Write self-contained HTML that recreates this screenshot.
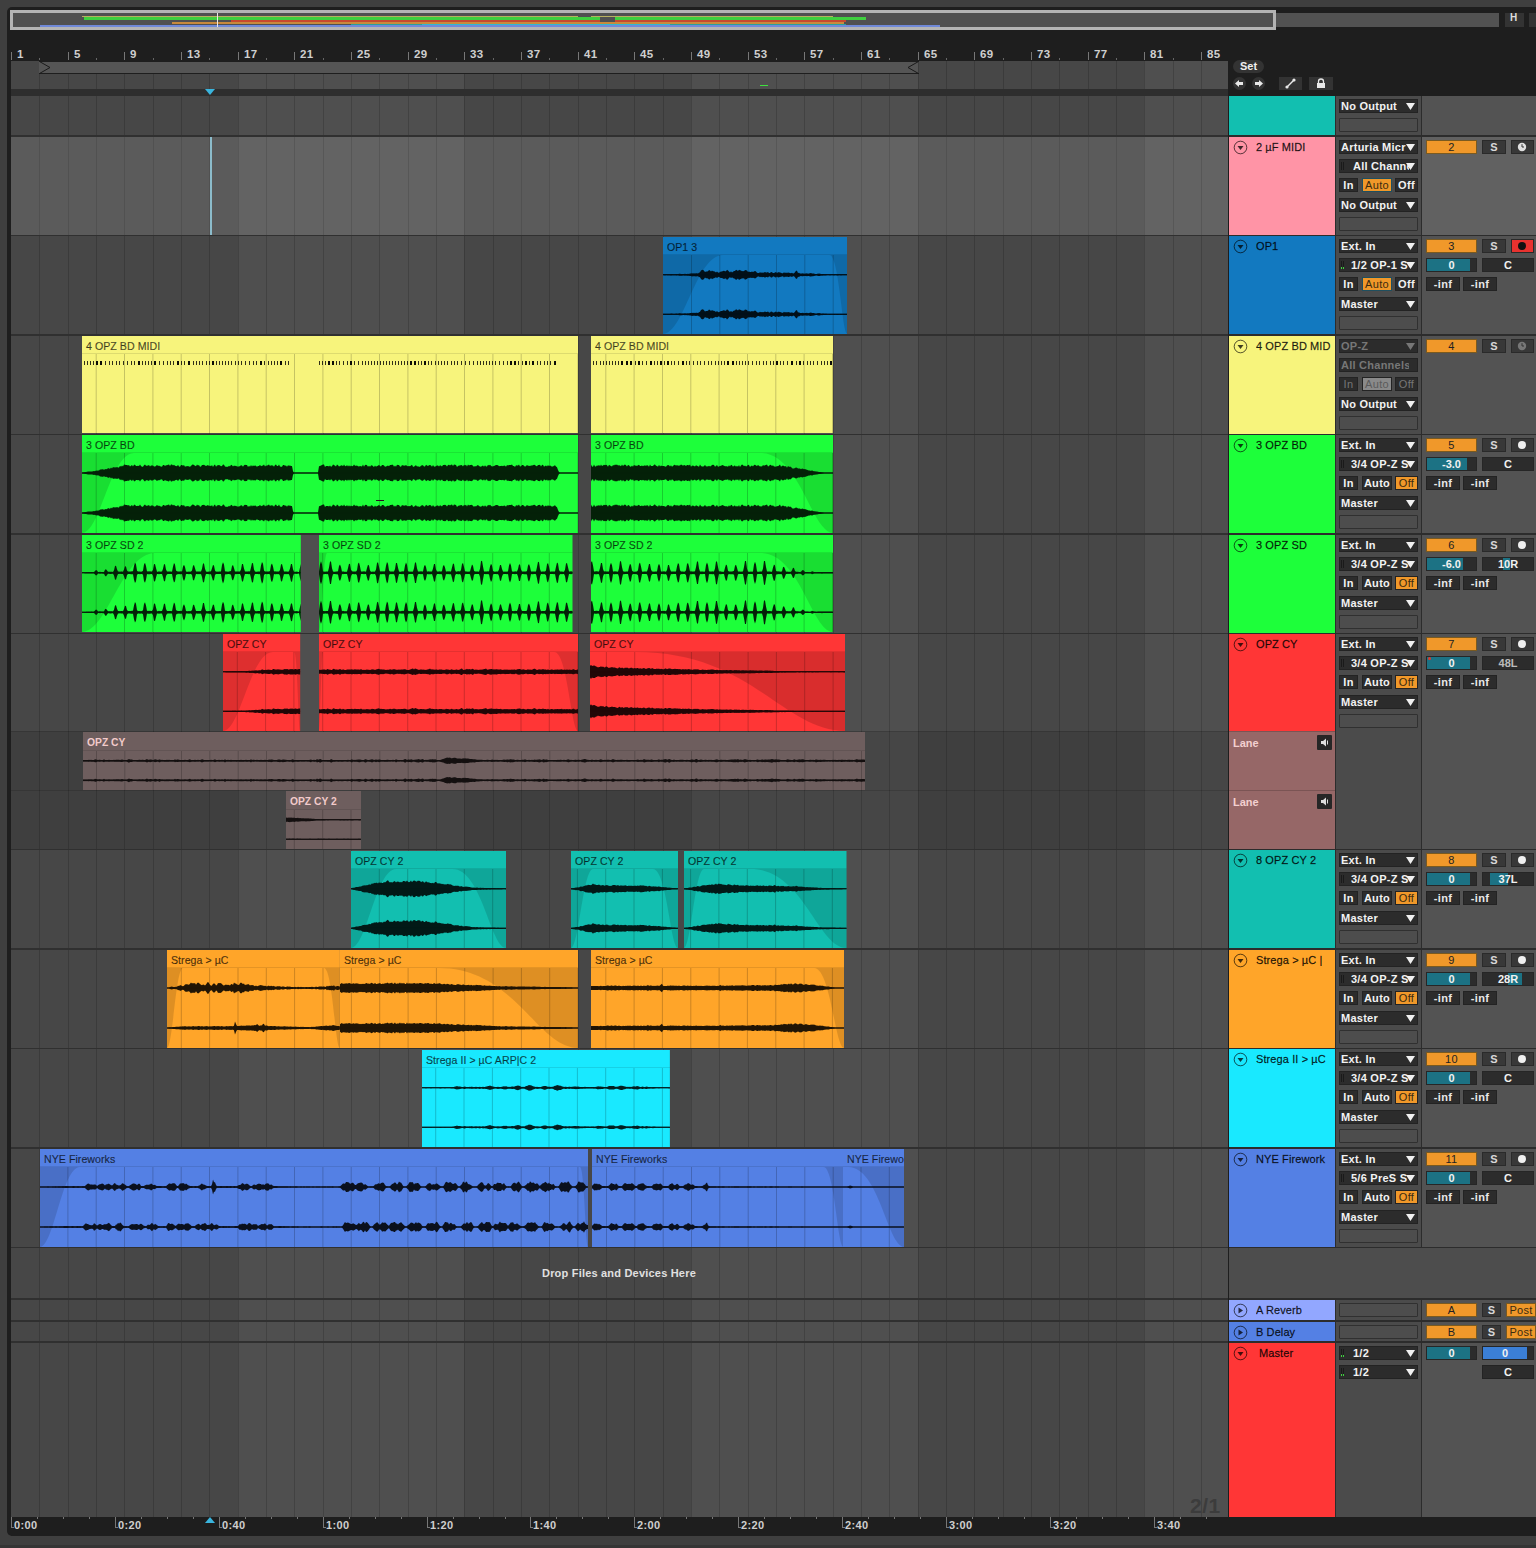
<!DOCTYPE html><html><head><meta charset="utf-8"><style>
html,body{margin:0;padding:0;width:1536px;height:1548px;overflow:hidden;background:#3f3f3f}
body{position:relative;font-family:"Liberation Sans",sans-serif}
div,span,svg{position:absolute;box-sizing:border-box}
span{white-space:nowrap;line-height:1}
</style></head><body>
<div style="left:0px;top:0px;width:1536px;height:1548px;background:#3f3f3f;"></div>
<div style="left:0px;top:1545px;width:1536px;height:3px;background:#353535;"></div>
<div style="left:7px;top:7px;width:1529px;height:1529px;background:#1e1e1e;border-radius:5px 0 0 5px;"></div>
<div style="left:10px;top:10px;width:1266px;height:20px;background:#b4b4b4;"></div>
<div style="left:13px;top:13px;width:1260px;height:14px;background:#505050;"></div>
<div style="left:1276px;top:13px;width:223px;height:14px;background:#525252;"></div>
<div style="left:1505px;top:13px;width:19px;height:14px;background:#333;"></div>
<span style="left:1510px;top:13px;font-size:10px;color:#ddd;font-weight:bold;">H</span>
<div style="left:1529px;top:13px;width:7px;height:14px;background:#333;"></div>
<div style="left:82px;top:16px;width:496px;height:1px;background:#b8b060;"></div>
<div style="left:591px;top:16px;width:242px;height:1px;background:#b8b060;"></div>
<div style="left:84px;top:17px;width:516px;height:3px;background:#3fcf3f;"></div>
<div style="left:615px;top:17px;width:251px;height:3px;background:#3fcf3f;"></div>
<div style="left:231px;top:20px;width:369px;height:2px;background:#c8482e;"></div>
<div style="left:615px;top:20px;width:231px;height:2px;background:#c8482e;"></div>
<div style="left:172px;top:22px;width:672px;height:2px;background:#c88a3c;"></div>
<div style="left:351px;top:24px;width:155px;height:1px;background:#2a9f9a;"></div>
<div style="left:571px;top:24px;width:275px;height:1px;background:#2a9f9a;"></div>
<div style="left:422px;top:24px;width:248px;height:1px;background:#2fb8d0;"></div>
<div style="left:40px;top:25px;width:900px;height:2px;background:#7089d8;"></div>
<div style="left:217px;top:13px;width:1px;height:14px;background:#e8e8e8;"></div>
<div style="left:11px;top:52px;width:1px;height:8px;background:#777;"></div>
<span style="left:17px;top:49px;font-size:11.5px;color:#cfcfcf;font-weight:bold;letter-spacing:0.3px;">1</span>
<div style="left:68px;top:52px;width:1px;height:8px;background:#777;"></div>
<span style="left:74px;top:49px;font-size:11.5px;color:#cfcfcf;font-weight:bold;letter-spacing:0.3px;">5</span>
<div style="left:124px;top:52px;width:1px;height:8px;background:#777;"></div>
<span style="left:130px;top:49px;font-size:11.5px;color:#cfcfcf;font-weight:bold;letter-spacing:0.3px;">9</span>
<div style="left:181px;top:52px;width:1px;height:8px;background:#777;"></div>
<span style="left:187px;top:49px;font-size:11.5px;color:#cfcfcf;font-weight:bold;letter-spacing:0.3px;">13</span>
<div style="left:238px;top:52px;width:1px;height:8px;background:#777;"></div>
<span style="left:244px;top:49px;font-size:11.5px;color:#cfcfcf;font-weight:bold;letter-spacing:0.3px;">17</span>
<div style="left:294px;top:52px;width:1px;height:8px;background:#777;"></div>
<span style="left:300px;top:49px;font-size:11.5px;color:#cfcfcf;font-weight:bold;letter-spacing:0.3px;">21</span>
<div style="left:351px;top:52px;width:1px;height:8px;background:#777;"></div>
<span style="left:357px;top:49px;font-size:11.5px;color:#cfcfcf;font-weight:bold;letter-spacing:0.3px;">25</span>
<div style="left:408px;top:52px;width:1px;height:8px;background:#777;"></div>
<span style="left:414px;top:49px;font-size:11.5px;color:#cfcfcf;font-weight:bold;letter-spacing:0.3px;">29</span>
<div style="left:464px;top:52px;width:1px;height:8px;background:#777;"></div>
<span style="left:470px;top:49px;font-size:11.5px;color:#cfcfcf;font-weight:bold;letter-spacing:0.3px;">33</span>
<div style="left:521px;top:52px;width:1px;height:8px;background:#777;"></div>
<span style="left:527px;top:49px;font-size:11.5px;color:#cfcfcf;font-weight:bold;letter-spacing:0.3px;">37</span>
<div style="left:578px;top:52px;width:1px;height:8px;background:#777;"></div>
<span style="left:584px;top:49px;font-size:11.5px;color:#cfcfcf;font-weight:bold;letter-spacing:0.3px;">41</span>
<div style="left:634px;top:52px;width:1px;height:8px;background:#777;"></div>
<span style="left:640px;top:49px;font-size:11.5px;color:#cfcfcf;font-weight:bold;letter-spacing:0.3px;">45</span>
<div style="left:691px;top:52px;width:1px;height:8px;background:#777;"></div>
<span style="left:697px;top:49px;font-size:11.5px;color:#cfcfcf;font-weight:bold;letter-spacing:0.3px;">49</span>
<div style="left:748px;top:52px;width:1px;height:8px;background:#777;"></div>
<span style="left:754px;top:49px;font-size:11.5px;color:#cfcfcf;font-weight:bold;letter-spacing:0.3px;">53</span>
<div style="left:804px;top:52px;width:1px;height:8px;background:#777;"></div>
<span style="left:810px;top:49px;font-size:11.5px;color:#cfcfcf;font-weight:bold;letter-spacing:0.3px;">57</span>
<div style="left:861px;top:52px;width:1px;height:8px;background:#777;"></div>
<span style="left:867px;top:49px;font-size:11.5px;color:#cfcfcf;font-weight:bold;letter-spacing:0.3px;">61</span>
<div style="left:918px;top:52px;width:1px;height:8px;background:#777;"></div>
<span style="left:924px;top:49px;font-size:11.5px;color:#cfcfcf;font-weight:bold;letter-spacing:0.3px;">65</span>
<div style="left:974px;top:52px;width:1px;height:8px;background:#777;"></div>
<span style="left:980px;top:49px;font-size:11.5px;color:#cfcfcf;font-weight:bold;letter-spacing:0.3px;">69</span>
<div style="left:1031px;top:52px;width:1px;height:8px;background:#777;"></div>
<span style="left:1037px;top:49px;font-size:11.5px;color:#cfcfcf;font-weight:bold;letter-spacing:0.3px;">73</span>
<div style="left:1088px;top:52px;width:1px;height:8px;background:#777;"></div>
<span style="left:1094px;top:49px;font-size:11.5px;color:#cfcfcf;font-weight:bold;letter-spacing:0.3px;">77</span>
<div style="left:1144px;top:52px;width:1px;height:8px;background:#777;"></div>
<span style="left:1150px;top:49px;font-size:11.5px;color:#cfcfcf;font-weight:bold;letter-spacing:0.3px;">81</span>
<div style="left:1201px;top:52px;width:1px;height:8px;background:#777;"></div>
<span style="left:1207px;top:49px;font-size:11.5px;color:#cfcfcf;font-weight:bold;letter-spacing:0.3px;">85</span>
<div style="left:39px;top:58px;width:1px;height:2px;background:#666;"></div>
<div style="left:96px;top:58px;width:1px;height:2px;background:#666;"></div>
<div style="left:153px;top:58px;width:1px;height:2px;background:#666;"></div>
<div style="left:209px;top:58px;width:1px;height:2px;background:#666;"></div>
<div style="left:266px;top:58px;width:1px;height:2px;background:#666;"></div>
<div style="left:323px;top:58px;width:1px;height:2px;background:#666;"></div>
<div style="left:379px;top:58px;width:1px;height:2px;background:#666;"></div>
<div style="left:436px;top:58px;width:1px;height:2px;background:#666;"></div>
<div style="left:493px;top:58px;width:1px;height:2px;background:#666;"></div>
<div style="left:549px;top:58px;width:1px;height:2px;background:#666;"></div>
<div style="left:606px;top:58px;width:1px;height:2px;background:#666;"></div>
<div style="left:663px;top:58px;width:1px;height:2px;background:#666;"></div>
<div style="left:719px;top:58px;width:1px;height:2px;background:#666;"></div>
<div style="left:776px;top:58px;width:1px;height:2px;background:#666;"></div>
<div style="left:833px;top:58px;width:1px;height:2px;background:#666;"></div>
<div style="left:889px;top:58px;width:1px;height:2px;background:#666;"></div>
<div style="left:946px;top:58px;width:1px;height:2px;background:#666;"></div>
<div style="left:1003px;top:58px;width:1px;height:2px;background:#666;"></div>
<div style="left:1059px;top:58px;width:1px;height:2px;background:#666;"></div>
<div style="left:1116px;top:58px;width:1px;height:2px;background:#666;"></div>
<div style="left:1173px;top:58px;width:1px;height:2px;background:#666;"></div>
<div style="left:11px;top:61px;width:227px;height:1456px;background:#474747;"></div>
<div style="left:238px;top:61px;width:226px;height:1456px;background:#4f4f4f;"></div>
<div style="left:464px;top:61px;width:227px;height:1456px;background:#474747;"></div>
<div style="left:691px;top:61px;width:227px;height:1456px;background:#4f4f4f;"></div>
<div style="left:918px;top:61px;width:226px;height:1456px;background:#474747;"></div>
<div style="left:1144px;top:61px;width:84px;height:1456px;background:#4f4f4f;"></div>
<div style="left:39px;top:61px;width:1px;height:1456px;background:rgba(0,0,0,0.16);"></div>
<div style="left:68px;top:61px;width:1px;height:1456px;background:rgba(0,0,0,0.16);"></div>
<div style="left:96px;top:61px;width:1px;height:1456px;background:rgba(0,0,0,0.16);"></div>
<div style="left:124px;top:61px;width:1px;height:1456px;background:rgba(0,0,0,0.16);"></div>
<div style="left:153px;top:61px;width:1px;height:1456px;background:rgba(0,0,0,0.16);"></div>
<div style="left:181px;top:61px;width:1px;height:1456px;background:rgba(0,0,0,0.16);"></div>
<div style="left:209px;top:61px;width:1px;height:1456px;background:rgba(0,0,0,0.16);"></div>
<div style="left:238px;top:61px;width:1px;height:1456px;background:rgba(0,0,0,0.16);"></div>
<div style="left:266px;top:61px;width:1px;height:1456px;background:rgba(0,0,0,0.16);"></div>
<div style="left:294px;top:61px;width:1px;height:1456px;background:rgba(0,0,0,0.16);"></div>
<div style="left:323px;top:61px;width:1px;height:1456px;background:rgba(0,0,0,0.16);"></div>
<div style="left:351px;top:61px;width:1px;height:1456px;background:rgba(0,0,0,0.16);"></div>
<div style="left:379px;top:61px;width:1px;height:1456px;background:rgba(0,0,0,0.16);"></div>
<div style="left:408px;top:61px;width:1px;height:1456px;background:rgba(0,0,0,0.16);"></div>
<div style="left:436px;top:61px;width:1px;height:1456px;background:rgba(0,0,0,0.16);"></div>
<div style="left:464px;top:61px;width:1px;height:1456px;background:rgba(0,0,0,0.16);"></div>
<div style="left:493px;top:61px;width:1px;height:1456px;background:rgba(0,0,0,0.16);"></div>
<div style="left:521px;top:61px;width:1px;height:1456px;background:rgba(0,0,0,0.16);"></div>
<div style="left:549px;top:61px;width:1px;height:1456px;background:rgba(0,0,0,0.16);"></div>
<div style="left:578px;top:61px;width:1px;height:1456px;background:rgba(0,0,0,0.16);"></div>
<div style="left:606px;top:61px;width:1px;height:1456px;background:rgba(0,0,0,0.16);"></div>
<div style="left:634px;top:61px;width:1px;height:1456px;background:rgba(0,0,0,0.16);"></div>
<div style="left:663px;top:61px;width:1px;height:1456px;background:rgba(0,0,0,0.16);"></div>
<div style="left:691px;top:61px;width:1px;height:1456px;background:rgba(0,0,0,0.16);"></div>
<div style="left:719px;top:61px;width:1px;height:1456px;background:rgba(0,0,0,0.16);"></div>
<div style="left:748px;top:61px;width:1px;height:1456px;background:rgba(0,0,0,0.16);"></div>
<div style="left:776px;top:61px;width:1px;height:1456px;background:rgba(0,0,0,0.16);"></div>
<div style="left:804px;top:61px;width:1px;height:1456px;background:rgba(0,0,0,0.16);"></div>
<div style="left:833px;top:61px;width:1px;height:1456px;background:rgba(0,0,0,0.16);"></div>
<div style="left:861px;top:61px;width:1px;height:1456px;background:rgba(0,0,0,0.16);"></div>
<div style="left:889px;top:61px;width:1px;height:1456px;background:rgba(0,0,0,0.16);"></div>
<div style="left:918px;top:61px;width:1px;height:1456px;background:rgba(0,0,0,0.16);"></div>
<div style="left:946px;top:61px;width:1px;height:1456px;background:rgba(0,0,0,0.16);"></div>
<div style="left:974px;top:61px;width:1px;height:1456px;background:rgba(0,0,0,0.16);"></div>
<div style="left:1003px;top:61px;width:1px;height:1456px;background:rgba(0,0,0,0.16);"></div>
<div style="left:1031px;top:61px;width:1px;height:1456px;background:rgba(0,0,0,0.16);"></div>
<div style="left:1059px;top:61px;width:1px;height:1456px;background:rgba(0,0,0,0.16);"></div>
<div style="left:1088px;top:61px;width:1px;height:1456px;background:rgba(0,0,0,0.16);"></div>
<div style="left:1116px;top:61px;width:1px;height:1456px;background:rgba(0,0,0,0.16);"></div>
<div style="left:1144px;top:61px;width:1px;height:1456px;background:rgba(0,0,0,0.16);"></div>
<div style="left:1173px;top:61px;width:1px;height:1456px;background:rgba(0,0,0,0.16);"></div>
<div style="left:1201px;top:61px;width:1px;height:1456px;background:rgba(0,0,0,0.16);"></div>
<div style="left:39px;top:61px;width:879px;height:12px;background:#555555;"></div>
<div style="left:39px;top:61px;width:880px;height:1px;background:#1e1e1e;"></div>
<div style="left:39px;top:73px;width:880px;height:1px;background:#1e1e1e;"></div>
<div style="left:11px;top:89px;width:1217px;height:7px;background:#2e2e2e;"></div>
<div style="left:11px;top:137px;width:1217px;height:98px;background:rgba(255,255,255,0.115);"></div>
<div style="left:11px;top:731px;width:1217px;height:118px;background:rgba(0,0,0,0.1);"></div>
<div style="left:11px;top:135px;width:1217px;height:2px;background:#303030;"></div>
<div style="left:11px;top:235px;width:1217px;height:1px;background:#303030;"></div>
<div style="left:11px;top:334px;width:1217px;height:2px;background:#303030;"></div>
<div style="left:11px;top:434px;width:1217px;height:1px;background:#303030;"></div>
<div style="left:11px;top:533px;width:1217px;height:2px;background:#303030;"></div>
<div style="left:11px;top:633px;width:1217px;height:1px;background:#303030;"></div>
<div style="left:11px;top:731px;width:1217px;height:1px;background:rgba(0,0,0,0.14);"></div>
<div style="left:11px;top:790px;width:1217px;height:1px;background:rgba(0,0,0,0.14);"></div>
<div style="left:11px;top:849px;width:1217px;height:1px;background:#303030;"></div>
<div style="left:11px;top:948px;width:1217px;height:2px;background:#303030;"></div>
<div style="left:11px;top:1048px;width:1217px;height:1px;background:#303030;"></div>
<div style="left:11px;top:1147px;width:1217px;height:2px;background:#303030;"></div>
<div style="left:11px;top:1247px;width:1217px;height:1px;background:#303030;"></div>
<div style="left:11px;top:1298px;width:1217px;height:2px;background:#303030;"></div>
<div style="left:11px;top:1320px;width:1217px;height:2px;background:#303030;"></div>
<div style="left:11px;top:1341px;width:1217px;height:2px;background:#303030;"></div>
<div style="left:11px;top:1517px;width:1525px;height:19px;background:#1e1e1e;"></div>
<div style="left:11px;top:1517px;width:1px;height:2px;background:#777;"></div>
<div style="left:37px;top:1517px;width:1px;height:2px;background:#777;"></div>
<div style="left:63px;top:1517px;width:1px;height:2px;background:#777;"></div>
<div style="left:89px;top:1517px;width:1px;height:2px;background:#777;"></div>
<div style="left:115px;top:1517px;width:1px;height:2px;background:#777;"></div>
<div style="left:141px;top:1517px;width:1px;height:2px;background:#777;"></div>
<div style="left:167px;top:1517px;width:1px;height:2px;background:#777;"></div>
<div style="left:193px;top:1517px;width:1px;height:2px;background:#777;"></div>
<div style="left:219px;top:1517px;width:1px;height:2px;background:#777;"></div>
<div style="left:245px;top:1517px;width:1px;height:2px;background:#777;"></div>
<div style="left:271px;top:1517px;width:1px;height:2px;background:#777;"></div>
<div style="left:297px;top:1517px;width:1px;height:2px;background:#777;"></div>
<div style="left:323px;top:1517px;width:1px;height:2px;background:#777;"></div>
<div style="left:349px;top:1517px;width:1px;height:2px;background:#777;"></div>
<div style="left:375px;top:1517px;width:1px;height:2px;background:#777;"></div>
<div style="left:401px;top:1517px;width:1px;height:2px;background:#777;"></div>
<div style="left:427px;top:1517px;width:1px;height:2px;background:#777;"></div>
<div style="left:453px;top:1517px;width:1px;height:2px;background:#777;"></div>
<div style="left:479px;top:1517px;width:1px;height:2px;background:#777;"></div>
<div style="left:505px;top:1517px;width:1px;height:2px;background:#777;"></div>
<div style="left:530px;top:1517px;width:1px;height:2px;background:#777;"></div>
<div style="left:556px;top:1517px;width:1px;height:2px;background:#777;"></div>
<div style="left:582px;top:1517px;width:1px;height:2px;background:#777;"></div>
<div style="left:608px;top:1517px;width:1px;height:2px;background:#777;"></div>
<div style="left:634px;top:1517px;width:1px;height:2px;background:#777;"></div>
<div style="left:660px;top:1517px;width:1px;height:2px;background:#777;"></div>
<div style="left:686px;top:1517px;width:1px;height:2px;background:#777;"></div>
<div style="left:712px;top:1517px;width:1px;height:2px;background:#777;"></div>
<div style="left:738px;top:1517px;width:1px;height:2px;background:#777;"></div>
<div style="left:764px;top:1517px;width:1px;height:2px;background:#777;"></div>
<div style="left:790px;top:1517px;width:1px;height:2px;background:#777;"></div>
<div style="left:816px;top:1517px;width:1px;height:2px;background:#777;"></div>
<div style="left:842px;top:1517px;width:1px;height:2px;background:#777;"></div>
<div style="left:868px;top:1517px;width:1px;height:2px;background:#777;"></div>
<div style="left:894px;top:1517px;width:1px;height:2px;background:#777;"></div>
<div style="left:920px;top:1517px;width:1px;height:2px;background:#777;"></div>
<div style="left:946px;top:1517px;width:1px;height:2px;background:#777;"></div>
<div style="left:972px;top:1517px;width:1px;height:2px;background:#777;"></div>
<div style="left:998px;top:1517px;width:1px;height:2px;background:#777;"></div>
<div style="left:1024px;top:1517px;width:1px;height:2px;background:#777;"></div>
<div style="left:1050px;top:1517px;width:1px;height:2px;background:#777;"></div>
<div style="left:1076px;top:1517px;width:1px;height:2px;background:#777;"></div>
<div style="left:1102px;top:1517px;width:1px;height:2px;background:#777;"></div>
<div style="left:1128px;top:1517px;width:1px;height:2px;background:#777;"></div>
<div style="left:1154px;top:1517px;width:1px;height:2px;background:#777;"></div>
<div style="left:1180px;top:1517px;width:1px;height:2px;background:#777;"></div>
<div style="left:1206px;top:1517px;width:1px;height:2px;background:#777;"></div>
<div style="left:11px;top:1518px;width:1px;height:10px;background:#777;"></div>
<div style="left:11px;top:1527px;width:3px;height:1px;background:#777;"></div>
<span style="left:14px;top:1520px;font-size:11px;color:#cfcfcf;font-weight:bold;letter-spacing:0.4px;">0:00</span>
<div style="left:115px;top:1518px;width:1px;height:10px;background:#777;"></div>
<div style="left:115px;top:1527px;width:3px;height:1px;background:#777;"></div>
<span style="left:118px;top:1520px;font-size:11px;color:#cfcfcf;font-weight:bold;letter-spacing:0.4px;">0:20</span>
<div style="left:219px;top:1518px;width:1px;height:10px;background:#777;"></div>
<div style="left:219px;top:1527px;width:3px;height:1px;background:#777;"></div>
<span style="left:222px;top:1520px;font-size:11px;color:#cfcfcf;font-weight:bold;letter-spacing:0.4px;">0:40</span>
<div style="left:323px;top:1518px;width:1px;height:10px;background:#777;"></div>
<div style="left:323px;top:1527px;width:3px;height:1px;background:#777;"></div>
<span style="left:326px;top:1520px;font-size:11px;color:#cfcfcf;font-weight:bold;letter-spacing:0.4px;">1:00</span>
<div style="left:427px;top:1518px;width:1px;height:10px;background:#777;"></div>
<div style="left:427px;top:1527px;width:3px;height:1px;background:#777;"></div>
<span style="left:430px;top:1520px;font-size:11px;color:#cfcfcf;font-weight:bold;letter-spacing:0.4px;">1:20</span>
<div style="left:530px;top:1518px;width:1px;height:10px;background:#777;"></div>
<div style="left:530px;top:1527px;width:3px;height:1px;background:#777;"></div>
<span style="left:533px;top:1520px;font-size:11px;color:#cfcfcf;font-weight:bold;letter-spacing:0.4px;">1:40</span>
<div style="left:634px;top:1518px;width:1px;height:10px;background:#777;"></div>
<div style="left:634px;top:1527px;width:3px;height:1px;background:#777;"></div>
<span style="left:637px;top:1520px;font-size:11px;color:#cfcfcf;font-weight:bold;letter-spacing:0.4px;">2:00</span>
<div style="left:738px;top:1518px;width:1px;height:10px;background:#777;"></div>
<div style="left:738px;top:1527px;width:3px;height:1px;background:#777;"></div>
<span style="left:741px;top:1520px;font-size:11px;color:#cfcfcf;font-weight:bold;letter-spacing:0.4px;">2:20</span>
<div style="left:842px;top:1518px;width:1px;height:10px;background:#777;"></div>
<div style="left:842px;top:1527px;width:3px;height:1px;background:#777;"></div>
<span style="left:845px;top:1520px;font-size:11px;color:#cfcfcf;font-weight:bold;letter-spacing:0.4px;">2:40</span>
<div style="left:946px;top:1518px;width:1px;height:10px;background:#777;"></div>
<div style="left:946px;top:1527px;width:3px;height:1px;background:#777;"></div>
<span style="left:949px;top:1520px;font-size:11px;color:#cfcfcf;font-weight:bold;letter-spacing:0.4px;">3:00</span>
<div style="left:1050px;top:1518px;width:1px;height:10px;background:#777;"></div>
<div style="left:1050px;top:1527px;width:3px;height:1px;background:#777;"></div>
<span style="left:1053px;top:1520px;font-size:11px;color:#cfcfcf;font-weight:bold;letter-spacing:0.4px;">3:20</span>
<div style="left:1154px;top:1518px;width:1px;height:10px;background:#777;"></div>
<div style="left:1154px;top:1527px;width:3px;height:1px;background:#777;"></div>
<span style="left:1157px;top:1520px;font-size:11px;color:#cfcfcf;font-weight:bold;letter-spacing:0.4px;">3:40</span>
<span style="left:1190px;top:1495px;font-size:21px;color:#3c3c3c;font-weight:bold;letter-spacing:0.5px;">2/1</span>
<svg style="left:662.5px;top:237px" width="184.4" height="97" viewBox="0 0 184.4 97"><rect x="0" y="0" width="184.4" height="97" fill="#1279C0"/><path d="M0 18 L60.0 18 C33.0 18 21.0 97 0 97 Z" fill="rgba(0,0,0,0.13)"/><path d="M184.4 18 L166.4 18 C176.3 18 179.0 97 184.4 97 Z" fill="rgba(0,0,0,0.13)"/><rect x="0" y="17" width="184.4" height="1" fill="rgba(0,0,0,0.10)"/><rect x="28.0" y="18" width="1" height="79" fill="rgba(0,0,0,0.2)"/><rect x="56.3" y="18" width="1" height="79" fill="rgba(0,0,0,0.2)"/><rect x="84.7" y="18" width="1" height="79" fill="rgba(0,0,0,0.2)"/><rect x="113.0" y="18" width="1" height="79" fill="rgba(0,0,0,0.2)"/><rect x="141.3" y="18" width="1" height="79" fill="rgba(0,0,0,0.2)"/><rect x="169.7" y="18" width="1" height="79" fill="rgba(0,0,0,0.2)"/><path id="w70114800" d="M0 -0.5 1 -0.5 2 -0.6 3 -0.5 4 -0.5 5 -0.6 6 -0.5 7 -0.6 8 -0.7 9 -0.7 10 -0.5 11 -0.6 12 -0.5 13 -0.8 14 -0.8 15 -0.5 16 -1 17 -1 18 -0.9 19 -0.9 20 -0.7 21 -0.7 22 -1 23 -0.8 24 -0.9 25 -1 26 -0.9 27 -1.2 28 -1.2 29 -1.6 30 -1.4 31 -1.5 32 -1.4 33 -1.6 34 -1.5 35 -1.4 36 -2.1 37 -2.5 38 -4.2 39 -4.9 40 -5 41 -4.1 42 -2.7 43 -3.4 44 -3.4 45 -3.6 46 -4.7 47 -4.4 48 -3.2 49 -4.4 50 -3.6 51 -3.5 52 -3 53 -2.4 54 -3.2 55 -2.4 56 -2 57 -2.9 58 -3.2 59 -3.3 60 -3.8 61 -4.1 62 -3.6 63 -3.6 64 -5.1 65 -4.3 66 -3.2 67 -2.2 68 -3.5 69 -2.4 70 -3.1 71 -3.7 72 -3.9 73 -5.1 74 -4.5 75 -3.8 76 -5.1 77 -4.5 78 -4.3 79 -3.5 80 -3.7 81 -3.5 82 -4.9 83 -4.5 84 -4.3 85 -2.9 86 -3.2 87 -2.9 88 -2.9 89 -3.3 90 -2.9 91 -3.2 92 -3.7 93 -3.3 94 -2.1 95 -1.8 96 -1.8 97 -2.5 98 -2 99 -2.4 100 -2.1 101 -2.2 102 -2.9 103 -2.2 104 -2.3 105 -2.7 106 -1.8 107 -1.8 108 -2.7 109 -2.6 110 -1.8 111 -1.8 112 -2.4 113 -2.7 114 -1.7 115 -2.6 116 -2.5 117 -2.2 118 -2 119 -1.6 120 -1.5 121 -2.6 122 -1.7 123 -2.2 124 -1.7 125 -2.3 126 -2.1 127 -1.7 128 -1.6 129 -2.1 130 -1.4 131 -1.5 132 -2.5 133 -4 134 -4 135 -1.9 136 -2.1 137 -1.4 138 -1.2 139 -1.4 140 -1.5 141 -1.1 142 -1.2 143 -1.3 144 -1.5 145 -1.1 146 -1.3 147 -1.6 148 -1.7 149 -1.4 150 -1.4 151 -1.3 152 -0.9 153 -0.8 154 -0.8 155 -1.3 156 -1.1 157 -1.2 158 -0.6 159 -0.9 160 -0.8 161 -0.8 162 -0.6 163 -0.8 164 -0.5 165 -0.5 166 -0.5 167 -0.6 168 -0.5 169 -0.5 170 -0.5 171 -0.6 172 -0.5 173 -0.5 174 -0.6 175 -0.6 176 -0.5 177 -0.5 178 -0.6 179 -0.5 180 -0.5 181 -0.5 182 -0.5 183 -0.5 184 -0.5 184.4 -0.5 L184.4 0.5 184 0.5 183 0.5 182 0.5 181 0.5 180 0.5 179 0.5 178 0.6 177 0.5 176 0.5 175 0.6 174 0.6 173 0.5 172 0.5 171 0.6 170 0.5 169 0.5 168 0.5 167 0.6 166 0.5 165 0.5 164 0.5 163 0.8 162 0.6 161 0.8 160 0.8 159 0.9 158 0.6 157 1.2 156 1.1 155 1.3 154 0.8 153 0.8 152 0.9 151 1.3 150 1.4 149 1.4 148 1.7 147 1.6 146 1.3 145 1.1 144 1.5 143 1.3 142 1.2 141 1.1 140 1.5 139 1.4 138 1.2 137 1.4 136 2.1 135 1.9 134 4 133 4 132 2.5 131 1.5 130 1.4 129 2.1 128 1.6 127 1.7 126 2.1 125 2.3 124 1.7 123 2.2 122 1.7 121 2.6 120 1.5 119 1.6 118 2 117 2.2 116 2.5 115 2.6 114 1.7 113 2.7 112 2.4 111 1.8 110 1.8 109 2.6 108 2.7 107 1.8 106 1.8 105 2.7 104 2.3 103 2.2 102 2.9 101 2.2 100 2.1 99 2.4 98 2 97 2.5 96 1.8 95 1.8 94 2.1 93 3.3 92 3.7 91 3.2 90 2.9 89 3.3 88 2.9 87 2.9 86 3.2 85 2.9 84 4.3 83 4.5 82 4.9 81 3.5 80 3.7 79 3.5 78 4.3 77 4.5 76 5.1 75 3.8 74 4.5 73 5.1 72 3.9 71 3.7 70 3.1 69 2.4 68 3.5 67 2.2 66 3.2 65 4.3 64 5.1 63 3.6 62 3.6 61 4.1 60 3.8 59 3.3 58 3.2 57 2.9 56 2 55 2.4 54 3.2 53 2.4 52 3 51 3.5 50 3.6 49 4.4 48 3.2 47 4.4 46 4.7 45 3.6 44 3.4 43 3.4 42 2.7 41 4.1 40 5 39 4.9 38 4.2 37 2.5 36 2.1 35 1.4 34 1.5 33 1.6 32 1.4 31 1.5 30 1.4 29 1.6 28 1.2 27 1.2 26 0.9 25 1 24 0.9 23 0.8 22 1 21 0.7 20 0.7 19 0.9 18 0.9 17 1 16 1 15 0.5 14 0.8 13 0.8 12 0.5 11 0.6 10 0.5 9 0.7 8 0.7 7 0.6 6 0.5 5 0.6 4 0.5 3 0.5 2 0.6 1 0.5 0 0.5Z" fill="#021019" transform="translate(0 37.8)"/><use href="#w70114800" transform="translate(0 39.5)"/><rect x="0" y="37.2" width="184.4" height="1" fill="#021019"/><rect x="0" y="76.8" width="184.4" height="1" fill="#021019"/><text x="4" y="14" font-size="10.6" fill="rgba(0,0,0,0.68)" font-weight="normal" letter-spacing="0.05" stroke="rgba(0,0,0,0.68)" stroke-width="0.2" font-family="Liberation Sans">OP1 3</text></svg>
<svg style="left:81.8px;top:336px" width="496.5" height="97" viewBox="0 0 496.5 97"><rect x="0" y="0" width="496.5" height="97" fill="#F7F47C"/><rect x="0" y="17" width="496.5" height="1" fill="rgba(0,0,0,0.10)"/><rect x="13.7" y="18" width="1" height="79" fill="rgba(0,0,0,0.2)"/><rect x="42.0" y="18" width="1" height="79" fill="rgba(0,0,0,0.2)"/><rect x="70.4" y="18" width="1" height="79" fill="rgba(0,0,0,0.2)"/><rect x="98.7" y="18" width="1" height="79" fill="rgba(0,0,0,0.2)"/><rect x="127.0" y="18" width="1" height="79" fill="rgba(0,0,0,0.2)"/><rect x="155.4" y="18" width="1" height="79" fill="rgba(0,0,0,0.2)"/><rect x="183.7" y="18" width="1" height="79" fill="rgba(0,0,0,0.2)"/><rect x="212.0" y="18" width="1" height="79" fill="rgba(0,0,0,0.2)"/><rect x="240.4" y="18" width="1" height="79" fill="rgba(0,0,0,0.2)"/><rect x="268.7" y="18" width="1" height="79" fill="rgba(0,0,0,0.2)"/><rect x="297.0" y="18" width="1" height="79" fill="rgba(0,0,0,0.2)"/><rect x="325.4" y="18" width="1" height="79" fill="rgba(0,0,0,0.2)"/><rect x="353.7" y="18" width="1" height="79" fill="rgba(0,0,0,0.2)"/><rect x="382.0" y="18" width="1" height="79" fill="rgba(0,0,0,0.2)"/><rect x="410.4" y="18" width="1" height="79" fill="rgba(0,0,0,0.2)"/><rect x="438.7" y="18" width="1" height="79" fill="rgba(0,0,0,0.2)"/><rect x="467.0" y="18" width="1" height="79" fill="rgba(0,0,0,0.2)"/><rect x="495.4" y="18" width="1" height="79" fill="rgba(0,0,0,0.2)"/><rect x="2" y="25" width="1" height="4" fill="#000" fill-opacity="0.8"/><rect x="5" y="25" width="1" height="4" fill="#000" fill-opacity="0.8"/><rect x="8" y="25" width="1" height="4" fill="#000" fill-opacity="0.8"/><rect x="11" y="25" width="1" height="4" fill="#000" fill-opacity="0.8"/><rect x="14" y="25" width="2" height="4" fill="#000" fill-opacity="0.95"/><rect x="18" y="25" width="2" height="4" fill="#000" fill-opacity="0.95"/><rect x="23" y="25" width="1" height="4" fill="#000" fill-opacity="0.8"/><rect x="27" y="25" width="1" height="4" fill="#000" fill-opacity="0.8"/><rect x="30" y="25" width="1" height="4" fill="#000" fill-opacity="0.8"/><rect x="34" y="25" width="1" height="4" fill="#000" fill-opacity="0.8"/><rect x="37" y="25" width="1" height="4" fill="#000" fill-opacity="0.8"/><rect x="41" y="25" width="1" height="4" fill="#000" fill-opacity="0.8"/><rect x="45" y="25" width="1" height="4" fill="#000" fill-opacity="0.8"/><rect x="49" y="25" width="1" height="4" fill="#000" fill-opacity="0.8"/><rect x="52" y="25" width="1" height="4" fill="#000" fill-opacity="0.8"/><rect x="56" y="25" width="2" height="4" fill="#000" fill-opacity="0.95"/><rect x="60" y="25" width="1" height="4" fill="#000" fill-opacity="0.8"/><rect x="63" y="25" width="1" height="4" fill="#000" fill-opacity="0.8"/><rect x="66" y="25" width="1" height="4" fill="#000" fill-opacity="0.8"/><rect x="69" y="25" width="1" height="4" fill="#000" fill-opacity="0.8"/><rect x="72" y="25" width="2" height="4" fill="#000" fill-opacity="0.95"/><rect x="77" y="25" width="1" height="4" fill="#000" fill-opacity="0.8"/><rect x="81" y="25" width="1" height="4" fill="#000" fill-opacity="0.8"/><rect x="85" y="25" width="1" height="4" fill="#000" fill-opacity="0.8"/><rect x="88" y="25" width="1" height="4" fill="#000" fill-opacity="0.8"/><rect x="91" y="25" width="1" height="4" fill="#000" fill-opacity="0.8"/><rect x="95" y="25" width="2" height="4" fill="#000" fill-opacity="0.95"/><rect x="99" y="25" width="1" height="4" fill="#000" fill-opacity="0.8"/><rect x="102" y="25" width="1" height="4" fill="#000" fill-opacity="0.8"/><rect x="106" y="25" width="2" height="4" fill="#000" fill-opacity="0.95"/><rect x="111" y="25" width="1" height="4" fill="#000" fill-opacity="0.8"/><rect x="114" y="25" width="1" height="4" fill="#000" fill-opacity="0.8"/><rect x="117" y="25" width="1" height="4" fill="#000" fill-opacity="0.8"/><rect x="120" y="25" width="1" height="4" fill="#000" fill-opacity="0.8"/><rect x="124" y="25" width="1" height="4" fill="#000" fill-opacity="0.8"/><rect x="127" y="25" width="1" height="4" fill="#000" fill-opacity="0.8"/><rect x="130" y="25" width="2" height="4" fill="#000" fill-opacity="0.95"/><rect x="134" y="25" width="1" height="4" fill="#000" fill-opacity="0.8"/><rect x="137" y="25" width="1" height="4" fill="#000" fill-opacity="0.8"/><rect x="140" y="25" width="1" height="4" fill="#000" fill-opacity="0.8"/><rect x="143" y="25" width="1" height="4" fill="#000" fill-opacity="0.8"/><rect x="146" y="25" width="1" height="4" fill="#000" fill-opacity="0.8"/><rect x="149" y="25" width="1" height="4" fill="#000" fill-opacity="0.8"/><rect x="153" y="25" width="1" height="4" fill="#000" fill-opacity="0.8"/><rect x="156" y="25" width="1" height="4" fill="#000" fill-opacity="0.8"/><rect x="159" y="25" width="1" height="4" fill="#000" fill-opacity="0.8"/><rect x="163" y="25" width="1" height="4" fill="#000" fill-opacity="0.8"/><rect x="167" y="25" width="1" height="4" fill="#000" fill-opacity="0.8"/><rect x="171" y="25" width="1" height="4" fill="#000" fill-opacity="0.8"/><rect x="174" y="25" width="1" height="4" fill="#000" fill-opacity="0.8"/><rect x="178" y="25" width="2" height="4" fill="#000" fill-opacity="0.95"/><rect x="182" y="25" width="1" height="4" fill="#000" fill-opacity="0.8"/><rect x="186" y="25" width="1" height="4" fill="#000" fill-opacity="0.8"/><rect x="189" y="25" width="1" height="4" fill="#000" fill-opacity="0.8"/><rect x="192" y="25" width="1" height="4" fill="#000" fill-opacity="0.8"/><rect x="195" y="25" width="1" height="4" fill="#000" fill-opacity="0.8"/><rect x="198" y="25" width="2" height="4" fill="#000" fill-opacity="0.95"/><rect x="203" y="25" width="1" height="4" fill="#000" fill-opacity="0.8"/><rect x="206" y="25" width="1" height="4" fill="#000" fill-opacity="0.8"/><rect x="237" y="25" width="1" height="4" fill="#000" fill-opacity="0.8"/><rect x="240" y="25" width="1" height="4" fill="#000" fill-opacity="0.8"/><rect x="243" y="25" width="1" height="4" fill="#000" fill-opacity="0.8"/><rect x="246" y="25" width="2" height="4" fill="#000" fill-opacity="0.95"/><rect x="250" y="25" width="2" height="4" fill="#000" fill-opacity="0.95"/><rect x="254" y="25" width="1" height="4" fill="#000" fill-opacity="0.8"/><rect x="257" y="25" width="1" height="4" fill="#000" fill-opacity="0.8"/><rect x="261" y="25" width="1" height="4" fill="#000" fill-opacity="0.8"/><rect x="265" y="25" width="1" height="4" fill="#000" fill-opacity="0.8"/><rect x="268" y="25" width="2" height="4" fill="#000" fill-opacity="0.95"/><rect x="272" y="25" width="1" height="4" fill="#000" fill-opacity="0.8"/><rect x="276" y="25" width="1" height="4" fill="#000" fill-opacity="0.8"/><rect x="280" y="25" width="1" height="4" fill="#000" fill-opacity="0.8"/><rect x="283" y="25" width="1" height="4" fill="#000" fill-opacity="0.8"/><rect x="286" y="25" width="1" height="4" fill="#000" fill-opacity="0.8"/><rect x="289" y="25" width="1" height="4" fill="#000" fill-opacity="0.8"/><rect x="292" y="25" width="1" height="4" fill="#000" fill-opacity="0.8"/><rect x="295" y="25" width="1" height="4" fill="#000" fill-opacity="0.8"/><rect x="298" y="25" width="1" height="4" fill="#000" fill-opacity="0.8"/><rect x="301" y="25" width="1" height="4" fill="#000" fill-opacity="0.8"/><rect x="304" y="25" width="1" height="4" fill="#000" fill-opacity="0.8"/><rect x="307" y="25" width="1" height="4" fill="#000" fill-opacity="0.8"/><rect x="310" y="25" width="1" height="4" fill="#000" fill-opacity="0.8"/><rect x="313" y="25" width="1" height="4" fill="#000" fill-opacity="0.8"/><rect x="316" y="25" width="1" height="4" fill="#000" fill-opacity="0.8"/><rect x="319" y="25" width="1" height="4" fill="#000" fill-opacity="0.8"/><rect x="322" y="25" width="1" height="4" fill="#000" fill-opacity="0.8"/><rect x="325" y="25" width="1" height="4" fill="#000" fill-opacity="0.8"/><rect x="328" y="25" width="2" height="4" fill="#000" fill-opacity="0.95"/><rect x="332" y="25" width="2" height="4" fill="#000" fill-opacity="0.95"/><rect x="336" y="25" width="1" height="4" fill="#000" fill-opacity="0.8"/><rect x="339" y="25" width="1" height="4" fill="#000" fill-opacity="0.8"/><rect x="342" y="25" width="2" height="4" fill="#000" fill-opacity="0.95"/><rect x="346" y="25" width="1" height="4" fill="#000" fill-opacity="0.8"/><rect x="349" y="25" width="1" height="4" fill="#000" fill-opacity="0.8"/><rect x="353" y="25" width="1" height="4" fill="#000" fill-opacity="0.8"/><rect x="356" y="25" width="1" height="4" fill="#000" fill-opacity="0.8"/><rect x="359" y="25" width="1" height="4" fill="#000" fill-opacity="0.8"/><rect x="362" y="25" width="1" height="4" fill="#000" fill-opacity="0.8"/><rect x="365" y="25" width="1" height="4" fill="#000" fill-opacity="0.8"/><rect x="369" y="25" width="1" height="4" fill="#000" fill-opacity="0.8"/><rect x="372" y="25" width="1" height="4" fill="#000" fill-opacity="0.8"/><rect x="375" y="25" width="1" height="4" fill="#000" fill-opacity="0.8"/><rect x="379" y="25" width="1" height="4" fill="#000" fill-opacity="0.8"/><rect x="383" y="25" width="1" height="4" fill="#000" fill-opacity="0.8"/><rect x="387" y="25" width="1" height="4" fill="#000" fill-opacity="0.8"/><rect x="391" y="25" width="1" height="4" fill="#000" fill-opacity="0.8"/><rect x="395" y="25" width="1" height="4" fill="#000" fill-opacity="0.8"/><rect x="398" y="25" width="1" height="4" fill="#000" fill-opacity="0.8"/><rect x="401" y="25" width="1" height="4" fill="#000" fill-opacity="0.8"/><rect x="404" y="25" width="1" height="4" fill="#000" fill-opacity="0.8"/><rect x="407" y="25" width="1" height="4" fill="#000" fill-opacity="0.8"/><rect x="410" y="25" width="1" height="4" fill="#000" fill-opacity="0.8"/><rect x="413" y="25" width="1" height="4" fill="#000" fill-opacity="0.8"/><rect x="417" y="25" width="1" height="4" fill="#000" fill-opacity="0.8"/><rect x="421" y="25" width="1" height="4" fill="#000" fill-opacity="0.8"/><rect x="425" y="25" width="1" height="4" fill="#000" fill-opacity="0.8"/><rect x="428" y="25" width="2" height="4" fill="#000" fill-opacity="0.95"/><rect x="432" y="25" width="2" height="4" fill="#000" fill-opacity="0.95"/><rect x="436" y="25" width="1" height="4" fill="#000" fill-opacity="0.8"/><rect x="440" y="25" width="1" height="4" fill="#000" fill-opacity="0.8"/><rect x="443" y="25" width="2" height="4" fill="#000" fill-opacity="0.95"/><rect x="447" y="25" width="1" height="4" fill="#000" fill-opacity="0.8"/><rect x="450" y="25" width="2" height="4" fill="#000" fill-opacity="0.95"/><rect x="455" y="25" width="1" height="4" fill="#000" fill-opacity="0.8"/><rect x="458" y="25" width="1" height="4" fill="#000" fill-opacity="0.8"/><rect x="462" y="25" width="1" height="4" fill="#000" fill-opacity="0.8"/><rect x="465" y="25" width="1" height="4" fill="#000" fill-opacity="0.8"/><rect x="468" y="25" width="1" height="4" fill="#000" fill-opacity="0.8"/><rect x="472" y="25" width="2" height="4" fill="#000" fill-opacity="0.95"/><text x="4" y="14" font-size="10.6" fill="rgba(0,0,0,0.68)" font-weight="normal" letter-spacing="0.05" stroke="rgba(0,0,0,0.68)" stroke-width="0.2" font-family="Liberation Sans">4 OPZ BD MIDI</text></svg>
<svg style="left:591.2px;top:336px" width="242.3" height="97" viewBox="0 0 242.3 97"><rect x="0" y="0" width="242.3" height="97" fill="#F7F47C"/><rect x="0" y="17" width="242.3" height="1" fill="rgba(0,0,0,0.10)"/><rect x="14.3" y="18" width="1" height="79" fill="rgba(0,0,0,0.2)"/><rect x="42.6" y="18" width="1" height="79" fill="rgba(0,0,0,0.2)"/><rect x="71.0" y="18" width="1" height="79" fill="rgba(0,0,0,0.2)"/><rect x="99.3" y="18" width="1" height="79" fill="rgba(0,0,0,0.2)"/><rect x="127.6" y="18" width="1" height="79" fill="rgba(0,0,0,0.2)"/><rect x="156.0" y="18" width="1" height="79" fill="rgba(0,0,0,0.2)"/><rect x="184.3" y="18" width="1" height="79" fill="rgba(0,0,0,0.2)"/><rect x="212.6" y="18" width="1" height="79" fill="rgba(0,0,0,0.2)"/><rect x="241.0" y="18" width="1" height="79" fill="rgba(0,0,0,0.2)"/><rect x="2" y="25" width="1" height="4" fill="#000" fill-opacity="0.8"/><rect x="5" y="25" width="1" height="4" fill="#000" fill-opacity="0.8"/><rect x="9" y="25" width="1" height="4" fill="#000" fill-opacity="0.8"/><rect x="12" y="25" width="1" height="4" fill="#000" fill-opacity="0.8"/><rect x="15" y="25" width="1" height="4" fill="#000" fill-opacity="0.8"/><rect x="18" y="25" width="1" height="4" fill="#000" fill-opacity="0.8"/><rect x="21" y="25" width="1" height="4" fill="#000" fill-opacity="0.8"/><rect x="24" y="25" width="1" height="4" fill="#000" fill-opacity="0.8"/><rect x="27" y="25" width="1" height="4" fill="#000" fill-opacity="0.8"/><rect x="30" y="25" width="2" height="4" fill="#000" fill-opacity="0.95"/><rect x="35" y="25" width="2" height="4" fill="#000" fill-opacity="0.95"/><rect x="39" y="25" width="2" height="4" fill="#000" fill-opacity="0.95"/><rect x="44" y="25" width="1" height="4" fill="#000" fill-opacity="0.8"/><rect x="47" y="25" width="2" height="4" fill="#000" fill-opacity="0.95"/><rect x="51" y="25" width="1" height="4" fill="#000" fill-opacity="0.8"/><rect x="55" y="25" width="1" height="4" fill="#000" fill-opacity="0.8"/><rect x="59" y="25" width="2" height="4" fill="#000" fill-opacity="0.95"/><rect x="63" y="25" width="1" height="4" fill="#000" fill-opacity="0.8"/><rect x="66" y="25" width="1" height="4" fill="#000" fill-opacity="0.8"/><rect x="69" y="25" width="2" height="4" fill="#000" fill-opacity="0.95"/><rect x="73" y="25" width="1" height="4" fill="#000" fill-opacity="0.8"/><rect x="76" y="25" width="2" height="4" fill="#000" fill-opacity="0.95"/><rect x="80" y="25" width="1" height="4" fill="#000" fill-opacity="0.8"/><rect x="83" y="25" width="1" height="4" fill="#000" fill-opacity="0.8"/><rect x="87" y="25" width="1" height="4" fill="#000" fill-opacity="0.8"/><rect x="91" y="25" width="2" height="4" fill="#000" fill-opacity="0.95"/><rect x="95" y="25" width="1" height="4" fill="#000" fill-opacity="0.8"/><rect x="98" y="25" width="1" height="4" fill="#000" fill-opacity="0.8"/><rect x="102" y="25" width="1" height="4" fill="#000" fill-opacity="0.8"/><rect x="106" y="25" width="1" height="4" fill="#000" fill-opacity="0.8"/><rect x="109" y="25" width="1" height="4" fill="#000" fill-opacity="0.8"/><rect x="113" y="25" width="1" height="4" fill="#000" fill-opacity="0.8"/><rect x="117" y="25" width="1" height="4" fill="#000" fill-opacity="0.8"/><rect x="120" y="25" width="1" height="4" fill="#000" fill-opacity="0.8"/><rect x="124" y="25" width="1" height="4" fill="#000" fill-opacity="0.8"/><rect x="127" y="25" width="1" height="4" fill="#000" fill-opacity="0.8"/><rect x="130" y="25" width="1" height="4" fill="#000" fill-opacity="0.8"/><rect x="133" y="25" width="1" height="4" fill="#000" fill-opacity="0.8"/><rect x="136" y="25" width="2" height="4" fill="#000" fill-opacity="0.95"/><rect x="141" y="25" width="2" height="4" fill="#000" fill-opacity="0.95"/><rect x="145" y="25" width="1" height="4" fill="#000" fill-opacity="0.8"/><rect x="148" y="25" width="1" height="4" fill="#000" fill-opacity="0.8"/><rect x="151" y="25" width="1" height="4" fill="#000" fill-opacity="0.8"/><rect x="154" y="25" width="1" height="4" fill="#000" fill-opacity="0.8"/><rect x="157" y="25" width="1" height="4" fill="#000" fill-opacity="0.8"/><rect x="161" y="25" width="1" height="4" fill="#000" fill-opacity="0.8"/><rect x="165" y="25" width="1" height="4" fill="#000" fill-opacity="0.8"/><rect x="168" y="25" width="1" height="4" fill="#000" fill-opacity="0.8"/><rect x="172" y="25" width="1" height="4" fill="#000" fill-opacity="0.8"/><rect x="175" y="25" width="1" height="4" fill="#000" fill-opacity="0.8"/><rect x="179" y="25" width="1" height="4" fill="#000" fill-opacity="0.8"/><rect x="182" y="25" width="1" height="4" fill="#000" fill-opacity="0.8"/><rect x="185" y="25" width="2" height="4" fill="#000" fill-opacity="0.95"/><rect x="189" y="25" width="1" height="4" fill="#000" fill-opacity="0.8"/><rect x="192" y="25" width="1" height="4" fill="#000" fill-opacity="0.8"/><rect x="196" y="25" width="1" height="4" fill="#000" fill-opacity="0.8"/><rect x="200" y="25" width="2" height="4" fill="#000" fill-opacity="0.95"/><rect x="205" y="25" width="1" height="4" fill="#000" fill-opacity="0.8"/><rect x="208" y="25" width="2" height="4" fill="#000" fill-opacity="0.95"/><rect x="212" y="25" width="1" height="4" fill="#000" fill-opacity="0.8"/><rect x="216" y="25" width="1" height="4" fill="#000" fill-opacity="0.8"/><rect x="219" y="25" width="1" height="4" fill="#000" fill-opacity="0.8"/><rect x="222" y="25" width="1" height="4" fill="#000" fill-opacity="0.8"/><rect x="226" y="25" width="1" height="4" fill="#000" fill-opacity="0.8"/><rect x="230" y="25" width="1" height="4" fill="#000" fill-opacity="0.8"/><rect x="233" y="25" width="1" height="4" fill="#000" fill-opacity="0.8"/><rect x="236" y="25" width="1" height="4" fill="#000" fill-opacity="0.8"/><rect x="239" y="25" width="2" height="4" fill="#000" fill-opacity="0.95"/><text x="4" y="14" font-size="10.6" fill="rgba(0,0,0,0.68)" font-weight="normal" letter-spacing="0.05" stroke="rgba(0,0,0,0.68)" stroke-width="0.2" font-family="Liberation Sans">4 OPZ BD MIDI</text></svg>
<svg style="left:81.8px;top:435px" width="496.5" height="98" viewBox="0 0 496.5 98"><rect x="0" y="0" width="496.5" height="98" fill="#1DFF3A"/><path d="M0 18 L52.0 18 C28.6 18 18.2 98 0 98 Z" fill="rgba(0,0,0,0.13)"/><rect x="0" y="17" width="496.5" height="1" fill="rgba(0,0,0,0.10)"/><rect x="13.7" y="18" width="1" height="80" fill="rgba(0,0,0,0.2)"/><rect x="42.0" y="18" width="1" height="80" fill="rgba(0,0,0,0.2)"/><rect x="70.4" y="18" width="1" height="80" fill="rgba(0,0,0,0.2)"/><rect x="98.7" y="18" width="1" height="80" fill="rgba(0,0,0,0.2)"/><rect x="127.0" y="18" width="1" height="80" fill="rgba(0,0,0,0.2)"/><rect x="155.4" y="18" width="1" height="80" fill="rgba(0,0,0,0.2)"/><rect x="183.7" y="18" width="1" height="80" fill="rgba(0,0,0,0.2)"/><rect x="212.0" y="18" width="1" height="80" fill="rgba(0,0,0,0.2)"/><rect x="240.4" y="18" width="1" height="80" fill="rgba(0,0,0,0.2)"/><rect x="268.7" y="18" width="1" height="80" fill="rgba(0,0,0,0.2)"/><rect x="297.0" y="18" width="1" height="80" fill="rgba(0,0,0,0.2)"/><rect x="325.4" y="18" width="1" height="80" fill="rgba(0,0,0,0.2)"/><rect x="353.7" y="18" width="1" height="80" fill="rgba(0,0,0,0.2)"/><rect x="382.0" y="18" width="1" height="80" fill="rgba(0,0,0,0.2)"/><rect x="410.4" y="18" width="1" height="80" fill="rgba(0,0,0,0.2)"/><rect x="438.7" y="18" width="1" height="80" fill="rgba(0,0,0,0.2)"/><rect x="467.0" y="18" width="1" height="80" fill="rgba(0,0,0,0.2)"/><rect x="495.4" y="18" width="1" height="80" fill="rgba(0,0,0,0.2)"/><path id="w36394347" d="M0 -0.5 1 -0.7 2 -0.8 3 -0.9 4 -0.9 5 -1.2 6 -1.4 7 -1.4 8 -1.5 9 -1.5 10 -1.5 11 -1.8 12 -2.1 13 -1.8 14 -2.5 15 -2.3 16 -2.4 17 -2.4 18 -3.5 19 -3.4 20 -3.8 21 -3.7 22 -3.2 23 -3.7 24 -4.1 25 -3.7 26 -5.1 27 -4.4 28 -4.2 29 -5.5 30 -4.5 31 -6.1 32 -5.4 33 -5.8 34 -5.6 35 -6 36 -5.6 37 -5.4 38 -7.3 39 -6.2 40 -7.5 41 -6.4 42 -8.4 43 -8.2 44 -7.9 45 -7.9 46 -7.5 47 -7.9 48 -6.4 49 -7.3 50 -8.1 51 -6.6 52 -8.3 53 -8.2 54 -7.1 55 -7 56 -7.2 57 -7 58 -8.5 59 -7 60 -6.2 61 -6.3 62 -7.8 63 -8.5 64 -7.3 65 -7.3 66 -7.4 67 -7.9 68 -6.6 69 -7.6 70 -7.4 71 -7.6 72 -6.6 73 -6.5 74 -6.9 75 -8.3 76 -6.9 77 -7.5 78 -6.8 79 -6.4 80 -6.3 81 -8.1 82 -8 83 -7 84 -7.7 85 -7.7 86 -8.3 87 -8.4 88 -7.1 89 -8.5 90 -8.4 91 -7.5 92 -8.2 93 -7.3 94 -7 95 -6.7 96 -8.2 97 -6.5 98 -6.3 99 -8 100 -8 101 -7.3 102 -8.1 103 -6.2 104 -6.7 105 -6.8 106 -7.1 107 -6.5 108 -6.3 109 -6.9 110 -8.3 111 -8.5 112 -7.9 113 -7.3 114 -6.7 115 -8.4 116 -7.4 117 -7.9 118 -6.2 119 -6.6 120 -8.1 121 -8 122 -8.2 123 -7.6 124 -7.1 125 -7.5 126 -8.1 127 -6.9 128 -7.4 129 -6.8 130 -7.9 131 -6.1 132 -7.8 133 -8.4 134 -6.2 135 -7.5 136 -7.7 137 -8.1 138 -7.5 139 -6.7 140 -7.1 141 -8.4 142 -8.3 143 -6.4 144 -6.3 145 -6.3 146 -6.2 147 -7.2 148 -6.5 149 -8.2 150 -7.7 151 -6.4 152 -7.4 153 -6.9 154 -7.3 155 -6.6 156 -6.5 157 -6.6 158 -7 159 -7.8 160 -7.4 161 -6.2 162 -7.8 163 -8.2 164 -8 165 -8 166 -6.1 167 -7.2 168 -6.3 169 -7.9 170 -6.5 171 -7.8 172 -6.7 173 -7.8 174 -6.9 175 -6.2 176 -7 177 -6.9 178 -8.3 179 -6.8 180 -7.3 181 -7.4 182 -8.4 183 -6.4 184 -7.6 185 -7.3 186 -7.9 187 -8.4 188 -6.9 189 -7.8 190 -7.4 191 -7.5 192 -6.3 193 -8.1 194 -8.4 195 -7 196 -6.9 197 -8.5 198 -6.4 199 -6.3 200 -6.3 201 -8.1 202 -7.9 203 -7.2 204 -7.6 205 -6.2 206 -7.7 207 -7.2 208 -7.4 209 -7 210 -7.1 211 -1.7 212 -0.5 213 -0.5 214 -0.5 215 -0.6 216 -0.6 217 -0.6 218 -0.5 219 -0.5 220 -0.5 221 -0.5 222 -0.5 223 -0.6 224 -0.5 225 -0.5 226 -0.5 227 -0.6 228 -0.6 229 -0.6 230 -0.5 231 -0.6 232 -0.5 233 -0.6 234 -0.5 235 -0.5 236 -0.5 237 -6.8 238 -7 239 -7.6 240 -8.1 241 -8.4 242 -8.5 243 -6.1 244 -6.9 245 -6.9 246 -7.1 247 -6.5 248 -7.4 249 -6.3 250 -6.8 251 -8.4 252 -7.9 253 -7.2 254 -6.4 255 -8.4 256 -7.8 257 -6.6 258 -6.9 259 -7.6 260 -7.7 261 -6.7 262 -8.4 263 -6.9 264 -6.7 265 -8.1 266 -6.5 267 -7.7 268 -6.6 269 -7.5 270 -6.8 271 -7 272 -8.4 273 -7.2 274 -7.2 275 -7.6 276 -6.8 277 -6.5 278 -7 279 -6.8 280 -6.6 281 -8.4 282 -6.2 283 -8 284 -8.3 285 -7.8 286 -6.2 287 -7.3 288 -6.2 289 -7.6 290 -7.8 291 -6.7 292 -6.1 293 -7.4 294 -6.3 295 -6.9 296 -7.2 297 -8.2 298 -7 299 -6.4 300 -8 301 -8.1 302 -7.4 303 -6.2 304 -6.6 305 -7.1 306 -7.4 307 -6.7 308 -8 309 -8.1 310 -8.3 311 -8.2 312 -6.2 313 -7.5 314 -6.3 315 -8.3 316 -7.9 317 -7.9 318 -6.6 319 -6.3 320 -8.1 321 -7.6 322 -7.6 323 -7.2 324 -8 325 -6.9 326 -6.8 327 -7 328 -6.8 329 -7.6 330 -8.2 331 -6.3 332 -6.3 333 -7.3 334 -7.7 335 -6.6 336 -6.8 337 -6.3 338 -6.2 339 -7.3 340 -7.7 341 -7.7 342 -6.5 343 -6.4 344 -8.3 345 -7.4 346 -7.1 347 -7.8 348 -7.9 349 -7.4 350 -6.3 351 -8.1 352 -6.6 353 -6.2 354 -7 355 -7.4 356 -7.6 357 -6.5 358 -7.8 359 -7.3 360 -6.5 361 -8.1 362 -8 363 -8.3 364 -7.7 365 -6.6 366 -8 367 -8.3 368 -7.4 369 -8.3 370 -8.4 371 -7 372 -8.4 373 -8.3 374 -8 375 -6.1 376 -7 377 -7.6 378 -7.6 379 -7.9 380 -7.7 381 -6.5 382 -8.3 383 -7.4 384 -8.2 385 -6.6 386 -8.5 387 -7.4 388 -8 389 -7.9 390 -8.2 391 -7 392 -6.3 393 -7.1 394 -6.5 395 -7.4 396 -8.1 397 -7 398 -6.4 399 -6.2 400 -7.1 401 -7.5 402 -6.2 403 -7.7 404 -6.6 405 -6.4 406 -8.3 407 -7.4 408 -8.3 409 -7.3 410 -6.4 411 -6.7 412 -7.1 413 -7.6 414 -8 415 -7.9 416 -7.7 417 -6.7 418 -7.1 419 -7 420 -7.3 421 -6.8 422 -7.4 423 -7.2 424 -6.2 425 -8.1 426 -7.5 427 -8 428 -7.9 429 -7.9 430 -8.5 431 -7 432 -7.1 433 -6.1 434 -7.7 435 -7.5 436 -7.5 437 -8.5 438 -6.6 439 -6.7 440 -7.9 441 -8.1 442 -7.3 443 -6.3 444 -7 445 -8.1 446 -7.3 447 -7.2 448 -7 449 -7.6 450 -7.5 451 -7.8 452 -8.2 453 -7.9 454 -7 455 -6.7 456 -8 457 -8 458 -8.3 459 -6.6 460 -8.1 461 -8.2 462 -6.3 463 -6.9 464 -7.6 465 -6.5 466 -8.1 467 -6.8 468 -7.7 469 -6.8 470 -6.6 471 -6.6 472 -7.3 473 -7.8 474 -6.6 475 -5.8 476 -3.1 477 -1 478 -0.5 479 -0.5 480 -0.5 481 -0.5 482 -0.5 483 -0.5 484 -0.5 485 -0.6 486 -0.5 487 -0.5 488 -0.6 489 -0.5 490 -0.5 491 -0.5 492 -0.6 493 -0.5 494 -0.5 495 -0.5 496 -0.5 496.5 -0.5 L496.5 0.5 496 0.5 495 0.5 494 0.5 493 0.5 492 0.6 491 0.5 490 0.5 489 0.5 488 0.6 487 0.5 486 0.5 485 0.6 484 0.5 483 0.5 482 0.5 481 0.5 480 0.5 479 0.5 478 0.5 477 1 476 3.1 475 5.8 474 6.6 473 7.8 472 7.3 471 6.6 470 6.6 469 6.8 468 7.7 467 6.8 466 8.1 465 6.5 464 7.6 463 6.9 462 6.3 461 8.2 460 8.1 459 6.6 458 8.3 457 8 456 8 455 6.7 454 7 453 7.9 452 8.2 451 7.8 450 7.5 449 7.6 448 7 447 7.2 446 7.3 445 8.1 444 7 443 6.3 442 7.3 441 8.1 440 7.9 439 6.7 438 6.6 437 8.5 436 7.5 435 7.5 434 7.7 433 6.1 432 7.1 431 7 430 8.5 429 7.9 428 7.9 427 8 426 7.5 425 8.1 424 6.2 423 7.2 422 7.4 421 6.8 420 7.3 419 7 418 7.1 417 6.7 416 7.7 415 7.9 414 8 413 7.6 412 7.1 411 6.7 410 6.4 409 7.3 408 8.3 407 7.4 406 8.3 405 6.4 404 6.6 403 7.7 402 6.2 401 7.5 400 7.1 399 6.2 398 6.4 397 7 396 8.1 395 7.4 394 6.5 393 7.1 392 6.3 391 7 390 8.2 389 7.9 388 8 387 7.4 386 8.5 385 6.6 384 8.2 383 7.4 382 8.3 381 6.5 380 7.7 379 7.9 378 7.6 377 7.6 376 7 375 6.1 374 8 373 8.3 372 8.4 371 7 370 8.4 369 8.3 368 7.4 367 8.3 366 8 365 6.6 364 7.7 363 8.3 362 8 361 8.1 360 6.5 359 7.3 358 7.8 357 6.5 356 7.6 355 7.4 354 7 353 6.2 352 6.6 351 8.1 350 6.3 349 7.4 348 7.9 347 7.8 346 7.1 345 7.4 344 8.3 343 6.4 342 6.5 341 7.7 340 7.7 339 7.3 338 6.2 337 6.3 336 6.8 335 6.6 334 7.7 333 7.3 332 6.3 331 6.3 330 8.2 329 7.6 328 6.8 327 7 326 6.8 325 6.9 324 8 323 7.2 322 7.6 321 7.6 320 8.1 319 6.3 318 6.6 317 7.9 316 7.9 315 8.3 314 6.3 313 7.5 312 6.2 311 8.2 310 8.3 309 8.1 308 8 307 6.7 306 7.4 305 7.1 304 6.6 303 6.2 302 7.4 301 8.1 300 8 299 6.4 298 7 297 8.2 296 7.2 295 6.9 294 6.3 293 7.4 292 6.1 291 6.7 290 7.8 289 7.6 288 6.2 287 7.3 286 6.2 285 7.8 284 8.3 283 8 282 6.2 281 8.4 280 6.6 279 6.8 278 7 277 6.5 276 6.8 275 7.6 274 7.2 273 7.2 272 8.4 271 7 270 6.8 269 7.5 268 6.6 267 7.7 266 6.5 265 8.1 264 6.7 263 6.9 262 8.4 261 6.7 260 7.7 259 7.6 258 6.9 257 6.6 256 7.8 255 8.4 254 6.4 253 7.2 252 7.9 251 8.4 250 6.8 249 6.3 248 7.4 247 6.5 246 7.1 245 6.9 244 6.9 243 6.1 242 8.5 241 8.4 240 8.1 239 7.6 238 7 237 6.8 236 0.5 235 0.5 234 0.5 233 0.6 232 0.5 231 0.6 230 0.5 229 0.6 228 0.6 227 0.6 226 0.5 225 0.5 224 0.5 223 0.6 222 0.5 221 0.5 220 0.5 219 0.5 218 0.5 217 0.6 216 0.6 215 0.6 214 0.5 213 0.5 212 0.5 211 1.7 210 7.1 209 7 208 7.4 207 7.2 206 7.7 205 6.2 204 7.6 203 7.2 202 7.9 201 8.1 200 6.3 199 6.3 198 6.4 197 8.5 196 6.9 195 7 194 8.4 193 8.1 192 6.3 191 7.5 190 7.4 189 7.8 188 6.9 187 8.4 186 7.9 185 7.3 184 7.6 183 6.4 182 8.4 181 7.4 180 7.3 179 6.8 178 8.3 177 6.9 176 7 175 6.2 174 6.9 173 7.8 172 6.7 171 7.8 170 6.5 169 7.9 168 6.3 167 7.2 166 6.1 165 8 164 8 163 8.2 162 7.8 161 6.2 160 7.4 159 7.8 158 7 157 6.6 156 6.5 155 6.6 154 7.3 153 6.9 152 7.4 151 6.4 150 7.7 149 8.2 148 6.5 147 7.2 146 6.2 145 6.3 144 6.3 143 6.4 142 8.3 141 8.4 140 7.1 139 6.7 138 7.5 137 8.1 136 7.7 135 7.5 134 6.2 133 8.4 132 7.8 131 6.1 130 7.9 129 6.8 128 7.4 127 6.9 126 8.1 125 7.5 124 7.1 123 7.6 122 8.2 121 8 120 8.1 119 6.6 118 6.2 117 7.9 116 7.4 115 8.4 114 6.7 113 7.3 112 7.9 111 8.5 110 8.3 109 6.9 108 6.3 107 6.5 106 7.1 105 6.8 104 6.7 103 6.2 102 8.1 101 7.3 100 8 99 8 98 6.3 97 6.5 96 8.2 95 6.7 94 7 93 7.3 92 8.2 91 7.5 90 8.4 89 8.5 88 7.1 87 8.4 86 8.3 85 7.7 84 7.7 83 7 82 8 81 8.1 80 6.3 79 6.4 78 6.8 77 7.5 76 6.9 75 8.3 74 6.9 73 6.5 72 6.6 71 7.6 70 7.4 69 7.6 68 6.6 67 7.9 66 7.4 65 7.3 64 7.3 63 8.5 62 7.8 61 6.3 60 6.2 59 7 58 8.5 57 7 56 7.2 55 7 54 7.1 53 8.2 52 8.3 51 6.6 50 8.1 49 7.3 48 6.4 47 7.9 46 7.5 45 7.9 44 7.9 43 8.2 42 8.4 41 6.4 40 7.5 39 6.2 38 7.3 37 5.4 36 5.6 35 6 34 5.6 33 5.8 32 5.4 31 6.1 30 4.5 29 5.5 28 4.2 27 4.4 26 5.1 25 3.7 24 4.1 23 3.7 22 3.2 21 3.7 20 3.8 19 3.4 18 3.5 17 2.4 16 2.4 15 2.3 14 2.5 13 1.8 12 2.1 11 1.8 10 1.5 9 1.5 8 1.5 7 1.4 6 1.4 5 1.2 4 0.9 3 0.9 2 0.8 1 0.7 0 0.5Z" fill="#042108" transform="translate(0 38.0)"/><use href="#w36394347" transform="translate(0 40.0)"/><rect x="0" y="37.5" width="496.5" height="1" fill="#042108"/><rect x="0" y="77.5" width="496.5" height="1" fill="#042108"/><text x="4" y="14" font-size="10.6" fill="rgba(0,0,0,0.68)" font-weight="normal" letter-spacing="0.05" stroke="rgba(0,0,0,0.68)" stroke-width="0.2" font-family="Liberation Sans">3 OPZ BD</text></svg>
<svg style="left:591.2px;top:435px" width="242.3" height="98" viewBox="0 0 242.3 98"><rect x="0" y="0" width="242.3" height="98" fill="#1DFF3A"/><path d="M242.3 18 L169.3 18 C209.4 18 220.4 98 242.3 98 Z" fill="rgba(0,0,0,0.13)"/><rect x="0" y="17" width="242.3" height="1" fill="rgba(0,0,0,0.10)"/><rect x="14.3" y="18" width="1" height="80" fill="rgba(0,0,0,0.2)"/><rect x="42.6" y="18" width="1" height="80" fill="rgba(0,0,0,0.2)"/><rect x="71.0" y="18" width="1" height="80" fill="rgba(0,0,0,0.2)"/><rect x="99.3" y="18" width="1" height="80" fill="rgba(0,0,0,0.2)"/><rect x="127.6" y="18" width="1" height="80" fill="rgba(0,0,0,0.2)"/><rect x="156.0" y="18" width="1" height="80" fill="rgba(0,0,0,0.2)"/><rect x="184.3" y="18" width="1" height="80" fill="rgba(0,0,0,0.2)"/><rect x="212.6" y="18" width="1" height="80" fill="rgba(0,0,0,0.2)"/><rect x="241.0" y="18" width="1" height="80" fill="rgba(0,0,0,0.2)"/><path id="w60739007" d="M0 -8.4 1 -6.5 2 -6.2 3 -8.5 4 -6.6 5 -6.4 6 -7.7 7 -6.9 8 -8.2 9 -6.7 10 -8.4 11 -6.9 12 -7.6 13 -8.3 14 -7.8 15 -8.3 16 -7.8 17 -6.2 18 -8.2 19 -7.5 20 -6.9 21 -6.6 22 -8.1 23 -7.5 24 -8.4 25 -8 26 -8.4 27 -7.5 28 -7.8 29 -7.6 30 -6.7 31 -8.4 32 -6.9 33 -8 34 -8.4 35 -7.7 36 -6.5 37 -8.1 38 -7.7 39 -6.6 40 -6.2 41 -7.4 42 -6.2 43 -8.3 44 -7.3 45 -7.4 46 -7.1 47 -7.7 48 -8.3 49 -6.9 50 -7 51 -7.5 52 -6.8 53 -7.5 54 -7.4 55 -7.2 56 -7.7 57 -7.4 58 -6.3 59 -8.5 60 -7 61 -7.1 62 -7.1 63 -8.3 64 -8.4 65 -7.3 66 -7.1 67 -6.3 68 -8.3 69 -6.5 70 -7.4 71 -7 72 -6.9 73 -7 74 -6.6 75 -6.2 76 -7.4 77 -8 78 -7.7 79 -6.6 80 -7.8 81 -6.2 82 -7.1 83 -8.1 84 -8.3 85 -7.2 86 -8.1 87 -7.3 88 -7.4 89 -7.5 90 -8.5 91 -7.9 92 -7.2 93 -7.9 94 -7.7 95 -7 96 -8 97 -8.1 98 -7.6 99 -8.4 100 -6.2 101 -7.3 102 -7.6 103 -6.9 104 -6.5 105 -7.8 106 -7.2 107 -6.8 108 -6.2 109 -8.4 110 -7 111 -6.4 112 -6.6 113 -6.7 114 -8.2 115 -6.5 116 -6.8 117 -6.4 118 -7.2 119 -6.6 120 -6.9 121 -7.9 122 -8.3 123 -8.1 124 -6.2 125 -7 126 -8.1 127 -6.2 128 -6.6 129 -7.3 130 -7 131 -7.9 132 -7.8 133 -7.2 134 -6.7 135 -6.7 136 -6.8 137 -6.3 138 -7.7 139 -6.5 140 -8.2 141 -7.7 142 -6.3 143 -7.3 144 -7.6 145 -6.2 146 -7.3 147 -6.2 148 -7.9 149 -6.1 150 -7.6 151 -8.5 152 -8.1 153 -6.7 154 -7.4 155 -6.5 156 -6.9 157 -8.2 158 -8.1 159 -6.1 160 -7 161 -7.6 162 -6.5 163 -8 164 -8.2 165 -7.4 166 -7 167 -8.1 168 -7.3 169 -6.6 170 -6.8 171 -6.5 172 -8.1 173 -7.3 174 -7.8 175 -8.1 176 -8.4 177 -6.6 178 -7.1 179 -8.2 180 -7.9 181 -7 182 -7.7 183 -6.6 184 -6.5 185 -6.2 186 -7 187 -6.7 188 -7.4 189 -8.4 190 -6.3 191 -7.1 192 -7.6 193 -6.9 194 -6.6 195 -6.9 196 -5.2 197 -6.9 198 -6.2 199 -6.3 200 -6.2 201 -4.7 202 -4.5 203 -4.6 204 -5 205 -5.5 206 -5.3 207 -4.4 208 -4.5 209 -4.5 210 -3.8 211 -4.5 212 -4.3 213 -3.8 214 -3.9 215 -3.6 216 -3.3 217 -2.8 218 -2.6 219 -2.4 220 -2.1 221 -2.7 222 -2 223 -1.7 224 -1.8 225 -1.5 226 -1.5 227 -1.3 228 -1.1 229 -1.1 230 -0.9 231 -0.8 232 -0.7 233 -0.5 234 -0.5 235 -0.6 236 -0.6 237 -0.5 238 -0.5 239 -0.6 240 -0.5 241 -0.5 242 -0.5 242.3 -0.5 L242.3 0.5 242 0.5 241 0.5 240 0.5 239 0.6 238 0.5 237 0.5 236 0.6 235 0.6 234 0.5 233 0.5 232 0.7 231 0.8 230 0.9 229 1.1 228 1.1 227 1.3 226 1.5 225 1.5 224 1.8 223 1.7 222 2 221 2.7 220 2.1 219 2.4 218 2.6 217 2.8 216 3.3 215 3.6 214 3.9 213 3.8 212 4.3 211 4.5 210 3.8 209 4.5 208 4.5 207 4.4 206 5.3 205 5.5 204 5 203 4.6 202 4.5 201 4.7 200 6.2 199 6.3 198 6.2 197 6.9 196 5.2 195 6.9 194 6.6 193 6.9 192 7.6 191 7.1 190 6.3 189 8.4 188 7.4 187 6.7 186 7 185 6.2 184 6.5 183 6.6 182 7.7 181 7 180 7.9 179 8.2 178 7.1 177 6.6 176 8.4 175 8.1 174 7.8 173 7.3 172 8.1 171 6.5 170 6.8 169 6.6 168 7.3 167 8.1 166 7 165 7.4 164 8.2 163 8 162 6.5 161 7.6 160 7 159 6.1 158 8.1 157 8.2 156 6.9 155 6.5 154 7.4 153 6.7 152 8.1 151 8.5 150 7.6 149 6.1 148 7.9 147 6.2 146 7.3 145 6.2 144 7.6 143 7.3 142 6.3 141 7.7 140 8.2 139 6.5 138 7.7 137 6.3 136 6.8 135 6.7 134 6.7 133 7.2 132 7.8 131 7.9 130 7 129 7.3 128 6.6 127 6.2 126 8.1 125 7 124 6.2 123 8.1 122 8.3 121 7.9 120 6.9 119 6.6 118 7.2 117 6.4 116 6.8 115 6.5 114 8.2 113 6.7 112 6.6 111 6.4 110 7 109 8.4 108 6.2 107 6.8 106 7.2 105 7.8 104 6.5 103 6.9 102 7.6 101 7.3 100 6.2 99 8.4 98 7.6 97 8.1 96 8 95 7 94 7.7 93 7.9 92 7.2 91 7.9 90 8.5 89 7.5 88 7.4 87 7.3 86 8.1 85 7.2 84 8.3 83 8.1 82 7.1 81 6.2 80 7.8 79 6.6 78 7.7 77 8 76 7.4 75 6.2 74 6.6 73 7 72 6.9 71 7 70 7.4 69 6.5 68 8.3 67 6.3 66 7.1 65 7.3 64 8.4 63 8.3 62 7.1 61 7.1 60 7 59 8.5 58 6.3 57 7.4 56 7.7 55 7.2 54 7.4 53 7.5 52 6.8 51 7.5 50 7 49 6.9 48 8.3 47 7.7 46 7.1 45 7.4 44 7.3 43 8.3 42 6.2 41 7.4 40 6.2 39 6.6 38 7.7 37 8.1 36 6.5 35 7.7 34 8.4 33 8 32 6.9 31 8.4 30 6.7 29 7.6 28 7.8 27 7.5 26 8.4 25 8 24 8.4 23 7.5 22 8.1 21 6.6 20 6.9 19 7.5 18 8.2 17 6.2 16 7.8 15 8.3 14 7.8 13 8.3 12 7.6 11 6.9 10 8.4 9 6.7 8 8.2 7 6.9 6 7.7 5 6.4 4 6.6 3 8.5 2 6.2 1 6.5 0 8.4Z" fill="#042108" transform="translate(0 38.0)"/><use href="#w60739007" transform="translate(0 40.0)"/><rect x="0" y="37.5" width="242.3" height="1" fill="#042108"/><rect x="0" y="77.5" width="242.3" height="1" fill="#042108"/><text x="4" y="14" font-size="10.6" fill="rgba(0,0,0,0.68)" font-weight="normal" letter-spacing="0.05" stroke="rgba(0,0,0,0.68)" stroke-width="0.2" font-family="Liberation Sans">3 OPZ BD</text></svg>
<svg style="left:81.8px;top:535px" width="218.8" height="97" viewBox="0 0 218.8 97"><rect x="0" y="0" width="218.8" height="97" fill="#1DFF3A"/><path d="M0 18 L73.0 18 C40.2 18 25.5 97 0 97 Z" fill="rgba(0,0,0,0.13)"/><rect x="0" y="17" width="218.8" height="1" fill="rgba(0,0,0,0.10)"/><rect x="13.7" y="18" width="1" height="79" fill="rgba(0,0,0,0.2)"/><rect x="42.0" y="18" width="1" height="79" fill="rgba(0,0,0,0.2)"/><rect x="70.4" y="18" width="1" height="79" fill="rgba(0,0,0,0.2)"/><rect x="98.7" y="18" width="1" height="79" fill="rgba(0,0,0,0.2)"/><rect x="127.0" y="18" width="1" height="79" fill="rgba(0,0,0,0.2)"/><rect x="155.4" y="18" width="1" height="79" fill="rgba(0,0,0,0.2)"/><rect x="183.7" y="18" width="1" height="79" fill="rgba(0,0,0,0.2)"/><rect x="212.0" y="18" width="1" height="79" fill="rgba(0,0,0,0.2)"/><path id="w72777011" d="M0 -0.5 1 -0.5 2 -0.5 3 -0.6 4 -0.6 5 -0.7 6 -0.6 7 -0.7 8 -0.6 9 -0.7 10 -0.7 11 -0.6 12 -0.8 13 -1.8 14 -2.7 15 -2.2 16 -0.7 17 -0.7 18 -1 19 -0.8 20 -0.8 21 -0.9 22 -0.9 23 -3 24 -3.6 25 -2.3 26 -1 27 -1 28 -1.1 29 -1.1 30 -1 31 -0.9 32 -2.6 33 -6.8 34 -7 35 -3.5 36 -1.2 37 -1.2 38 -1 39 -1.3 40 -1.3 41 -1.1 42 -3.4 43 -6.5 44 -6.4 45 -2.3 46 -1.2 47 -1.2 48 -1.3 49 -1.4 50 -1.5 51 -1.5 52 -6.9 53 -10.3 54 -8.5 55 -2 56 -1.3 57 -1.3 58 -1.4 59 -1.1 60 -1.2 61 -2 62 -8.3 63 -10 64 -6.8 65 -1.2 66 -1.5 67 -1.4 68 -1.5 69 -1.2 70 -1.3 71 -3 72 -8.5 73 -8.8 74 -4.7 75 -1.1 76 -1.1 77 -1.5 78 -1.1 79 -1.2 80 -1.2 81 -4.1 82 -8.5 83 -8.5 84 -3.3 85 -1.4 86 -1.2 87 -1.2 88 -1.3 89 -1.3 90 -1.1 91 -6.1 92 -9.7 93 -8.4 94 -2.4 95 -1.5 96 -1.4 97 -1.2 98 -1.4 99 -1.5 100 -1.2 101 -6.3 102 -8.1 103 -5.9 104 -1.2 105 -1.1 106 -1.1 107 -1.4 108 -1.1 109 -1.3 110 -2.3 111 -7.1 112 -7.8 113 -4.5 114 -1.2 115 -1.3 116 -1.4 117 -1.3 118 -1.4 119 -1.2 120 -4.1 121 -9.4 122 -9.4 123 -4.1 124 -1.3 125 -1.1 126 -1.1 127 -1.4 128 -1.4 129 -1.5 130 -4.6 131 -7.9 132 -7.3 133 -2.3 134 -1.1 135 -1.3 136 -1.1 137 -1.2 138 -1.2 139 -1.3 140 -7.7 141 -10.6 142 -8.2 143 -1.6 144 -1.4 145 -1.4 146 -1.1 147 -1.3 148 -1.5 149 -1.9 150 -6.7 151 -7.7 152 -4.9 153 -1.2 154 -1.4 155 -1.2 156 -1.2 157 -1.2 158 -1.2 159 -3.4 160 -8.8 161 -8.8 162 -4.3 163 -1.2 164 -1.3 165 -1.3 166 -1.3 167 -1.5 168 -1.2 169 -5.2 170 -9.8 171 -9.5 172 -3.4 173 -1.3 174 -1.1 175 -1.1 176 -1.2 177 -1.4 178 -1.2 179 -7.3 180 -10.9 181 -9 182 -2.2 183 -1.2 184 -1.3 185 -1.4 186 -1.3 187 -1.2 188 -1.8 189 -7.7 190 -9.4 191 -6.4 192 -1.3 193 -1.5 194 -1.4 195 -1.3 196 -1.4 197 -1.2 198 -2.9 199 -8.4 200 -8.7 201 -4.7 202 -1.3 203 -1.4 204 -1.2 205 -1.4 206 -1.1 207 -1.5 208 -4.3 209 -8.8 210 -8.9 211 -3.5 212 -1 213 -1 214 -1 215 -1.2 216 -0.8 217 -0.8 218 -5.4 218.8 -8.7 L218.8 8.7 218 5.4 217 0.8 216 0.8 215 1.2 214 1 213 1 212 1 211 3.5 210 8.9 209 8.8 208 4.3 207 1.5 206 1.1 205 1.4 204 1.2 203 1.4 202 1.3 201 4.7 200 8.7 199 8.4 198 2.9 197 1.2 196 1.4 195 1.3 194 1.4 193 1.5 192 1.3 191 6.4 190 9.4 189 7.7 188 1.8 187 1.2 186 1.3 185 1.4 184 1.3 183 1.2 182 2.2 181 9 180 10.9 179 7.3 178 1.2 177 1.4 176 1.2 175 1.1 174 1.1 173 1.3 172 3.4 171 9.5 170 9.8 169 5.2 168 1.2 167 1.5 166 1.3 165 1.3 164 1.3 163 1.2 162 4.3 161 8.8 160 8.8 159 3.4 158 1.2 157 1.2 156 1.2 155 1.2 154 1.4 153 1.2 152 4.9 151 7.7 150 6.7 149 1.9 148 1.5 147 1.3 146 1.1 145 1.4 144 1.4 143 1.6 142 8.2 141 10.6 140 7.7 139 1.3 138 1.2 137 1.2 136 1.1 135 1.3 134 1.1 133 2.3 132 7.3 131 7.9 130 4.6 129 1.5 128 1.4 127 1.4 126 1.1 125 1.1 124 1.3 123 4.1 122 9.4 121 9.4 120 4.1 119 1.2 118 1.4 117 1.3 116 1.4 115 1.3 114 1.2 113 4.5 112 7.8 111 7.1 110 2.3 109 1.3 108 1.1 107 1.4 106 1.1 105 1.1 104 1.2 103 5.9 102 8.1 101 6.3 100 1.2 99 1.5 98 1.4 97 1.2 96 1.4 95 1.5 94 2.4 93 8.4 92 9.7 91 6.1 90 1.1 89 1.3 88 1.3 87 1.2 86 1.2 85 1.4 84 3.3 83 8.5 82 8.5 81 4.1 80 1.2 79 1.2 78 1.1 77 1.5 76 1.1 75 1.1 74 4.7 73 8.8 72 8.5 71 3 70 1.3 69 1.2 68 1.5 67 1.4 66 1.5 65 1.2 64 6.8 63 10 62 8.3 61 2 60 1.2 59 1.1 58 1.4 57 1.3 56 1.3 55 2 54 8.5 53 10.3 52 6.9 51 1.5 50 1.5 49 1.4 48 1.3 47 1.2 46 1.2 45 2.3 44 6.4 43 6.5 42 3.4 41 1.1 40 1.3 39 1.3 38 1 37 1.2 36 1.2 35 3.5 34 7 33 6.8 32 2.6 31 0.9 30 1 29 1.1 28 1.1 27 1 26 1 25 2.3 24 3.6 23 3 22 0.9 21 0.9 20 0.8 19 0.8 18 1 17 0.7 16 0.7 15 2.2 14 2.7 13 1.8 12 0.8 11 0.6 10 0.7 9 0.7 8 0.6 7 0.7 6 0.6 5 0.7 4 0.6 3 0.6 2 0.5 1 0.5 0 0.5Z" fill="#042108" transform="translate(0 37.8)"/><use href="#w72777011" transform="translate(0 39.5)"/><rect x="0" y="37.2" width="218.8" height="1" fill="#042108"/><rect x="0" y="76.8" width="218.8" height="1" fill="#042108"/><text x="4" y="14" font-size="10.6" fill="rgba(0,0,0,0.68)" font-weight="normal" letter-spacing="0.05" stroke="rgba(0,0,0,0.68)" stroke-width="0.2" font-family="Liberation Sans">3 OPZ SD 2</text></svg>
<svg style="left:319.0px;top:535px" width="253.5" height="97" viewBox="0 0 253.5 97"><rect x="0" y="0" width="253.5" height="97" fill="#1DFF3A"/><path d="M0 18 L8.0 18 C4.4 18 2.8 97 0 97 Z" fill="rgba(0,0,0,0.13)"/><rect x="0" y="17" width="253.5" height="1" fill="rgba(0,0,0,0.10)"/><rect x="3.2" y="18" width="1" height="79" fill="rgba(0,0,0,0.2)"/><rect x="31.5" y="18" width="1" height="79" fill="rgba(0,0,0,0.2)"/><rect x="59.8" y="18" width="1" height="79" fill="rgba(0,0,0,0.2)"/><rect x="88.2" y="18" width="1" height="79" fill="rgba(0,0,0,0.2)"/><rect x="116.5" y="18" width="1" height="79" fill="rgba(0,0,0,0.2)"/><rect x="144.8" y="18" width="1" height="79" fill="rgba(0,0,0,0.2)"/><rect x="173.2" y="18" width="1" height="79" fill="rgba(0,0,0,0.2)"/><rect x="201.5" y="18" width="1" height="79" fill="rgba(0,0,0,0.2)"/><rect x="229.8" y="18" width="1" height="79" fill="rgba(0,0,0,0.2)"/><path id="w29373253" d="M0 -1.4 1 -8.6 2 -11.5 3 -8.6 4 -1.4 5 -1.4 6 -1.1 7 -1.3 8 -1.4 9 -1.3 10 -5.3 11 -11.3 12 -11.3 13 -4.6 14 -1.4 15 -1.1 16 -1.1 17 -1.4 18 -1.4 19 -1.6 20 -6.7 21 -8.3 22 -5.7 23 -1.1 24 -1.5 25 -1.1 26 -1.1 27 -1.1 28 -1.1 29 -4.8 30 -9.1 31 -8.8 32 -3.1 33 -1.5 34 -1.2 35 -1.4 36 -1.4 37 -1.3 38 -2.6 39 -9 40 -10.3 41 -6.4 42 -1.2 43 -1.2 44 -1.2 45 -1.5 46 -1.3 47 -1.1 48 -4.8 49 -8.1 50 -7.3 51 -2.3 52 -1.1 53 -1.1 54 -1.4 55 -1.1 56 -1.2 57 -3.3 58 -9.9 59 -10.6 60 -6 61 -1.5 62 -1.4 63 -1.5 64 -1.3 65 -1.5 66 -1.4 67 -7 68 -10.7 69 -9 70 -2.3 71 -1.2 72 -1.4 73 -1.2 74 -1.4 75 -1.3 76 -3.7 77 -9.9 78 -9.9 79 -5 80 -1.2 81 -1.1 82 -1.1 83 -1.5 84 -1.3 85 -1.5 86 -7.4 87 -10.3 88 -8.1 89 -1.6 90 -1.3 91 -1.1 92 -1.2 93 -1.1 94 -1.2 95 -4.5 96 -10.3 97 -10.3 98 -4.5 99 -1.4 100 -1.3 101 -1.3 102 -1.5 103 -1.2 104 -1.4 105 -6.4 106 -8.1 107 -5.9 108 -1.1 109 -1.5 110 -1.4 111 -1.4 112 -1.4 113 -1.2 114 -4.3 115 -8.7 116 -8.7 117 -3.3 118 -1.2 119 -1.3 120 -1.3 121 -1.5 122 -1.1 123 -1.7 124 -6.7 125 -7.9 126 -5.2 127 -1.1 128 -1.5 129 -1.3 130 -1.5 131 -1.4 132 -1.4 133 -5.3 134 -9.4 135 -8.8 136 -2.9 137 -1.1 138 -1.2 139 -1.5 140 -1.5 141 -1.2 142 -2.7 143 -8.8 144 -9.7 145 -5.8 146 -1.5 147 -1.3 148 -1.2 149 -1.1 150 -1.3 151 -1.4 152 -5.1 153 -8.2 154 -7.1 155 -2 156 -1.2 157 -1.3 158 -1.3 159 -1.3 160 -1.1 161 -4.1 162 -11.6 163 -12 164 -6.4 165 -1.2 166 -1.2 167 -1.4 168 -1.2 169 -1.5 170 -1.4 171 -6.3 172 -9.1 173 -7.4 174 -1.7 175 -1.3 176 -1.1 177 -1.3 178 -1.4 179 -1.3 180 -3.2 181 -7.9 182 -7.9 183 -3.7 184 -1.4 185 -1.1 186 -1.3 187 -1.1 188 -1.4 189 -1.3 190 -7.3 191 -9.8 192 -7.3 193 -1.3 194 -1.3 195 -1.1 196 -1.5 197 -1.2 198 -1.3 199 -3.8 200 -8.2 201 -8.2 202 -3.3 203 -1.3 204 -1.2 205 -1.4 206 -1.4 207 -1.4 208 -1.7 209 -7.3 210 -8.9 211 -6.1 212 -1.3 213 -1.4 214 -1.4 215 -1.3 216 -1.3 217 -1.4 218 -5.8 219 -11 220 -10.6 221 -3.8 222 -1.1 223 -1.3 224 -1.4 225 -1.2 226 -1.4 227 -2.4 228 -8.5 229 -9.7 230 -6 231 -1.1 232 -1.3 233 -1.2 234 -1.3 235 -1.4 236 -1.2 237 -6.1 238 -10.4 239 -9.4 240 -2.9 241 -1.4 242 -1.2 243 -1.4 244 -1.1 245 -1.1 246 -3.1 247 -9.2 248 -9.8 249 -5.5 250 -1.3 251 -1.3 252 -1.5 253 -1.2 253.5 -1.2 L253.5 1.2 253 1.2 252 1.5 251 1.3 250 1.3 249 5.5 248 9.8 247 9.2 246 3.1 245 1.1 244 1.1 243 1.4 242 1.2 241 1.4 240 2.9 239 9.4 238 10.4 237 6.1 236 1.2 235 1.4 234 1.3 233 1.2 232 1.3 231 1.1 230 6 229 9.7 228 8.5 227 2.4 226 1.4 225 1.2 224 1.4 223 1.3 222 1.1 221 3.8 220 10.6 219 11 218 5.8 217 1.4 216 1.3 215 1.3 214 1.4 213 1.4 212 1.3 211 6.1 210 8.9 209 7.3 208 1.7 207 1.4 206 1.4 205 1.4 204 1.2 203 1.3 202 3.3 201 8.2 200 8.2 199 3.8 198 1.3 197 1.2 196 1.5 195 1.1 194 1.3 193 1.3 192 7.3 191 9.8 190 7.3 189 1.3 188 1.4 187 1.1 186 1.3 185 1.1 184 1.4 183 3.7 182 7.9 181 7.9 180 3.2 179 1.3 178 1.4 177 1.3 176 1.1 175 1.3 174 1.7 173 7.4 172 9.1 171 6.3 170 1.4 169 1.5 168 1.2 167 1.4 166 1.2 165 1.2 164 6.4 163 12 162 11.6 161 4.1 160 1.1 159 1.3 158 1.3 157 1.3 156 1.2 155 2 154 7.1 153 8.2 152 5.1 151 1.4 150 1.3 149 1.1 148 1.2 147 1.3 146 1.5 145 5.8 144 9.7 143 8.8 142 2.7 141 1.2 140 1.5 139 1.5 138 1.2 137 1.1 136 2.9 135 8.8 134 9.4 133 5.3 132 1.4 131 1.4 130 1.5 129 1.3 128 1.5 127 1.1 126 5.2 125 7.9 124 6.7 123 1.7 122 1.1 121 1.5 120 1.3 119 1.3 118 1.2 117 3.3 116 8.7 115 8.7 114 4.3 113 1.2 112 1.4 111 1.4 110 1.4 109 1.5 108 1.1 107 5.9 106 8.1 105 6.4 104 1.4 103 1.2 102 1.5 101 1.3 100 1.3 99 1.4 98 4.5 97 10.3 96 10.3 95 4.5 94 1.2 93 1.1 92 1.2 91 1.1 90 1.3 89 1.6 88 8.1 87 10.3 86 7.4 85 1.5 84 1.3 83 1.5 82 1.1 81 1.1 80 1.2 79 5 78 9.9 77 9.9 76 3.7 75 1.3 74 1.4 73 1.2 72 1.4 71 1.2 70 2.3 69 9 68 10.7 67 7 66 1.4 65 1.5 64 1.3 63 1.5 62 1.4 61 1.5 60 6 59 10.6 58 9.9 57 3.3 56 1.2 55 1.1 54 1.4 53 1.1 52 1.1 51 2.3 50 7.3 49 8.1 48 4.8 47 1.1 46 1.3 45 1.5 44 1.2 43 1.2 42 1.2 41 6.4 40 10.3 39 9 38 2.6 37 1.3 36 1.4 35 1.4 34 1.2 33 1.5 32 3.1 31 8.8 30 9.1 29 4.8 28 1.1 27 1.1 26 1.1 25 1.1 24 1.5 23 1.1 22 5.7 21 8.3 20 6.7 19 1.6 18 1.4 17 1.4 16 1.1 15 1.1 14 1.4 13 4.6 12 11.3 11 11.3 10 5.3 9 1.3 8 1.4 7 1.3 6 1.1 5 1.4 4 1.4 3 8.6 2 11.5 1 8.6 0 1.4Z" fill="#042108" transform="translate(0 37.8)"/><use href="#w29373253" transform="translate(0 39.5)"/><rect x="0" y="37.2" width="253.5" height="1" fill="#042108"/><rect x="0" y="76.8" width="253.5" height="1" fill="#042108"/><text x="4" y="14" font-size="10.6" fill="rgba(0,0,0,0.68)" font-weight="normal" letter-spacing="0.05" stroke="rgba(0,0,0,0.68)" stroke-width="0.2" font-family="Liberation Sans">3 OPZ SD 2</text></svg>
<svg style="left:591.2px;top:535px" width="242.3" height="97" viewBox="0 0 242.3 97"><rect x="0" y="0" width="242.3" height="97" fill="#1DFF3A"/><path d="M242.3 18 L169.3 18 C209.4 18 220.4 97 242.3 97 Z" fill="rgba(0,0,0,0.13)"/><rect x="0" y="17" width="242.3" height="1" fill="rgba(0,0,0,0.10)"/><rect x="14.3" y="18" width="1" height="79" fill="rgba(0,0,0,0.2)"/><rect x="42.6" y="18" width="1" height="79" fill="rgba(0,0,0,0.2)"/><rect x="71.0" y="18" width="1" height="79" fill="rgba(0,0,0,0.2)"/><rect x="99.3" y="18" width="1" height="79" fill="rgba(0,0,0,0.2)"/><rect x="127.6" y="18" width="1" height="79" fill="rgba(0,0,0,0.2)"/><rect x="156.0" y="18" width="1" height="79" fill="rgba(0,0,0,0.2)"/><rect x="184.3" y="18" width="1" height="79" fill="rgba(0,0,0,0.2)"/><rect x="212.6" y="18" width="1" height="79" fill="rgba(0,0,0,0.2)"/><rect x="241.0" y="18" width="1" height="79" fill="rgba(0,0,0,0.2)"/><path id="w95215574" d="M0 -10.4 1 -11.9 2 -7.4 3 -1.2 4 -1.4 5 -1.5 6 -1.5 7 -1.2 8 -1.4 9 -4.9 10 -9.9 11 -9.9 12 -3.7 13 -1.3 14 -1.5 15 -1.3 16 -1.2 17 -1.2 18 -1.3 19 -7.6 20 -10.1 21 -7.6 22 -1.3 23 -1.4 24 -1.5 25 -1.3 26 -1.4 27 -1.1 28 -4.3 29 -11.6 30 -11.6 31 -5.8 32 -1.5 33 -1.4 34 -1.1 35 -1.2 36 -1.2 37 -1.2 38 -5.7 39 -9.1 40 -7.9 41 -2.3 42 -1.2 43 -1.1 44 -1.1 45 -1.4 46 -1.4 47 -2.5 48 -8.9 49 -10.2 50 -6.3 51 -1.2 52 -1.1 53 -1.2 54 -1.2 55 -1.2 56 -1.4 57 -4.3 58 -8.7 59 -8.7 60 -3.2 61 -1.4 62 -1.2 63 -1.1 64 -1.3 65 -1.2 66 -1.4 67 -6.8 68 -9.1 69 -6.8 70 -1.3 71 -1.3 72 -1.2 73 -1.5 74 -1.4 75 -1.1 76 -2.9 77 -7.9 78 -7.9 79 -3.9 80 -1.3 81 -1.4 82 -1.3 83 -1.3 84 -1.3 85 -1.2 86 -6.2 87 -9.9 88 -8.6 89 -2.5 90 -1.2 91 -1.4 92 -1.2 93 -1.1 94 -1.2 95 -2.5 96 -8.7 97 -9.9 98 -6.2 99 -1.4 100 -1.5 101 -1.4 102 -1.3 103 -1.4 104 -1.5 105 -5.6 106 -11.2 107 -11.2 108 -4.2 109 -1.4 110 -1.3 111 -1.4 112 -1.2 113 -1.1 114 -1.3 115 -7.8 116 -10.4 117 -7.8 118 -1.3 119 -1.5 120 -1.1 121 -1.5 122 -1.4 123 -1.3 124 -4.3 125 -11.4 126 -11.4 127 -5.7 128 -1.3 129 -1.5 130 -1.4 131 -1.1 132 -1.1 133 -1.1 134 -5.1 135 -8.2 136 -7.2 137 -2 138 -1.2 139 -1.4 140 -1.4 141 -1.4 142 -1.5 143 -2 144 -7.1 145 -8.1 146 -5.1 147 -1.4 148 -1.3 149 -1.2 150 -1.1 151 -1.2 152 -1.2 153 -5.9 154 -11.7 155 -11.7 156 -4.4 157 -1.2 158 -1.1 159 -1.1 160 -1.3 161 -1.1 162 -1.4 163 -8.3 164 -11.1 165 -8.3 166 -1.4 167 -1.1 168 -1.1 169 -1.2 170 -1.2 171 -1.2 172 -4.4 173 -11.9 174 -11.9 175 -5.9 176 -1.2 177 -1.2 178 -1.4 179 -1.2 180 -1.1 181 -1.1 182 -5.4 183 -8.4 184 -7.2 185 -2 186 -1.4 187 -1.5 188 -1.2 189 -1.4 190 -1.1 191 -1.6 192 -5.5 193 -6.1 194 -3.7 195 -1.1 196 -1.3 197 -1 198 -1.1 199 -1 200 -1 201 -2.6 202 -5.1 203 -4.9 204 -1.7 205 -1 206 -1.1 207 -1 208 -0.8 209 -0.9 210 -1 211 -2.3 212 -2.8 213 -2 214 -0.7 215 -0.8 216 -0.7 217 -0.7 218 -0.6 219 -0.6 220 -0.7 221 -1.5 222 -1.3 223 -0.7 224 -0.7 225 -0.6 226 -0.6 227 -0.7 228 -0.8 229 -0.8 230 -0.7 231 -0.9 232 -0.8 233 -0.8 234 -0.8 235 -0.7 236 -0.7 237 -0.7 238 -0.8 239 -0.8 240 -0.7 241 -0.8 242 -0.6 242.3 -0.6 L242.3 0.6 242 0.6 241 0.8 240 0.7 239 0.8 238 0.8 237 0.7 236 0.7 235 0.7 234 0.8 233 0.8 232 0.8 231 0.9 230 0.7 229 0.8 228 0.8 227 0.7 226 0.6 225 0.6 224 0.7 223 0.7 222 1.3 221 1.5 220 0.7 219 0.6 218 0.6 217 0.7 216 0.7 215 0.8 214 0.7 213 2 212 2.8 211 2.3 210 1 209 0.9 208 0.8 207 1 206 1.1 205 1 204 1.7 203 4.9 202 5.1 201 2.6 200 1 199 1 198 1.1 197 1 196 1.3 195 1.1 194 3.7 193 6.1 192 5.5 191 1.6 190 1.1 189 1.4 188 1.2 187 1.5 186 1.4 185 2 184 7.2 183 8.4 182 5.4 181 1.1 180 1.1 179 1.2 178 1.4 177 1.2 176 1.2 175 5.9 174 11.9 173 11.9 172 4.4 171 1.2 170 1.2 169 1.2 168 1.1 167 1.1 166 1.4 165 8.3 164 11.1 163 8.3 162 1.4 161 1.1 160 1.3 159 1.1 158 1.1 157 1.2 156 4.4 155 11.7 154 11.7 153 5.9 152 1.2 151 1.2 150 1.1 149 1.2 148 1.3 147 1.4 146 5.1 145 8.1 144 7.1 143 2 142 1.5 141 1.4 140 1.4 139 1.4 138 1.2 137 2 136 7.2 135 8.2 134 5.1 133 1.1 132 1.1 131 1.1 130 1.4 129 1.5 128 1.3 127 5.7 126 11.4 125 11.4 124 4.3 123 1.3 122 1.4 121 1.5 120 1.1 119 1.5 118 1.3 117 7.8 116 10.4 115 7.8 114 1.3 113 1.1 112 1.2 111 1.4 110 1.3 109 1.4 108 4.2 107 11.2 106 11.2 105 5.6 104 1.5 103 1.4 102 1.3 101 1.4 100 1.5 99 1.4 98 6.2 97 9.9 96 8.7 95 2.5 94 1.2 93 1.1 92 1.2 91 1.4 90 1.2 89 2.5 88 8.6 87 9.9 86 6.2 85 1.2 84 1.3 83 1.3 82 1.3 81 1.4 80 1.3 79 3.9 78 7.9 77 7.9 76 2.9 75 1.1 74 1.4 73 1.5 72 1.2 71 1.3 70 1.3 69 6.8 68 9.1 67 6.8 66 1.4 65 1.2 64 1.3 63 1.1 62 1.2 61 1.4 60 3.2 59 8.7 58 8.7 57 4.3 56 1.4 55 1.2 54 1.2 53 1.2 52 1.1 51 1.2 50 6.3 49 10.2 48 8.9 47 2.5 46 1.4 45 1.4 44 1.1 43 1.1 42 1.2 41 2.3 40 7.9 39 9.1 38 5.7 37 1.2 36 1.2 35 1.2 34 1.1 33 1.4 32 1.5 31 5.8 30 11.6 29 11.6 28 4.3 27 1.1 26 1.4 25 1.3 24 1.5 23 1.4 22 1.3 21 7.6 20 10.1 19 7.6 18 1.3 17 1.2 16 1.2 15 1.3 14 1.5 13 1.3 12 3.7 11 9.9 10 9.9 9 4.9 8 1.4 7 1.2 6 1.5 5 1.5 4 1.4 3 1.2 2 7.4 1 11.9 0 10.4Z" fill="#042108" transform="translate(0 37.8)"/><use href="#w95215574" transform="translate(0 39.5)"/><rect x="0" y="37.2" width="242.3" height="1" fill="#042108"/><rect x="0" y="76.8" width="242.3" height="1" fill="#042108"/><text x="4" y="14" font-size="10.6" fill="rgba(0,0,0,0.68)" font-weight="normal" letter-spacing="0.05" stroke="rgba(0,0,0,0.68)" stroke-width="0.2" font-family="Liberation Sans">3 OPZ SD 2</text></svg>
<svg style="left:223.4px;top:634px" width="77.2" height="97" viewBox="0 0 77.2 97"><rect x="0" y="0" width="77.2" height="97" fill="#FF3636"/><path d="M0 18 L50.0 18 C27.5 18 17.5 97 0 97 Z" fill="rgba(0,0,0,0.13)"/><path d="M77.2 18 L71.2 18 C74.5 18 75.4 97 77.2 97 Z" fill="rgba(0,0,0,0.13)"/><rect x="0" y="17" width="77.2" height="1" fill="rgba(0,0,0,0.10)"/><rect x="13.8" y="18" width="1" height="79" fill="rgba(0,0,0,0.2)"/><rect x="42.1" y="18" width="1" height="79" fill="rgba(0,0,0,0.2)"/><rect x="70.4" y="18" width="1" height="79" fill="rgba(0,0,0,0.2)"/><path id="w49826077" d="M0 -0.5 1 -0.5 2 -0.5 3 -0.6 4 -0.6 5 -0.6 6 -0.6 7 -0.6 8 -0.6 9 -0.6 10 -0.7 11 -0.6 12 -0.7 13 -0.6 14 -0.6 15 -0.6 16 -0.7 17 -0.6 18 -0.7 19 -0.7 20 -0.6 21 -0.7 22 -0.6 23 -0.9 24 -0.9 25 -0.8 26 -1 27 -1.1 28 -0.9 29 -1.2 30 -1 31 -1.4 32 -1.4 33 -1.6 34 -1.2 35 -1.4 36 -1.6 37 -1.6 38 -1.5 39 -2.5 40 -2.1 41 -1.7 42 -1.7 43 -2 44 -1.9 45 -2.2 46 -2.1 47 -2.1 48 -1.8 49 -1.9 50 -2.8 51 -2.9 52 -2.2 53 -2.4 54 -2.3 55 -2.6 56 -2.4 57 -2.2 58 -2 59 -2 60 -2 61 -2.6 62 -2.7 63 -2.6 64 -2.9 65 -2.5 66 -2.1 67 -2.8 68 -2.6 69 -2.7 70 -2.6 71 -2.4 72 -2.8 73 -2.9 74 -2.3 75 -2.5 76 -2.8 77 -2.7 77.2 -2.7 L77.2 2.7 77 2.7 76 2.8 75 2.5 74 2.3 73 2.9 72 2.8 71 2.4 70 2.6 69 2.7 68 2.6 67 2.8 66 2.1 65 2.5 64 2.9 63 2.6 62 2.7 61 2.6 60 2 59 2 58 2 57 2.2 56 2.4 55 2.6 54 2.3 53 2.4 52 2.2 51 2.9 50 2.8 49 1.9 48 1.8 47 2.1 46 2.1 45 2.2 44 1.9 43 2 42 1.7 41 1.7 40 2.1 39 2.5 38 1.5 37 1.6 36 1.6 35 1.4 34 1.2 33 1.6 32 1.4 31 1.4 30 1 29 1.2 28 0.9 27 1.1 26 1 25 0.8 24 0.9 23 0.9 22 0.6 21 0.7 20 0.6 19 0.7 18 0.7 17 0.6 16 0.7 15 0.6 14 0.6 13 0.6 12 0.7 11 0.6 10 0.7 9 0.6 8 0.6 7 0.6 6 0.6 5 0.6 4 0.6 3 0.6 2 0.5 1 0.5 0 0.5Z" fill="#210707" transform="translate(0 37.8)"/><use href="#w49826077" transform="translate(0 39.5)"/><rect x="0" y="37.2" width="77.2" height="1" fill="#210707"/><rect x="0" y="76.8" width="77.2" height="1" fill="#210707"/><text x="4" y="14" font-size="10.6" fill="rgba(0,0,0,0.68)" font-weight="normal" letter-spacing="0.05" stroke="rgba(0,0,0,0.68)" stroke-width="0.2" font-family="Liberation Sans">OPZ CY</text></svg>
<svg style="left:319.0px;top:634px" width="259.3" height="97" viewBox="0 0 259.3 97"><rect x="0" y="0" width="259.3" height="97" fill="#FF3636"/><path d="M0 18 L4.0 18 C2.2 18 1.4 97 0 97 Z" fill="rgba(0,0,0,0.13)"/><path d="M259.3 18 L235.3 18 C248.5 18 252.1 97 259.3 97 Z" fill="rgba(0,0,0,0.13)"/><rect x="0" y="17" width="259.3" height="1" fill="rgba(0,0,0,0.10)"/><rect x="3.2" y="18" width="1" height="79" fill="rgba(0,0,0,0.2)"/><rect x="31.5" y="18" width="1" height="79" fill="rgba(0,0,0,0.2)"/><rect x="59.8" y="18" width="1" height="79" fill="rgba(0,0,0,0.2)"/><rect x="88.2" y="18" width="1" height="79" fill="rgba(0,0,0,0.2)"/><rect x="116.5" y="18" width="1" height="79" fill="rgba(0,0,0,0.2)"/><rect x="144.8" y="18" width="1" height="79" fill="rgba(0,0,0,0.2)"/><rect x="173.2" y="18" width="1" height="79" fill="rgba(0,0,0,0.2)"/><rect x="201.5" y="18" width="1" height="79" fill="rgba(0,0,0,0.2)"/><rect x="229.8" y="18" width="1" height="79" fill="rgba(0,0,0,0.2)"/><rect x="258.2" y="18" width="1" height="79" fill="rgba(0,0,0,0.2)"/><path id="w77799680" d="M0 -2.2 1 -1.8 2 -2 3 -2 4 -2.3 5 -2.3 6 -2.4 7 -1.9 8 -2.6 9 -2.9 10 -2 11 -2.2 12 -1.8 13 -1.9 14 -2.8 15 -3 16 -2.4 17 -2.4 18 -2.4 19 -2 20 -2.4 21 -2.9 22 -2.4 23 -1.9 24 -2.5 25 -2 26 -1.9 27 -1.9 28 -2.4 29 -2.2 30 -2.4 31 -2.3 32 -2.2 33 -2.6 34 -2.1 35 -2.2 36 -2.5 37 -2.2 38 -2.4 39 -2.2 40 -2.3 41 -2.1 42 -2.9 43 -2 44 -1.9 45 -2 46 -1.9 47 -2 48 -2.2 49 -2.1 50 -2.1 51 -1.9 52 -2 53 -2.5 54 -2.3 55 -2.2 56 -1.9 57 -2.3 58 -2.6 59 -2.8 60 -3.1 61 -2.3 62 -2.5 63 -2.3 64 -2.4 65 -2.3 66 -2 67 -1.8 68 -2 69 -2 70 -2.1 71 -2.5 72 -2.4 73 -2 74 -2.6 75 -2.6 76 -2.5 77 -2.1 78 -2 79 -2 80 -2.2 81 -2 82 -2.2 83 -2.4 84 -2.3 85 -2.6 86 -2.5 87 -2.2 88 -1.9 89 -1.8 90 -1.9 91 -2.2 92 -2.5 93 -3 94 -3.3 95 -2.4 96 -3.3 97 -3 98 -2.5 99 -2.4 100 -1.8 101 -2.3 102 -2.3 103 -2.2 104 -2 105 -2.2 106 -1.9 107 -2.1 108 -2.1 109 -2.5 110 -2.5 111 -3.3 112 -2.2 113 -2.5 114 -2.4 115 -2.4 116 -2 117 -2.2 118 -2.2 119 -1.9 120 -2.3 121 -2.2 122 -2.3 123 -2.2 124 -1.8 125 -2 126 -1.8 127 -2.5 128 -2.4 129 -2.4 130 -2 131 -1.8 132 -2.4 133 -2.5 134 -1.9 135 -2.1 136 -1.8 137 -2.3 138 -2.3 139 -1.9 140 -2.1 141 -2.4 142 -3.1 143 -3.2 144 -2.1 145 -1.9 146 -2.2 147 -2.3 148 -3 149 -2.2 150 -2.7 151 -2.5 152 -2.2 153 -2.8 154 -3.1 155 -2 156 -2 157 -2.2 158 -2 159 -2 160 -1.8 161 -2.2 162 -2 163 -2.4 164 -2.4 165 -2.9 166 -2.9 167 -3.2 168 -2.4 169 -2 170 -2.5 171 -2.6 172 -2.9 173 -2.7 174 -2.4 175 -2.6 176 -2.4 177 -2.6 178 -2.6 179 -2.3 180 -2.3 181 -2.3 182 -2.5 183 -1.9 184 -2.1 185 -2 186 -2.4 187 -2.1 188 -2.2 189 -2.1 190 -2.1 191 -2 192 -2 193 -2.4 194 -2.1 195 -2.4 196 -2.2 197 -1.8 198 -2.5 199 -2.6 200 -2.9 201 -2.8 202 -2.4 203 -2.1 204 -2.6 205 -2.3 206 -2.1 207 -1.8 208 -2.1 209 -2.5 210 -2.1 211 -2.3 212 -2.1 213 -2.1 214 -2.5 215 -3 216 -3.1 217 -2.3 218 -1.9 219 -2 220 -2.5 221 -2.2 222 -2.2 223 -2.3 224 -2.7 225 -2.2 226 -2.2 227 -2.4 228 -1.9 229 -2.5 230 -1.9 231 -1.9 232 -2.2 233 -2.3 234 -2 235 -1.9 236 -2.4 237 -2 238 -2.2 239 -2.2 240 -2.1 241 -2.2 242 -2.2 243 -2.5 244 -1.9 245 -2.3 246 -2 247 -2.1 248 -2.3 249 -2 250 -2 251 -2.3 252 -1.9 253 -2.1 254 -2.5 255 -2.5 256 -1.9 257 -1.9 258 -2 259 -2.5 259.3 -2.5 L259.3 2.5 259 2.5 258 2 257 1.9 256 1.9 255 2.5 254 2.5 253 2.1 252 1.9 251 2.3 250 2 249 2 248 2.3 247 2.1 246 2 245 2.3 244 1.9 243 2.5 242 2.2 241 2.2 240 2.1 239 2.2 238 2.2 237 2 236 2.4 235 1.9 234 2 233 2.3 232 2.2 231 1.9 230 1.9 229 2.5 228 1.9 227 2.4 226 2.2 225 2.2 224 2.7 223 2.3 222 2.2 221 2.2 220 2.5 219 2 218 1.9 217 2.3 216 3.1 215 3 214 2.5 213 2.1 212 2.1 211 2.3 210 2.1 209 2.5 208 2.1 207 1.8 206 2.1 205 2.3 204 2.6 203 2.1 202 2.4 201 2.8 200 2.9 199 2.6 198 2.5 197 1.8 196 2.2 195 2.4 194 2.1 193 2.4 192 2 191 2 190 2.1 189 2.1 188 2.2 187 2.1 186 2.4 185 2 184 2.1 183 1.9 182 2.5 181 2.3 180 2.3 179 2.3 178 2.6 177 2.6 176 2.4 175 2.6 174 2.4 173 2.7 172 2.9 171 2.6 170 2.5 169 2 168 2.4 167 3.2 166 2.9 165 2.9 164 2.4 163 2.4 162 2 161 2.2 160 1.8 159 2 158 2 157 2.2 156 2 155 2 154 3.1 153 2.8 152 2.2 151 2.5 150 2.7 149 2.2 148 3 147 2.3 146 2.2 145 1.9 144 2.1 143 3.2 142 3.1 141 2.4 140 2.1 139 1.9 138 2.3 137 2.3 136 1.8 135 2.1 134 1.9 133 2.5 132 2.4 131 1.8 130 2 129 2.4 128 2.4 127 2.5 126 1.8 125 2 124 1.8 123 2.2 122 2.3 121 2.2 120 2.3 119 1.9 118 2.2 117 2.2 116 2 115 2.4 114 2.4 113 2.5 112 2.2 111 3.3 110 2.5 109 2.5 108 2.1 107 2.1 106 1.9 105 2.2 104 2 103 2.2 102 2.3 101 2.3 100 1.8 99 2.4 98 2.5 97 3 96 3.3 95 2.4 94 3.3 93 3 92 2.5 91 2.2 90 1.9 89 1.8 88 1.9 87 2.2 86 2.5 85 2.6 84 2.3 83 2.4 82 2.2 81 2 80 2.2 79 2 78 2 77 2.1 76 2.5 75 2.6 74 2.6 73 2 72 2.4 71 2.5 70 2.1 69 2 68 2 67 1.8 66 2 65 2.3 64 2.4 63 2.3 62 2.5 61 2.3 60 3.1 59 2.8 58 2.6 57 2.3 56 1.9 55 2.2 54 2.3 53 2.5 52 2 51 1.9 50 2.1 49 2.1 48 2.2 47 2 46 1.9 45 2 44 1.9 43 2 42 2.9 41 2.1 40 2.3 39 2.2 38 2.4 37 2.2 36 2.5 35 2.2 34 2.1 33 2.6 32 2.2 31 2.3 30 2.4 29 2.2 28 2.4 27 1.9 26 1.9 25 2 24 2.5 23 1.9 22 2.4 21 2.9 20 2.4 19 2 18 2.4 17 2.4 16 2.4 15 3 14 2.8 13 1.9 12 1.8 11 2.2 10 2 9 2.9 8 2.6 7 1.9 6 2.4 5 2.3 4 2.3 3 2 2 2 1 1.8 0 2.2Z" fill="#210707" transform="translate(0 37.8)"/><use href="#w77799680" transform="translate(0 39.5)"/><rect x="0" y="37.2" width="259.3" height="1" fill="#210707"/><rect x="0" y="76.8" width="259.3" height="1" fill="#210707"/><text x="4" y="14" font-size="10.6" fill="rgba(0,0,0,0.68)" font-weight="normal" letter-spacing="0.05" stroke="rgba(0,0,0,0.68)" stroke-width="0.2" font-family="Liberation Sans">OPZ CY</text></svg>
<svg style="left:589.6px;top:634px" width="255.9" height="97" viewBox="0 0 255.9 97"><rect x="0" y="0" width="255.9" height="97" fill="#FF3636"/><path d="M255.9 18 L45.9 18 C161.4 18 192.9 97 255.9 97 Z" fill="rgba(0,0,0,0.15)"/><rect x="0" y="17" width="255.9" height="1" fill="rgba(0,0,0,0.10)"/><rect x="15.9" y="18" width="1" height="79" fill="rgba(0,0,0,0.2)"/><rect x="44.2" y="18" width="1" height="79" fill="rgba(0,0,0,0.2)"/><rect x="72.6" y="18" width="1" height="79" fill="rgba(0,0,0,0.2)"/><rect x="100.9" y="18" width="1" height="79" fill="rgba(0,0,0,0.2)"/><rect x="129.2" y="18" width="1" height="79" fill="rgba(0,0,0,0.2)"/><rect x="157.6" y="18" width="1" height="79" fill="rgba(0,0,0,0.2)"/><rect x="185.9" y="18" width="1" height="79" fill="rgba(0,0,0,0.2)"/><rect x="214.2" y="18" width="1" height="79" fill="rgba(0,0,0,0.2)"/><rect x="242.6" y="18" width="1" height="79" fill="rgba(0,0,0,0.2)"/><path id="w34367631" d="M0 -5.8 1 -7.1 2 -5.7 3 -6.1 4 -6.2 5 -6.1 6 -5.2 7 -5.1 8 -4.3 9 -4.9 10 -4.8 11 -5.5 12 -4.9 13 -5.2 14 -4.6 15 -4.2 16 -5.2 17 -5.1 18 -4.4 19 -3.9 20 -4.4 21 -4.4 22 -4.7 23 -4.4 24 -4.2 25 -4.3 26 -3.9 27 -3.5 28 -3.4 29 -4.5 30 -4.3 31 -3.6 32 -4.3 33 -3.8 34 -3.3 35 -4.2 36 -3.9 37 -4.3 38 -3.9 39 -3.2 40 -3.8 41 -4 42 -4.1 43 -3.4 44 -3.6 45 -3.8 46 -3.2 47 -3.9 48 -3.8 49 -3 50 -3.6 51 -3.3 52 -3.1 53 -3.5 54 -3.9 55 -3.4 56 -2.9 57 -3.3 58 -3.6 59 -3.7 60 -3.5 61 -2.7 62 -3.7 63 -3.3 64 -2.7 65 -2.7 66 -2.7 67 -3.2 68 -2.7 69 -3.3 70 -2.6 71 -3 72 -2.9 73 -2.5 74 -2.5 75 -3.3 76 -3.3 77 -2.5 78 -3.1 79 -3.3 80 -3.2 81 -3.1 82 -2.6 83 -2.9 84 -2.7 85 -3.1 86 -2.9 87 -2.9 88 -2.9 89 -2.5 90 -2.8 91 -2.2 92 -2.3 93 -2.9 94 -2.4 95 -2.6 96 -2.5 97 -2.2 98 -2.5 99 -2.7 100 -2.2 101 -2.2 102 -2.1 103 -2.1 104 -2.5 105 -2.4 106 -2.6 107 -2.3 108 -2.5 109 -2 110 -1.9 111 -1.9 112 -2 113 -2.4 114 -1.9 115 -2.1 116 -1.8 117 -1.7 118 -2.1 119 -2.1 120 -2 121 -2.3 122 -2.2 123 -2.2 124 -2 125 -1.8 126 -1.7 127 -2.1 128 -1.7 129 -1.6 130 -2 131 -1.6 132 -1.9 133 -1.6 134 -1.8 135 -1.5 136 -1.7 137 -1.7 138 -1.6 139 -1.5 140 -1.7 141 -1.8 142 -1.5 143 -1.4 144 -1.5 145 -1.7 146 -1.5 147 -1.7 148 -1.4 149 -1.7 150 -1.4 151 -1.4 152 -1.6 153 -1.5 154 -1.6 155 -1.4 156 -1.5 157 -1.3 158 -1.4 159 -1.4 160 -1.6 161 -1.5 162 -1.4 163 -1.5 164 -1.4 165 -1.4 166 -1.3 167 -1.3 168 -1.1 169 -1.4 170 -1.3 171 -1.3 172 -1.2 173 -1 174 -1 175 -1.3 176 -1.2 177 -1.2 178 -1.2 179 -1 180 -1.2 181 -1.1 182 -1.1 183 -1 184 -0.9 185 -0.9 186 -0.9 187 -0.9 188 -0.9 189 -0.9 190 -0.8 191 -0.7 192 -0.9 193 -0.8 194 -0.8 195 -0.9 196 -0.8 197 -0.7 198 -0.7 199 -0.8 200 -0.6 201 -0.7 202 -0.6 203 -0.7 204 -0.6 205 -0.6 206 -0.6 207 -0.5 208 -0.5 209 -0.6 210 -0.6 211 -0.5 212 -0.5 213 -0.6 214 -0.5 215 -0.6 216 -0.6 217 -0.5 218 -0.5 219 -0.6 220 -0.5 221 -0.5 222 -0.6 223 -0.6 224 -0.5 225 -0.5 226 -0.6 227 -0.5 228 -0.6 229 -0.5 230 -0.5 231 -0.5 232 -0.5 233 -0.5 234 -0.5 235 -0.5 236 -0.5 237 -0.5 238 -0.5 239 -0.5 240 -0.5 241 -0.6 242 -0.5 243 -0.5 244 -0.5 245 -0.5 246 -0.5 247 -0.5 248 -0.5 249 -0.6 250 -0.5 251 -0.5 252 -0.5 253 -0.5 254 -0.6 255 -0.6 255.9 -0.6 L255.9 0.6 255 0.6 254 0.6 253 0.5 252 0.5 251 0.5 250 0.5 249 0.6 248 0.5 247 0.5 246 0.5 245 0.5 244 0.5 243 0.5 242 0.5 241 0.6 240 0.5 239 0.5 238 0.5 237 0.5 236 0.5 235 0.5 234 0.5 233 0.5 232 0.5 231 0.5 230 0.5 229 0.5 228 0.6 227 0.5 226 0.6 225 0.5 224 0.5 223 0.6 222 0.6 221 0.5 220 0.5 219 0.6 218 0.5 217 0.5 216 0.6 215 0.6 214 0.5 213 0.6 212 0.5 211 0.5 210 0.6 209 0.6 208 0.5 207 0.5 206 0.6 205 0.6 204 0.6 203 0.7 202 0.6 201 0.7 200 0.6 199 0.8 198 0.7 197 0.7 196 0.8 195 0.9 194 0.8 193 0.8 192 0.9 191 0.7 190 0.8 189 0.9 188 0.9 187 0.9 186 0.9 185 0.9 184 0.9 183 1 182 1.1 181 1.1 180 1.2 179 1 178 1.2 177 1.2 176 1.2 175 1.3 174 1 173 1 172 1.2 171 1.3 170 1.3 169 1.4 168 1.1 167 1.3 166 1.3 165 1.4 164 1.4 163 1.5 162 1.4 161 1.5 160 1.6 159 1.4 158 1.4 157 1.3 156 1.5 155 1.4 154 1.6 153 1.5 152 1.6 151 1.4 150 1.4 149 1.7 148 1.4 147 1.7 146 1.5 145 1.7 144 1.5 143 1.4 142 1.5 141 1.8 140 1.7 139 1.5 138 1.6 137 1.7 136 1.7 135 1.5 134 1.8 133 1.6 132 1.9 131 1.6 130 2 129 1.6 128 1.7 127 2.1 126 1.7 125 1.8 124 2 123 2.2 122 2.2 121 2.3 120 2 119 2.1 118 2.1 117 1.7 116 1.8 115 2.1 114 1.9 113 2.4 112 2 111 1.9 110 1.9 109 2 108 2.5 107 2.3 106 2.6 105 2.4 104 2.5 103 2.1 102 2.1 101 2.2 100 2.2 99 2.7 98 2.5 97 2.2 96 2.5 95 2.6 94 2.4 93 2.9 92 2.3 91 2.2 90 2.8 89 2.5 88 2.9 87 2.9 86 2.9 85 3.1 84 2.7 83 2.9 82 2.6 81 3.1 80 3.2 79 3.3 78 3.1 77 2.5 76 3.3 75 3.3 74 2.5 73 2.5 72 2.9 71 3 70 2.6 69 3.3 68 2.7 67 3.2 66 2.7 65 2.7 64 2.7 63 3.3 62 3.7 61 2.7 60 3.5 59 3.7 58 3.6 57 3.3 56 2.9 55 3.4 54 3.9 53 3.5 52 3.1 51 3.3 50 3.6 49 3 48 3.8 47 3.9 46 3.2 45 3.8 44 3.6 43 3.4 42 4.1 41 4 40 3.8 39 3.2 38 3.9 37 4.3 36 3.9 35 4.2 34 3.3 33 3.8 32 4.3 31 3.6 30 4.3 29 4.5 28 3.4 27 3.5 26 3.9 25 4.3 24 4.2 23 4.4 22 4.7 21 4.4 20 4.4 19 3.9 18 4.4 17 5.1 16 5.2 15 4.2 14 4.6 13 5.2 12 4.9 11 5.5 10 4.8 9 4.9 8 4.3 7 5.1 6 5.2 5 6.1 4 6.2 3 6.1 2 5.7 1 7.1 0 5.8Z" fill="#210707" transform="translate(0 37.8)"/><use href="#w34367631" transform="translate(0 39.5)"/><rect x="0" y="37.2" width="255.9" height="1" fill="#210707"/><rect x="0" y="76.8" width="255.9" height="1" fill="#210707"/><text x="4" y="14" font-size="10.6" fill="rgba(0,0,0,0.68)" font-weight="normal" letter-spacing="0.05" stroke="rgba(0,0,0,0.68)" stroke-width="0.2" font-family="Liberation Sans">OPZ CY</text></svg>
<svg style="left:82.5px;top:732px" width="782.5" height="58" viewBox="0 0 782.5 58"><rect x="0" y="0" width="782.5" height="58" fill="#6E5E5E"/><rect x="0" y="18" width="782.5" height="1" fill="rgba(0,0,0,0.10)"/><rect x="13.0" y="19" width="1" height="39" fill="rgba(0,0,0,0.2)"/><rect x="41.3" y="19" width="1" height="39" fill="rgba(0,0,0,0.2)"/><rect x="69.7" y="19" width="1" height="39" fill="rgba(0,0,0,0.2)"/><rect x="98.0" y="19" width="1" height="39" fill="rgba(0,0,0,0.2)"/><rect x="126.3" y="19" width="1" height="39" fill="rgba(0,0,0,0.2)"/><rect x="154.7" y="19" width="1" height="39" fill="rgba(0,0,0,0.2)"/><rect x="183.0" y="19" width="1" height="39" fill="rgba(0,0,0,0.2)"/><rect x="211.3" y="19" width="1" height="39" fill="rgba(0,0,0,0.2)"/><rect x="239.7" y="19" width="1" height="39" fill="rgba(0,0,0,0.2)"/><rect x="268.0" y="19" width="1" height="39" fill="rgba(0,0,0,0.2)"/><rect x="296.3" y="19" width="1" height="39" fill="rgba(0,0,0,0.2)"/><rect x="324.7" y="19" width="1" height="39" fill="rgba(0,0,0,0.2)"/><rect x="353.0" y="19" width="1" height="39" fill="rgba(0,0,0,0.2)"/><rect x="381.3" y="19" width="1" height="39" fill="rgba(0,0,0,0.2)"/><rect x="409.7" y="19" width="1" height="39" fill="rgba(0,0,0,0.2)"/><rect x="438.0" y="19" width="1" height="39" fill="rgba(0,0,0,0.2)"/><rect x="466.3" y="19" width="1" height="39" fill="rgba(0,0,0,0.2)"/><rect x="494.7" y="19" width="1" height="39" fill="rgba(0,0,0,0.2)"/><rect x="523.0" y="19" width="1" height="39" fill="rgba(0,0,0,0.2)"/><rect x="551.3" y="19" width="1" height="39" fill="rgba(0,0,0,0.2)"/><rect x="579.7" y="19" width="1" height="39" fill="rgba(0,0,0,0.2)"/><rect x="608.0" y="19" width="1" height="39" fill="rgba(0,0,0,0.2)"/><rect x="636.3" y="19" width="1" height="39" fill="rgba(0,0,0,0.2)"/><rect x="664.7" y="19" width="1" height="39" fill="rgba(0,0,0,0.2)"/><rect x="693.0" y="19" width="1" height="39" fill="rgba(0,0,0,0.2)"/><rect x="721.3" y="19" width="1" height="39" fill="rgba(0,0,0,0.2)"/><rect x="749.7" y="19" width="1" height="39" fill="rgba(0,0,0,0.2)"/><rect x="778.0" y="19" width="1" height="39" fill="rgba(0,0,0,0.2)"/><path id="w67986859" d="M0 -0.8 1 -0.9 2 -0.8 3 -0.9 4 -0.8 5 -0.9 6 -1 7 -0.8 8 -1 9 -0.9 10 -0.9 11 -0.9 12 -1.5 13 -1.4 14 -1 15 -0.8 16 -1 17 -1 18 -0.7 19 -0.8 20 -0.9 21 -1.5 22 -0.8 23 -0.9 24 -0.8 25 -0.9 26 -1 27 -0.9 28 -0.8 29 -0.9 30 -0.8 31 -1 32 -0.9 33 -1 34 -1 35 -1 36 -1 37 -0.9 38 -1.1 39 -1.3 40 -1 41 -0.8 42 -0.7 43 -0.8 44 -0.9 45 -1.4 46 -1.9 47 -1.3 48 -1.3 49 -1.2 50 -0.8 51 -0.8 52 -0.8 53 -0.8 54 -0.9 55 -0.9 56 -1 57 -1 58 -0.9 59 -1 60 -1 61 -0.9 62 -0.9 63 -1.3 64 -1.7 65 -1.1 66 -1 67 -1.4 68 -1.3 69 -1 70 -0.7 71 -1 72 -1.5 73 -1.3 74 -1 75 -0.8 76 -1.4 77 -1.4 78 -0.8 79 -1 80 -0.7 81 -0.9 82 -0.9 83 -0.9 84 -1 85 -0.9 86 -1 87 -0.8 88 -0.9 89 -0.8 90 -0.9 91 -0.8 92 -1.5 93 -0.9 94 -1.3 95 -1.3 96 -1 97 -0.9 98 -0.9 99 -0.9 100 -0.9 101 -0.9 102 -1 103 -0.8 104 -0.9 105 -0.9 106 -1.2 107 -1.5 108 -0.9 109 -0.9 110 -0.8 111 -0.9 112 -1 113 -0.9 114 -0.8 115 -1 116 -0.8 117 -0.8 118 -1.1 119 -1.6 120 -1.3 121 -0.9 122 -0.8 123 -0.9 124 -0.8 125 -0.9 126 -0.7 127 -0.8 128 -1 129 -0.8 130 -0.8 131 -1 132 -1.5 133 -0.9 134 -0.7 135 -0.8 136 -1 137 -0.9 138 -0.7 139 -1 140 -0.7 141 -0.9 142 -1.6 143 -0.9 144 -0.8 145 -1 146 -0.8 147 -0.9 148 -1 149 -0.9 150 -0.7 151 -0.9 152 -0.8 153 -0.9 154 -0.9 155 -0.8 156 -0.9 157 -0.9 158 -1 159 -0.9 160 -0.9 161 -0.9 162 -0.8 163 -1 164 -0.9 165 -0.9 166 -0.8 167 -0.9 168 -1.6 169 -0.8 170 -1 171 -1 172 -0.8 173 -0.7 174 -1 175 -0.8 176 -0.9 177 -0.9 178 -1 179 -0.9 180 -0.9 181 -0.9 182 -1 183 -0.9 184 -0.8 185 -0.9 186 -1.2 187 -1 188 -1.4 189 -1.3 190 -1 191 -0.8 192 -0.9 193 -0.8 194 -0.9 195 -1.2 196 -1.3 197 -1.4 198 -0.9 199 -1.1 200 -1.4 201 -1.3 202 -1.1 203 -1 204 -0.8 205 -0.7 206 -0.9 207 -0.9 208 -0.8 209 -1.3 210 -1.6 211 -0.9 212 -0.9 213 -0.7 214 -0.9 215 -0.9 216 -0.9 217 -0.8 218 -0.7 219 -0.9 220 -0.8 221 -0.9 222 -0.7 223 -0.8 224 -0.7 225 -0.9 226 -0.7 227 -1.1 228 -1.4 229 -0.8 230 -0.8 231 -1 232 -0.9 233 -0.7 234 -1.8 235 -1.1 236 -1.3 237 -1.9 238 -1.5 239 -0.9 240 -0.7 241 -0.8 242 -0.9 243 -0.8 244 -0.9 245 -0.9 246 -0.9 247 -0.9 248 -1.9 249 -1.4 250 -0.9 251 -0.9 252 -0.9 253 -0.8 254 -0.8 255 -0.9 256 -0.9 257 -0.8 258 -0.9 259 -0.9 260 -0.9 261 -0.8 262 -0.7 263 -0.8 264 -0.9 265 -1 266 -0.8 267 -0.7 268 -1.1 269 -1.6 270 -0.8 271 -1 272 -0.9 273 -1 274 -1 275 -1.2 276 -1.4 277 -1.4 278 -1 279 -0.9 280 -0.8 281 -0.9 282 -1.6 283 -1.6 284 -1 285 -0.8 286 -0.9 287 -1 288 -1.3 289 -1.6 290 -1.3 291 -0.8 292 -1 293 -1.4 294 -1 295 -1 296 -1.4 297 -1.3 298 -0.8 299 -0.9 300 -0.8 301 -0.9 302 -0.9 303 -0.9 304 -1 305 -1 306 -0.8 307 -0.9 308 -0.8 309 -0.7 310 -1 311 -0.8 312 -0.8 313 -1.6 314 -1 315 -0.8 316 -0.9 317 -0.8 318 -0.7 319 -0.9 320 -0.8 321 -1.3 322 -1.9 323 -1.5 324 -0.8 325 -1.4 326 -1.2 327 -1.1 328 -1.5 329 -1.4 330 -0.8 331 -1 332 -1 333 -1.4 334 -1.4 335 -1.6 336 -1.8 337 -1.1 338 -1.3 339 -1.6 340 -1.8 341 -0.9 342 -0.8 343 -1 344 -0.9 345 -1 346 -1 347 -1.5 348 -1.3 349 -1.5 350 -1.6 351 -1.4 352 -1.6 353 -1.3 354 -0.9 355 -0.8 356 -0.7 357 -0.9 358 -1.1 359 -1.5 360 -1.7 361 -2 362 -2.6 363 -2.8 364 -3.3 365 -3 366 -3 367 -3.2 368 -2.5 369 -2.5 370 -2.7 371 -3 372 -3 373 -2.9 374 -2.3 375 -2.3 376 -2.2 377 -2.2 378 -2.1 379 -2 380 -2.5 381 -2.2 382 -2.5 383 -2.2 384 -2.2 385 -2.3 386 -2 387 -1.7 388 -1.8 389 -1.7 390 -1.5 391 -1.6 392 -1.6 393 -1.3 394 -1.1 395 -1.1 396 -1.1 397 -1 398 -1 399 -1 400 -0.8 401 -0.8 402 -0.9 403 -0.8 404 -1 405 -1 406 -0.7 407 -0.8 408 -0.9 409 -1.3 410 -1 411 -0.9 412 -1 413 -0.8 414 -1 415 -0.9 416 -0.9 417 -0.8 418 -0.7 419 -0.9 420 -1 421 -1.2 422 -1.1 423 -1 424 -1.4 425 -1.4 426 -1 427 -1.6 428 -1.5 429 -1.4 430 -1.4 431 -1.2 432 -0.9 433 -0.8 434 -1 435 -1 436 -0.7 437 -0.9 438 -0.8 439 -1 440 -1 441 -1 442 -1.5 443 -1 444 -0.8 445 -0.8 446 -1 447 -0.9 448 -0.8 449 -1 450 -0.9 451 -1.1 452 -1.3 453 -0.9 454 -1.3 455 -1.1 456 -1.6 457 -1.4 458 -1.1 459 -0.7 460 -1.5 461 -1.6 462 -1.1 463 -1.4 464 -1.3 465 -0.9 466 -0.8 467 -0.8 468 -0.8 469 -0.8 470 -0.8 471 -0.9 472 -0.8 473 -0.9 474 -0.9 475 -1 476 -0.9 477 -1 478 -1 479 -0.8 480 -0.7 481 -1 482 -0.8 483 -0.9 484 -1 485 -1.5 486 -1.4 487 -0.9 488 -1 489 -0.8 490 -0.8 491 -0.9 492 -1 493 -1.1 494 -0.8 495 -1 496 -1 497 -0.7 498 -0.8 499 -1.4 500 -1.2 501 -1.8 502 -1.8 503 -1.5 504 -1 505 -1 506 -0.9 507 -0.8 508 -0.9 509 -1.2 510 -0.8 511 -0.9 512 -0.9 513 -1 514 -0.9 515 -0.8 516 -0.9 517 -1.3 518 -1.5 519 -1 520 -0.9 521 -0.8 522 -1 523 -0.8 524 -1 525 -1 526 -1 527 -0.8 528 -0.9 529 -1.2 530 -1.7 531 -1.2 532 -1 533 -0.8 534 -0.9 535 -1 536 -0.9 537 -1 538 -1 539 -1 540 -0.8 541 -0.9 542 -0.8 543 -0.8 544 -1 545 -0.9 546 -0.9 547 -0.9 548 -0.8 549 -0.8 550 -0.8 551 -0.9 552 -0.8 553 -0.8 554 -1 555 -1.3 556 -0.9 557 -0.9 558 -1 559 -0.9 560 -1 561 -1.7 562 -1.4 563 -1.1 564 -1 565 -1 566 -1 567 -0.9 568 -1.3 569 -1.2 570 -0.9 571 -0.9 572 -0.8 573 -0.9 574 -0.8 575 -1 576 -1.5 577 -0.8 578 -1 579 -1 580 -1 581 -1.5 582 -1.6 583 -1.7 584 -1 585 -1.3 586 -1.9 587 -1.6 588 -1 589 -0.9 590 -0.9 591 -1.2 592 -0.8 593 -0.9 594 -0.9 595 -0.8 596 -0.9 597 -1 598 -1 599 -1 600 -1 601 -0.8 602 -0.8 603 -0.9 604 -1 605 -0.8 606 -0.9 607 -0.9 608 -1.4 609 -1.4 610 -1.2 611 -0.9 612 -1.2 613 -1.7 614 -1.8 615 -0.9 616 -0.9 617 -1.1 618 -1.2 619 -1 620 -0.9 621 -0.8 622 -1 623 -1 624 -0.8 625 -0.9 626 -1 627 -0.8 628 -1 629 -0.9 630 -0.9 631 -0.9 632 -1.1 633 -1.4 634 -1.5 635 -1.1 636 -0.8 637 -0.9 638 -1.2 639 -0.9 640 -1 641 -0.8 642 -1 643 -0.9 644 -0.9 645 -0.9 646 -1.1 647 -1 648 -1.2 649 -1.3 650 -1.4 651 -1.4 652 -1.5 653 -1.4 654 -1.3 655 -1.7 656 -1.1 657 -1 658 -1.2 659 -0.9 660 -1 661 -1.4 662 -1.8 663 -1.2 664 -1.3 665 -0.9 666 -0.8 667 -1.1 668 -0.9 669 -0.8 670 -0.8 671 -0.9 672 -0.8 673 -0.8 674 -1.2 675 -1.4 676 -0.9 677 -1 678 -0.9 679 -1.5 680 -1.1 681 -1.1 682 -1.4 683 -1.3 684 -1.1 685 -1.2 686 -1.4 687 -1.4 688 -1.6 689 -1.9 690 -1.5 691 -1.3 692 -1.4 693 -1.5 694 -1.2 695 -1.2 696 -1.4 697 -1 698 -0.8 699 -0.9 700 -0.8 701 -0.9 702 -0.8 703 -0.9 704 -1.3 705 -1.5 706 -1 707 -1.1 708 -0.9 709 -0.9 710 -0.9 711 -1.5 712 -1.2 713 -0.8 714 -1.1 715 -1.1 716 -1.5 717 -1.4 718 -1.3 719 -1.5 720 -1.5 721 -1.2 722 -0.9 723 -0.8 724 -0.8 725 -0.8 726 -0.9 727 -1 728 -1 729 -0.8 730 -1 731 -0.9 732 -0.9 733 -1.6 734 -1.1 735 -1.1 736 -0.9 737 -1.1 738 -1.1 739 -0.9 740 -1 741 -1 742 -1 743 -0.8 744 -0.9 745 -0.8 746 -0.8 747 -0.9 748 -0.8 749 -0.8 750 -1.1 751 -0.8 752 -1 753 -0.9 754 -0.9 755 -0.9 756 -1 757 -0.8 758 -1.1 759 -1.1 760 -1 761 -0.9 762 -1 763 -0.8 764 -0.9 765 -1 766 -1 767 -1.1 768 -0.8 769 -1.1 770 -0.8 771 -0.8 772 -1 773 -1.3 774 -1.8 775 -1.1 776 -1.2 777 -1.1 778 -1.4 779 -1.4 780 -1.3 781 -1.2 782 -1.1 782.5 -1.1 L782.5 1.1 782 1.1 781 1.2 780 1.3 779 1.4 778 1.4 777 1.1 776 1.2 775 1.1 774 1.8 773 1.3 772 1 771 0.8 770 0.8 769 1.1 768 0.8 767 1.1 766 1 765 1 764 0.9 763 0.8 762 1 761 0.9 760 1 759 1.1 758 1.1 757 0.8 756 1 755 0.9 754 0.9 753 0.9 752 1 751 0.8 750 1.1 749 0.8 748 0.8 747 0.9 746 0.8 745 0.8 744 0.9 743 0.8 742 1 741 1 740 1 739 0.9 738 1.1 737 1.1 736 0.9 735 1.1 734 1.1 733 1.6 732 0.9 731 0.9 730 1 729 0.8 728 1 727 1 726 0.9 725 0.8 724 0.8 723 0.8 722 0.9 721 1.2 720 1.5 719 1.5 718 1.3 717 1.4 716 1.5 715 1.1 714 1.1 713 0.8 712 1.2 711 1.5 710 0.9 709 0.9 708 0.9 707 1.1 706 1 705 1.5 704 1.3 703 0.9 702 0.8 701 0.9 700 0.8 699 0.9 698 0.8 697 1 696 1.4 695 1.2 694 1.2 693 1.5 692 1.4 691 1.3 690 1.5 689 1.9 688 1.6 687 1.4 686 1.4 685 1.2 684 1.1 683 1.3 682 1.4 681 1.1 680 1.1 679 1.5 678 0.9 677 1 676 0.9 675 1.4 674 1.2 673 0.8 672 0.8 671 0.9 670 0.8 669 0.8 668 0.9 667 1.1 666 0.8 665 0.9 664 1.3 663 1.2 662 1.8 661 1.4 660 1 659 0.9 658 1.2 657 1 656 1.1 655 1.7 654 1.3 653 1.4 652 1.5 651 1.4 650 1.4 649 1.3 648 1.2 647 1 646 1.1 645 0.9 644 0.9 643 0.9 642 1 641 0.8 640 1 639 0.9 638 1.2 637 0.9 636 0.8 635 1.1 634 1.5 633 1.4 632 1.1 631 0.9 630 0.9 629 0.9 628 1 627 0.8 626 1 625 0.9 624 0.8 623 1 622 1 621 0.8 620 0.9 619 1 618 1.2 617 1.1 616 0.9 615 0.9 614 1.8 613 1.7 612 1.2 611 0.9 610 1.2 609 1.4 608 1.4 607 0.9 606 0.9 605 0.8 604 1 603 0.9 602 0.8 601 0.8 600 1 599 1 598 1 597 1 596 0.9 595 0.8 594 0.9 593 0.9 592 0.8 591 1.2 590 0.9 589 0.9 588 1 587 1.6 586 1.9 585 1.3 584 1 583 1.7 582 1.6 581 1.5 580 1 579 1 578 1 577 0.8 576 1.5 575 1 574 0.8 573 0.9 572 0.8 571 0.9 570 0.9 569 1.2 568 1.3 567 0.9 566 1 565 1 564 1 563 1.1 562 1.4 561 1.7 560 1 559 0.9 558 1 557 0.9 556 0.9 555 1.3 554 1 553 0.8 552 0.8 551 0.9 550 0.8 549 0.8 548 0.8 547 0.9 546 0.9 545 0.9 544 1 543 0.8 542 0.8 541 0.9 540 0.8 539 1 538 1 537 1 536 0.9 535 1 534 0.9 533 0.8 532 1 531 1.2 530 1.7 529 1.2 528 0.9 527 0.8 526 1 525 1 524 1 523 0.8 522 1 521 0.8 520 0.9 519 1 518 1.5 517 1.3 516 0.9 515 0.8 514 0.9 513 1 512 0.9 511 0.9 510 0.8 509 1.2 508 0.9 507 0.8 506 0.9 505 1 504 1 503 1.5 502 1.8 501 1.8 500 1.2 499 1.4 498 0.8 497 0.7 496 1 495 1 494 0.8 493 1.1 492 1 491 0.9 490 0.8 489 0.8 488 1 487 0.9 486 1.4 485 1.5 484 1 483 0.9 482 0.8 481 1 480 0.7 479 0.8 478 1 477 1 476 0.9 475 1 474 0.9 473 0.9 472 0.8 471 0.9 470 0.8 469 0.8 468 0.8 467 0.8 466 0.8 465 0.9 464 1.3 463 1.4 462 1.1 461 1.6 460 1.5 459 0.7 458 1.1 457 1.4 456 1.6 455 1.1 454 1.3 453 0.9 452 1.3 451 1.1 450 0.9 449 1 448 0.8 447 0.9 446 1 445 0.8 444 0.8 443 1 442 1.5 441 1 440 1 439 1 438 0.8 437 0.9 436 0.7 435 1 434 1 433 0.8 432 0.9 431 1.2 430 1.4 429 1.4 428 1.5 427 1.6 426 1 425 1.4 424 1.4 423 1 422 1.1 421 1.2 420 1 419 0.9 418 0.7 417 0.8 416 0.9 415 0.9 414 1 413 0.8 412 1 411 0.9 410 1 409 1.3 408 0.9 407 0.8 406 0.7 405 1 404 1 403 0.8 402 0.9 401 0.8 400 0.8 399 1 398 1 397 1 396 1.1 395 1.1 394 1.1 393 1.3 392 1.6 391 1.6 390 1.5 389 1.7 388 1.8 387 1.7 386 2 385 2.3 384 2.2 383 2.2 382 2.5 381 2.2 380 2.5 379 2 378 2.1 377 2.2 376 2.2 375 2.3 374 2.3 373 2.9 372 3 371 3 370 2.7 369 2.5 368 2.5 367 3.2 366 3 365 3 364 3.3 363 2.8 362 2.6 361 2 360 1.7 359 1.5 358 1.1 357 0.9 356 0.7 355 0.8 354 0.9 353 1.3 352 1.6 351 1.4 350 1.6 349 1.5 348 1.3 347 1.5 346 1 345 1 344 0.9 343 1 342 0.8 341 0.9 340 1.8 339 1.6 338 1.3 337 1.1 336 1.8 335 1.6 334 1.4 333 1.4 332 1 331 1 330 0.8 329 1.4 328 1.5 327 1.1 326 1.2 325 1.4 324 0.8 323 1.5 322 1.9 321 1.3 320 0.8 319 0.9 318 0.7 317 0.8 316 0.9 315 0.8 314 1 313 1.6 312 0.8 311 0.8 310 1 309 0.7 308 0.8 307 0.9 306 0.8 305 1 304 1 303 0.9 302 0.9 301 0.9 300 0.8 299 0.9 298 0.8 297 1.3 296 1.4 295 1 294 1 293 1.4 292 1 291 0.8 290 1.3 289 1.6 288 1.3 287 1 286 0.9 285 0.8 284 1 283 1.6 282 1.6 281 0.9 280 0.8 279 0.9 278 1 277 1.4 276 1.4 275 1.2 274 1 273 1 272 0.9 271 1 270 0.8 269 1.6 268 1.1 267 0.7 266 0.8 265 1 264 0.9 263 0.8 262 0.7 261 0.8 260 0.9 259 0.9 258 0.9 257 0.8 256 0.9 255 0.9 254 0.8 253 0.8 252 0.9 251 0.9 250 0.9 249 1.4 248 1.9 247 0.9 246 0.9 245 0.9 244 0.9 243 0.8 242 0.9 241 0.8 240 0.7 239 0.9 238 1.5 237 1.9 236 1.3 235 1.1 234 1.8 233 0.7 232 0.9 231 1 230 0.8 229 0.8 228 1.4 227 1.1 226 0.7 225 0.9 224 0.7 223 0.8 222 0.7 221 0.9 220 0.8 219 0.9 218 0.7 217 0.8 216 0.9 215 0.9 214 0.9 213 0.7 212 0.9 211 0.9 210 1.6 209 1.3 208 0.8 207 0.9 206 0.9 205 0.7 204 0.8 203 1 202 1.1 201 1.3 200 1.4 199 1.1 198 0.9 197 1.4 196 1.3 195 1.2 194 0.9 193 0.8 192 0.9 191 0.8 190 1 189 1.3 188 1.4 187 1 186 1.2 185 0.9 184 0.8 183 0.9 182 1 181 0.9 180 0.9 179 0.9 178 1 177 0.9 176 0.9 175 0.8 174 1 173 0.7 172 0.8 171 1 170 1 169 0.8 168 1.6 167 0.9 166 0.8 165 0.9 164 0.9 163 1 162 0.8 161 0.9 160 0.9 159 0.9 158 1 157 0.9 156 0.9 155 0.8 154 0.9 153 0.9 152 0.8 151 0.9 150 0.7 149 0.9 148 1 147 0.9 146 0.8 145 1 144 0.8 143 0.9 142 1.6 141 0.9 140 0.7 139 1 138 0.7 137 0.9 136 1 135 0.8 134 0.7 133 0.9 132 1.5 131 1 130 0.8 129 0.8 128 1 127 0.8 126 0.7 125 0.9 124 0.8 123 0.9 122 0.8 121 0.9 120 1.3 119 1.6 118 1.1 117 0.8 116 0.8 115 1 114 0.8 113 0.9 112 1 111 0.9 110 0.8 109 0.9 108 0.9 107 1.5 106 1.2 105 0.9 104 0.9 103 0.8 102 1 101 0.9 100 0.9 99 0.9 98 0.9 97 0.9 96 1 95 1.3 94 1.3 93 0.9 92 1.5 91 0.8 90 0.9 89 0.8 88 0.9 87 0.8 86 1 85 0.9 84 1 83 0.9 82 0.9 81 0.9 80 0.7 79 1 78 0.8 77 1.4 76 1.4 75 0.8 74 1 73 1.3 72 1.5 71 1 70 0.7 69 1 68 1.3 67 1.4 66 1 65 1.1 64 1.7 63 1.3 62 0.9 61 0.9 60 1 59 1 58 0.9 57 1 56 1 55 0.9 54 0.9 53 0.8 52 0.8 51 0.8 50 0.8 49 1.2 48 1.3 47 1.3 46 1.9 45 1.4 44 0.9 43 0.8 42 0.7 41 0.8 40 1 39 1.3 38 1.1 37 0.9 36 1 35 1 34 1 33 1 32 0.9 31 1 30 0.8 29 0.9 28 0.8 27 0.9 26 1 25 0.9 24 0.8 23 0.9 22 0.8 21 1.5 20 0.9 19 0.8 18 0.7 17 1 16 1 15 0.8 14 1 13 1.4 12 1.5 11 0.9 10 0.9 9 0.9 8 1 7 0.8 6 1 5 0.9 4 0.8 3 0.9 2 0.8 1 0.9 0 0.8Z" fill="#141010" transform="translate(0 28.8)"/><use href="#w67986859" transform="translate(0 19.5)"/><rect x="0" y="28.2" width="782.5" height="1" fill="#141010"/><rect x="0" y="47.8" width="782.5" height="1" fill="#141010"/><text x="4" y="14" font-size="10.3" fill="#F2CACA" font-weight="bold" letter-spacing="0" stroke="#F2CACA" stroke-width="0" font-family="Liberation Sans">OPZ CY</text></svg>
<svg style="left:286.0px;top:791px" width="75.4" height="58" viewBox="0 0 75.4 58"><rect x="0" y="0" width="75.4" height="58" fill="#6E5E5E"/><rect x="0" y="18" width="75.4" height="1" fill="rgba(0,0,0,0.10)"/><rect x="7.8" y="19" width="1" height="39" fill="rgba(0,0,0,0.2)"/><rect x="36.2" y="19" width="1" height="39" fill="rgba(0,0,0,0.2)"/><rect x="64.5" y="19" width="1" height="39" fill="rgba(0,0,0,0.2)"/><path d="M0 -2.5 1 -1.8 2 -2.3 3 -2.1 4 -2.4 5 -2 6 -2.3 7 -1.8 8 -2.3 9 -1.9 10 -1.8 11 -1.8 12 -2 13 -1.6 14 -1.8 15 -1.5 16 -1.5 17 -1.5 18 -1.5 19 -1.4 20 -1.6 21 -1.4 22 -1.5 23 -1.4 24 -1.4 25 -1.3 26 -1.1 27 -1.1 28 -1 29 -0.9 30 -0.7 31 -0.8 32 -0.8 33 -0.7 34 -0.6 35 -0.6 36 -0.7 37 -0.7 38 -0.7 39 -0.6 40 -0.5 41 -0.5 42 -0.6 43 -0.5 44 -0.5 45 -0.5 46 -0.5 47 -0.5 48 -0.5 49 -0.5 50 -0.5 51 -0.5 52 -0.5 53 -0.5 54 -0.6 55 -0.6 56 -0.5 57 -0.6 58 -0.6 59 -0.6 60 -0.5 61 -0.6 62 -0.6 63 -0.5 64 -0.5 65 -0.6 66 -0.6 67 -0.6 68 -0.5 69 -0.5 70 -0.5 71 -0.5 72 -0.5 73 -0.6 74 -0.6 75 -0.5 75.4 -0.5 L75.4 0.5 75 0.5 74 0.6 73 0.6 72 0.5 71 0.5 70 0.5 69 0.5 68 0.5 67 0.6 66 0.6 65 0.6 64 0.5 63 0.5 62 0.6 61 0.6 60 0.5 59 0.6 58 0.6 57 0.6 56 0.5 55 0.6 54 0.6 53 0.5 52 0.5 51 0.5 50 0.5 49 0.5 48 0.5 47 0.5 46 0.5 45 0.5 44 0.5 43 0.5 42 0.6 41 0.5 40 0.5 39 0.6 38 0.7 37 0.7 36 0.7 35 0.6 34 0.6 33 0.7 32 0.8 31 0.8 30 0.7 29 0.9 28 1 27 1.1 26 1.1 25 1.3 24 1.4 23 1.4 22 1.5 21 1.4 20 1.6 19 1.4 18 1.5 17 1.5 16 1.5 15 1.5 14 1.8 13 1.6 12 2 11 1.8 10 1.8 9 1.9 8 2.3 7 1.8 6 2.3 5 2 4 2.4 3 2.1 2 2.3 1 1.8 0 2.5Z" fill="#141010" transform="translate(0 28.8)"/><path d="M0 -0.5 1 -0.6 2 -0.5 3 -0.6 4 -0.6 5 -0.5 6 -0.6 7 -0.6 8 -0.6 9 -0.5 10 -0.5 11 -0.6 12 -0.6 13 -0.5 14 -0.6 15 -0.5 16 -0.5 17 -0.5 18 -0.5 19 -0.5 20 -0.5 21 -0.5 22 -0.5 23 -0.5 24 -0.6 25 -0.5 26 -0.5 27 -0.5 28 -0.5 29 -0.5 30 -0.5 31 -0.5 32 -0.6 33 -0.6 34 -0.5 35 -0.6 36 -0.5 37 -0.5 38 -0.6 39 -0.5 40 -0.5 41 -0.5 42 -0.5 43 -0.6 44 -0.5 45 -0.5 46 -0.5 47 -0.5 48 -0.5 49 -0.5 50 -0.5 51 -0.6 52 -0.5 53 -0.5 54 -0.5 55 -0.5 56 -0.5 57 -0.5 58 -0.6 59 -0.5 60 -0.5 61 -0.5 62 -0.6 63 -0.5 64 -0.5 65 -0.5 66 -0.5 67 -0.5 68 -0.5 69 -0.5 70 -0.5 71 -0.5 72 -0.5 73 -0.6 74 -0.5 75 -0.5 75.4 -0.5 L75.4 0.5 75 0.5 74 0.5 73 0.6 72 0.5 71 0.5 70 0.5 69 0.5 68 0.5 67 0.5 66 0.5 65 0.5 64 0.5 63 0.5 62 0.6 61 0.5 60 0.5 59 0.5 58 0.6 57 0.5 56 0.5 55 0.5 54 0.5 53 0.5 52 0.5 51 0.6 50 0.5 49 0.5 48 0.5 47 0.5 46 0.5 45 0.5 44 0.5 43 0.6 42 0.5 41 0.5 40 0.5 39 0.5 38 0.6 37 0.5 36 0.5 35 0.6 34 0.5 33 0.6 32 0.6 31 0.5 30 0.5 29 0.5 28 0.5 27 0.5 26 0.5 25 0.5 24 0.6 23 0.5 22 0.5 21 0.5 20 0.5 19 0.5 18 0.5 17 0.5 16 0.5 15 0.5 14 0.6 13 0.5 12 0.6 11 0.6 10 0.5 9 0.5 8 0.6 7 0.6 6 0.6 5 0.5 4 0.6 3 0.6 2 0.5 1 0.6 0 0.5Z" fill="#141010" transform="translate(0 48.2)"/><rect x="0" y="28.2" width="75.4" height="1" fill="#141010"/><rect x="0" y="47.8" width="75.4" height="1" fill="#141010"/><text x="4" y="14" font-size="10.3" fill="#F2CACA" font-weight="bold" letter-spacing="0" stroke="#F2CACA" stroke-width="0" font-family="Liberation Sans">OPZ CY 2</text></svg>
<svg style="left:351.0px;top:851px" width="155.4" height="97" viewBox="0 0 155.4 97"><rect x="0" y="0" width="155.4" height="97" fill="#12BFB0"/><path d="M0 18 L45.0 18 C24.8 18 15.7 97 0 97 Z" fill="rgba(0,0,0,0.13)"/><path d="M155.4 18 L101.4 18 C131.1 18 139.2 97 155.4 97 Z" fill="rgba(0,0,0,0.13)"/><rect x="0" y="17" width="155.4" height="1" fill="rgba(0,0,0,0.10)"/><rect x="27.8" y="18" width="1" height="79" fill="rgba(0,0,0,0.2)"/><rect x="56.2" y="18" width="1" height="79" fill="rgba(0,0,0,0.2)"/><rect x="84.5" y="18" width="1" height="79" fill="rgba(0,0,0,0.2)"/><rect x="112.8" y="18" width="1" height="79" fill="rgba(0,0,0,0.2)"/><rect x="141.2" y="18" width="1" height="79" fill="rgba(0,0,0,0.2)"/><path id="w4681421" d="M0 -0.5 1 -0.7 2 -1 3 -1.1 4 -1.3 5 -1.7 6 -1.8 7 -1.9 8 -2.1 9 -2.3 10 -2.3 11 -2.9 12 -3.4 13 -3.4 14 -3.6 15 -3.4 16 -3.7 17 -3.6 18 -4.5 19 -4.1 20 -4.3 21 -5.5 22 -4.7 23 -6 24 -5.6 25 -6 26 -6 27 -5.3 28 -6.6 29 -5.8 30 -6.3 31 -5.9 32 -5.9 33 -6.8 34 -6.2 35 -7 36 -8.1 37 -8.5 38 -7.1 39 -6.4 40 -6.9 41 -6.3 42 -6.6 43 -7.6 44 -7.6 45 -6.2 46 -7.3 47 -7.1 48 -7.1 49 -6.4 50 -7.1 51 -6.4 52 -7.8 53 -7.7 54 -7.6 55 -7.1 56 -8.4 57 -7 58 -6.6 59 -7 60 -8.3 61 -6.5 62 -7.9 63 -8.4 64 -8.1 65 -7.2 66 -7.2 67 -8.2 68 -7.8 69 -8 70 -6.5 71 -7.4 72 -7.6 73 -6.4 74 -6.2 75 -7.5 76 -6.9 77 -6.4 78 -6.5 79 -5.9 80 -5.8 81 -5.5 82 -6 83 -5.4 84 -6.8 85 -6.8 86 -6 87 -5 88 -5.9 89 -5 90 -5.2 91 -4.6 92 -5.1 93 -4.3 94 -4.5 95 -4.3 96 -4.5 97 -5 98 -4.3 99 -4.5 100 -4.2 101 -3.8 102 -3.1 103 -3 104 -2.9 105 -3.2 106 -2.9 107 -3.3 108 -2.5 109 -2.3 110 -2.6 111 -2.5 112 -1.9 113 -2.1 114 -2 115 -2.2 116 -2 117 -2 118 -1.7 119 -1.8 120 -1.4 121 -1.2 122 -1.1 123 -1.3 124 -1.1 125 -1.1 126 -1.2 127 -1 128 -0.9 129 -1 130 -1.1 131 -0.8 132 -1 133 -0.9 134 -0.8 135 -0.9 136 -0.9 137 -0.8 138 -0.7 139 -0.9 140 -0.7 141 -0.8 142 -0.7 143 -0.7 144 -0.7 145 -0.6 146 -0.6 147 -0.7 148 -0.6 149 -0.6 150 -0.6 151 -0.6 152 -0.5 153 -0.5 154 -0.5 155 -0.6 155.4 -0.6 L155.4 0.6 155 0.6 154 0.5 153 0.5 152 0.5 151 0.6 150 0.6 149 0.6 148 0.6 147 0.7 146 0.6 145 0.6 144 0.7 143 0.7 142 0.7 141 0.8 140 0.7 139 0.9 138 0.7 137 0.8 136 0.9 135 0.9 134 0.8 133 0.9 132 1 131 0.8 130 1.1 129 1 128 0.9 127 1 126 1.2 125 1.1 124 1.1 123 1.3 122 1.1 121 1.2 120 1.4 119 1.8 118 1.7 117 2 116 2 115 2.2 114 2 113 2.1 112 1.9 111 2.5 110 2.6 109 2.3 108 2.5 107 3.3 106 2.9 105 3.2 104 2.9 103 3 102 3.1 101 3.8 100 4.2 99 4.5 98 4.3 97 5 96 4.5 95 4.3 94 4.5 93 4.3 92 5.1 91 4.6 90 5.2 89 5 88 5.9 87 5 86 6 85 6.8 84 6.8 83 5.4 82 6 81 5.5 80 5.8 79 5.9 78 6.5 77 6.4 76 6.9 75 7.5 74 6.2 73 6.4 72 7.6 71 7.4 70 6.5 69 8 68 7.8 67 8.2 66 7.2 65 7.2 64 8.1 63 8.4 62 7.9 61 6.5 60 8.3 59 7 58 6.6 57 7 56 8.4 55 7.1 54 7.6 53 7.7 52 7.8 51 6.4 50 7.1 49 6.4 48 7.1 47 7.1 46 7.3 45 6.2 44 7.6 43 7.6 42 6.6 41 6.3 40 6.9 39 6.4 38 7.1 37 8.5 36 8.1 35 7 34 6.2 33 6.8 32 5.9 31 5.9 30 6.3 29 5.8 28 6.6 27 5.3 26 6 25 6 24 5.6 23 6 22 4.7 21 5.5 20 4.3 19 4.1 18 4.5 17 3.6 16 3.7 15 3.4 14 3.6 13 3.4 12 3.4 11 2.9 10 2.3 9 2.3 8 2.1 7 1.9 6 1.8 5 1.7 4 1.3 3 1.1 2 1 1 0.7 0 0.5Z" fill="#021917" transform="translate(0 37.8)"/><use href="#w4681421" transform="translate(0 39.5)"/><rect x="0" y="37.2" width="155.4" height="1" fill="#021917"/><rect x="0" y="76.8" width="155.4" height="1" fill="#021917"/><text x="4" y="14" font-size="10.6" fill="rgba(0,0,0,0.68)" font-weight="normal" letter-spacing="0.05" stroke="rgba(0,0,0,0.68)" stroke-width="0.2" font-family="Liberation Sans">OPZ CY 2</text></svg>
<svg style="left:571.3px;top:851px" width="107.0" height="97" viewBox="0 0 107.0 97"><rect x="0" y="0" width="107.0" height="97" fill="#12BFB0"/><path d="M0 18 L22.0 18 C12.1 18 7.7 97 0 97 Z" fill="rgba(0,0,0,0.13)"/><path d="M107.0 18 L82.0 18 C95.8 18 99.5 97 107.0 97 Z" fill="rgba(0,0,0,0.13)"/><rect x="0" y="17" width="107.0" height="1" fill="rgba(0,0,0,0.10)"/><rect x="5.9" y="18" width="1" height="79" fill="rgba(0,0,0,0.2)"/><rect x="34.2" y="18" width="1" height="79" fill="rgba(0,0,0,0.2)"/><rect x="62.5" y="18" width="1" height="79" fill="rgba(0,0,0,0.2)"/><rect x="90.9" y="18" width="1" height="79" fill="rgba(0,0,0,0.2)"/><path id="w53286188" d="M0 -0.6 1 -0.6 2 -0.9 3 -0.9 4 -1.1 5 -1.4 6 -1.3 7 -1.5 8 -1.4 9 -2.1 10 -2.4 11 -2.1 12 -2.3 13 -2.8 14 -3.1 15 -3.6 16 -3.4 17 -4 18 -3.7 19 -3.9 20 -3.6 21 -4.3 22 -5.4 23 -4.2 24 -4.6 25 -3.7 26 -3.7 27 -3.8 28 -4.3 29 -3.5 30 -3.4 31 -3.5 32 -3.8 33 -3.2 34 -3.1 35 -3.7 36 -3.5 37 -3.5 38 -2.9 39 -3.1 40 -2.9 41 -3.2 42 -3.8 43 -3.9 44 -3.7 45 -3.2 46 -3.4 47 -3.7 48 -3.1 49 -3.1 50 -3.5 51 -3.1 52 -3.2 53 -3.1 54 -3.5 55 -3.2 56 -2.8 57 -2.7 58 -3.3 59 -2.7 60 -3.3 61 -2.8 62 -3.1 63 -2.9 64 -3.2 65 -2.7 66 -3 67 -3.2 68 -2.8 69 -3.5 70 -3.4 71 -3.4 72 -3.3 73 -3.2 74 -2.8 75 -3 76 -2.6 77 -2.3 78 -3 79 -2.9 80 -2.3 81 -2.4 82 -2.2 83 -2.6 84 -2.1 85 -2.5 86 -1.9 87 -2.2 88 -2.4 89 -2.1 90 -1.8 91 -1.6 92 -1.9 93 -1.5 94 -1.5 95 -1.5 96 -1.3 97 -1.1 98 -1.3 99 -1.1 100 -1 101 -0.7 102 -0.8 103 -0.8 104 -0.7 105 -0.6 106 -0.6 107 -0.5 L107 0.5 106 0.6 105 0.6 104 0.7 103 0.8 102 0.8 101 0.7 100 1 99 1.1 98 1.3 97 1.1 96 1.3 95 1.5 94 1.5 93 1.5 92 1.9 91 1.6 90 1.8 89 2.1 88 2.4 87 2.2 86 1.9 85 2.5 84 2.1 83 2.6 82 2.2 81 2.4 80 2.3 79 2.9 78 3 77 2.3 76 2.6 75 3 74 2.8 73 3.2 72 3.3 71 3.4 70 3.4 69 3.5 68 2.8 67 3.2 66 3 65 2.7 64 3.2 63 2.9 62 3.1 61 2.8 60 3.3 59 2.7 58 3.3 57 2.7 56 2.8 55 3.2 54 3.5 53 3.1 52 3.2 51 3.1 50 3.5 49 3.1 48 3.1 47 3.7 46 3.4 45 3.2 44 3.7 43 3.9 42 3.8 41 3.2 40 2.9 39 3.1 38 2.9 37 3.5 36 3.5 35 3.7 34 3.1 33 3.2 32 3.8 31 3.5 30 3.4 29 3.5 28 4.3 27 3.8 26 3.7 25 3.7 24 4.6 23 4.2 22 5.4 21 4.3 20 3.6 19 3.9 18 3.7 17 4 16 3.4 15 3.6 14 3.1 13 2.8 12 2.3 11 2.1 10 2.4 9 2.1 8 1.4 7 1.5 6 1.3 5 1.4 4 1.1 3 0.9 2 0.9 1 0.6 0 0.6Z" fill="#021917" transform="translate(0 37.8)"/><use href="#w53286188" transform="translate(0 39.5)"/><rect x="0" y="37.2" width="107.0" height="1" fill="#021917"/><rect x="0" y="76.8" width="107.0" height="1" fill="#021917"/><text x="4" y="14" font-size="10.6" fill="rgba(0,0,0,0.68)" font-weight="normal" letter-spacing="0.05" stroke="rgba(0,0,0,0.68)" stroke-width="0.2" font-family="Liberation Sans">OPZ CY 2</text></svg>
<svg style="left:684.4px;top:851px" width="162.5" height="97" viewBox="0 0 162.5 97"><rect x="0" y="0" width="162.5" height="97" fill="#12BFB0"/><path d="M0 18 L20.0 18 C11.0 18 7.0 97 0 97 Z" fill="rgba(0,0,0,0.13)"/><path d="M162.5 18 L66.5 18 C119.3 18 133.7 97 162.5 97 Z" fill="rgba(0,0,0,0.13)"/><rect x="0" y="17" width="162.5" height="1" fill="rgba(0,0,0,0.10)"/><rect x="6.1" y="18" width="1" height="79" fill="rgba(0,0,0,0.2)"/><rect x="34.4" y="18" width="1" height="79" fill="rgba(0,0,0,0.2)"/><rect x="62.8" y="18" width="1" height="79" fill="rgba(0,0,0,0.2)"/><rect x="91.1" y="18" width="1" height="79" fill="rgba(0,0,0,0.2)"/><rect x="119.4" y="18" width="1" height="79" fill="rgba(0,0,0,0.2)"/><rect x="147.8" y="18" width="1" height="79" fill="rgba(0,0,0,0.2)"/><path id="w87199754" d="M0 -0.6 1 -0.6 2 -0.9 3 -0.9 4 -0.9 5 -1.3 6 -1.2 7 -1.3 8 -1.4 9 -1.8 10 -2.1 11 -2.1 12 -1.9 13 -2.5 14 -2.7 15 -2.4 16 -2.4 17 -2.9 18 -3.4 19 -3.5 20 -3.6 21 -3.6 22 -3.2 23 -3.8 24 -3.7 25 -4.1 26 -4.1 27 -3.8 28 -4.9 29 -3.8 30 -4.4 31 -4.4 32 -5.4 33 -4 34 -4.7 35 -5.2 36 -4.6 37 -5 38 -4.2 39 -4.2 40 -4.1 41 -4 42 -3.9 43 -3.5 44 -4.7 45 -4.3 46 -4.2 47 -3.9 48 -3.5 49 -3.4 50 -4.3 51 -4.1 52 -3.6 53 -3.9 54 -4 55 -3 56 -3.3 57 -3.3 58 -3.2 59 -3.4 60 -3.2 61 -2.9 62 -3.8 63 -3.3 64 -3.6 65 -2.9 66 -3.1 67 -3.3 68 -2.8 69 -3.2 70 -2.9 71 -3.1 72 -3 73 -3.5 74 -3.2 75 -2.9 76 -3.2 77 -3.1 78 -2.8 79 -3.4 80 -3.2 81 -2.6 82 -3.1 83 -2.9 84 -2.6 85 -3.5 86 -3.1 87 -3.4 88 -2.9 89 -2.9 90 -3.5 91 -3.9 92 -2.8 93 -2.5 94 -3.1 95 -2.8 96 -2.3 97 -3.1 98 -2.6 99 -3 100 -2.5 101 -2.2 102 -2.6 103 -2.4 104 -2.7 105 -2.5 106 -2.3 107 -2.3 108 -2.4 109 -2.5 110 -2.5 111 -2.2 112 -3 113 -2.8 114 -2.3 115 -2 116 -2.4 117 -2 118 -2.3 119 -1.7 120 -2.1 121 -1.6 122 -1.6 123 -1.7 124 -1.6 125 -1.6 126 -1.6 127 -1.6 128 -1.2 129 -1.5 130 -1.3 131 -1.3 132 -1.2 133 -1.3 134 -1 135 -0.9 136 -1.1 137 -1 138 -0.9 139 -0.9 140 -0.9 141 -0.8 142 -0.9 143 -0.9 144 -0.9 145 -0.9 146 -0.7 147 -0.7 148 -0.8 149 -0.8 150 -0.8 151 -0.7 152 -0.6 153 -0.6 154 -0.6 155 -0.6 156 -0.7 157 -0.6 158 -0.6 159 -0.5 160 -0.5 161 -0.5 162 -0.5 162.5 -0.5 L162.5 0.5 162 0.5 161 0.5 160 0.5 159 0.5 158 0.6 157 0.6 156 0.7 155 0.6 154 0.6 153 0.6 152 0.6 151 0.7 150 0.8 149 0.8 148 0.8 147 0.7 146 0.7 145 0.9 144 0.9 143 0.9 142 0.9 141 0.8 140 0.9 139 0.9 138 0.9 137 1 136 1.1 135 0.9 134 1 133 1.3 132 1.2 131 1.3 130 1.3 129 1.5 128 1.2 127 1.6 126 1.6 125 1.6 124 1.6 123 1.7 122 1.6 121 1.6 120 2.1 119 1.7 118 2.3 117 2 116 2.4 115 2 114 2.3 113 2.8 112 3 111 2.2 110 2.5 109 2.5 108 2.4 107 2.3 106 2.3 105 2.5 104 2.7 103 2.4 102 2.6 101 2.2 100 2.5 99 3 98 2.6 97 3.1 96 2.3 95 2.8 94 3.1 93 2.5 92 2.8 91 3.9 90 3.5 89 2.9 88 2.9 87 3.4 86 3.1 85 3.5 84 2.6 83 2.9 82 3.1 81 2.6 80 3.2 79 3.4 78 2.8 77 3.1 76 3.2 75 2.9 74 3.2 73 3.5 72 3 71 3.1 70 2.9 69 3.2 68 2.8 67 3.3 66 3.1 65 2.9 64 3.6 63 3.3 62 3.8 61 2.9 60 3.2 59 3.4 58 3.2 57 3.3 56 3.3 55 3 54 4 53 3.9 52 3.6 51 4.1 50 4.3 49 3.4 48 3.5 47 3.9 46 4.2 45 4.3 44 4.7 43 3.5 42 3.9 41 4 40 4.1 39 4.2 38 4.2 37 5 36 4.6 35 5.2 34 4.7 33 4 32 5.4 31 4.4 30 4.4 29 3.8 28 4.9 27 3.8 26 4.1 25 4.1 24 3.7 23 3.8 22 3.2 21 3.6 20 3.6 19 3.5 18 3.4 17 2.9 16 2.4 15 2.4 14 2.7 13 2.5 12 1.9 11 2.1 10 2.1 9 1.8 8 1.4 7 1.3 6 1.2 5 1.3 4 0.9 3 0.9 2 0.9 1 0.6 0 0.6Z" fill="#021917" transform="translate(0 37.8)"/><use href="#w87199754" transform="translate(0 39.5)"/><rect x="0" y="37.2" width="162.5" height="1" fill="#021917"/><rect x="0" y="76.8" width="162.5" height="1" fill="#021917"/><text x="4" y="14" font-size="10.6" fill="rgba(0,0,0,0.68)" font-weight="normal" letter-spacing="0.05" stroke="rgba(0,0,0,0.68)" stroke-width="0.2" font-family="Liberation Sans">OPZ CY 2</text></svg>
<svg style="left:166.7px;top:950px" width="172.9" height="98" viewBox="0 0 172.9 98"><rect x="0" y="0" width="172.9" height="98" fill="#FFA529"/><path d="M0 18 L16.0 18 C8.8 18 5.6 98 0 98 Z" fill="rgba(0,0,0,0.13)"/><path d="M172.9 18 L156.9 18 C165.7 18 168.1 98 172.9 98 Z" fill="rgba(0,0,0,0.13)"/><rect x="0" y="17" width="172.9" height="1" fill="rgba(0,0,0,0.10)"/><rect x="13.8" y="18" width="1" height="80" fill="rgba(0,0,0,0.2)"/><rect x="42.1" y="18" width="1" height="80" fill="rgba(0,0,0,0.2)"/><rect x="70.5" y="18" width="1" height="80" fill="rgba(0,0,0,0.2)"/><rect x="98.8" y="18" width="1" height="80" fill="rgba(0,0,0,0.2)"/><rect x="127.1" y="18" width="1" height="80" fill="rgba(0,0,0,0.2)"/><rect x="155.5" y="18" width="1" height="80" fill="rgba(0,0,0,0.2)"/><path d="M0 -0.5 1 -0.6 2 -0.5 3 -1.1 4 -1.2 5 -1.5 6 -1 7 -1.1 8 -1.1 9 -1.3 10 -1.2 11 -2.2 12 -1.9 13 -2.7 14 -2.7 15 -2.1 16 -1.8 17 -2.3 18 -3.5 19 -3.8 20 -3.7 21 -3.4 22 -3.2 23 -4.3 24 -5.6 25 -4.4 26 -4.9 27 -4.5 28 -4.9 29 -3.2 30 -4.8 31 -5.4 32 -5.1 33 -3.9 34 -3.3 35 -2.8 36 -3.4 37 -3.2 38 -2.6 39 -3.4 40 -5 41 -6.2 42 -4.8 43 -3.2 44 -2.2 45 -2.6 46 -4.3 47 -4.4 48 -4.2 49 -2.6 50 -2.9 51 -5 52 -4.7 53 -5.1 54 -4.8 55 -4 56 -2.7 57 -2.4 58 -2.9 59 -3.4 60 -3 61 -3.3 62 -3.1 63 -2.5 64 -3.7 65 -4 66 -3 67 -5.5 68 -4.6 69 -4.4 70 -3.6 71 -3.3 72 -3.1 73 -4.8 74 -5.4 75 -4.8 76 -4 77 -4.5 78 -2.8 79 -3.5 80 -3.2 81 -3.9 82 -3.6 83 -2.6 84 -2.9 85 -2.7 86 -2.9 87 -2.2 88 -1.7 89 -2.4 90 -1.8 91 -2.1 92 -2.6 93 -2.7 94 -3 95 -2.6 96 -2.4 97 -2.1 98 -2.2 99 -1.9 100 -1.6 101 -2.2 102 -2.3 103 -1.8 104 -2.3 105 -2 106 -1.7 107 -2.3 108 -1.2 109 -1.5 110 -1.5 111 -1.9 112 -1.4 113 -2.1 114 -1.1 115 -1.4 116 -1.4 117 -1.6 118 -1.1 119 -1 120 -1.5 121 -1.5 122 -1.2 123 -1.4 124 -1 125 -1.1 126 -1.1 127 -0.8 128 -1.3 129 -0.8 130 -0.8 131 -1.3 132 -1 133 -0.8 134 -1.3 135 -0.8 136 -1 137 -0.7 138 -0.7 139 -0.9 140 -1.1 141 -0.7 142 -1.1 143 -1 144 -1 145 -1.3 146 -1 147 -0.7 148 -0.8 149 -1.4 150 -0.9 151 -1 152 -1.4 153 -1.5 154 -1.6 155 -1.4 156 -1.2 157 -1.8 158 -1 159 -1.3 160 -2.2 161 -1.4 162 -2.3 163 -2.1 164 -2.2 165 -2.3 166 -2.1 167 -2.7 168 -1.4 169 -1.6 170 -2.1 171 -1.9 172 -1.7 172.9 -1.6 L172.9 1.6 172 1.7 171 1.9 170 2.1 169 1.6 168 1.4 167 2.7 166 2.1 165 2.3 164 2.2 163 2.1 162 2.3 161 1.4 160 2.2 159 1.3 158 1 157 1.8 156 1.2 155 1.4 154 1.6 153 1.5 152 1.4 151 1 150 0.9 149 1.4 148 0.8 147 0.7 146 1 145 1.3 144 1 143 1 142 1.1 141 0.7 140 1.1 139 0.9 138 0.7 137 0.7 136 1 135 0.8 134 1.3 133 0.8 132 1 131 1.3 130 0.8 129 0.8 128 1.3 127 0.8 126 1.1 125 1.1 124 1 123 1.4 122 1.2 121 1.5 120 1.5 119 1 118 1.1 117 1.6 116 1.4 115 1.4 114 1.1 113 2.1 112 1.4 111 1.9 110 1.5 109 1.5 108 1.2 107 2.3 106 1.7 105 2 104 2.3 103 1.8 102 2.3 101 2.2 100 1.6 99 1.9 98 2.2 97 2.1 96 2.4 95 2.6 94 3 93 2.7 92 2.6 91 2.1 90 1.8 89 2.4 88 1.7 87 2.2 86 2.9 85 2.7 84 2.9 83 2.6 82 3.6 81 3.9 80 3.2 79 3.5 78 2.8 77 4.5 76 4 75 4.8 74 5.4 73 4.8 72 3.1 71 3.3 70 3.6 69 4.4 68 4.6 67 5.5 66 3 65 4 64 3.7 63 2.5 62 3.1 61 3.3 60 3 59 3.4 58 2.9 57 2.4 56 2.7 55 4 54 4.8 53 5.1 52 4.7 51 5 50 2.9 49 2.6 48 4.2 47 4.4 46 4.3 45 2.6 44 2.2 43 3.2 42 4.8 41 6.2 40 5 39 3.4 38 2.6 37 3.2 36 3.4 35 2.8 34 3.3 33 3.9 32 5.1 31 5.4 30 4.8 29 3.2 28 4.9 27 4.5 26 4.9 25 4.4 24 5.6 23 4.3 22 3.2 21 3.4 20 3.7 19 3.8 18 3.5 17 2.3 16 1.8 15 2.1 14 2.7 13 2.7 12 1.9 11 2.2 10 1.2 9 1.3 8 1.1 7 1.1 6 1 5 1.5 4 1.2 3 1.1 2 0.5 1 0.6 0 0.5Z" fill="#211505" transform="translate(0 38.0)"/><path d="M0 -0.5 1 -0.6 2 -0.7 3 -0.7 4 -0.8 5 -0.8 6 -1 7 -1 8 -1.1 9 -1.3 10 -1.2 11 -1.2 12 -1.2 13 -1.4 14 -1.5 15 -1.4 16 -1.7 17 -1.6 18 -1.9 19 -1.5 20 -1.6 21 -1.4 22 -1.7 23 -1.6 24 -1.6 25 -1.6 26 -1.9 27 -1.8 28 -1.6 29 -1.7 30 -1.5 31 -2 32 -1.9 33 -1.8 34 -1.5 35 -2 36 -1.6 37 -1.5 38 -1.7 39 -1.7 40 -1.9 41 -1.5 42 -1.5 43 -1.7 44 -1.5 45 -1.8 46 -1.7 47 -1.9 48 -2 49 -1.6 50 -1.9 51 -1.7 52 -2 53 -1.5 54 -1.7 55 -2 56 -1.5 57 -1.6 58 -1.6 59 -1.7 60 -2.1 61 -1.6 62 -2 63 -1.7 64 -2.1 65 -1.7 66 -1.7 67 -2.3 68 -6.5 69 -4.1 70 -1.9 71 -2.1 72 -2 73 -2.2 74 -2.3 75 -2.4 76 -2 77 -2.5 78 -2.1 79 -2.4 80 -2.6 81 -2.6 82 -2.4 83 -2.4 84 -2.2 85 -2.8 86 -2.6 87 -2.8 88 -3 89 -2.7 90 -4.1 91 -3.2 92 -2.2 93 -2.2 94 -2.7 95 -2.5 96 -4.3 97 -3.9 98 -2.2 99 -2.4 100 -2.4 101 -2 102 -1.8 103 -1.9 104 -2.1 105 -1.9 106 -1.7 107 -2.1 108 -2 109 -1.8 110 -1.6 111 -1.7 112 -1.8 113 -1.5 114 -1.5 115 -1.4 116 -1.4 117 -1.7 118 -1.7 119 -1.6 120 -1.4 121 -1.4 122 -1.2 123 -1.6 124 -1.4 125 -1.2 126 -1.2 127 -1.2 128 -1.2 129 -1.4 130 -1.1 131 -1.3 132 -1.1 133 -1 134 -1.2 135 -1 136 -1.2 137 -1.1 138 -1.1 139 -1 140 -1.1 141 -1 142 -0.9 143 -0.8 144 -1 145 -1.2 146 -1 147 -1.3 148 -1.1 149 -1.5 150 -1.5 151 -1.6 152 -1.7 153 -1.7 154 -1.9 155 -1.9 156 -1.8 157 -2.3 158 -1.9 159 -2.4 160 -2.2 161 -2 162 -2.2 163 -2.4 164 -2.2 165 -2.6 166 -2.9 167 -2.7 168 -2.4 169 -2.3 170 -2 171 -2.1 172 -1.9 172.9 -1.8 L172.9 1.8 172 1.9 171 2.1 170 2 169 2.3 168 2.4 167 2.7 166 2.9 165 2.6 164 2.2 163 2.4 162 2.2 161 2 160 2.2 159 2.4 158 1.9 157 2.3 156 1.8 155 1.9 154 1.9 153 1.7 152 1.7 151 1.6 150 1.5 149 1.5 148 1.1 147 1.3 146 1 145 1.2 144 1 143 0.8 142 0.9 141 1 140 1.1 139 1 138 1.1 137 1.1 136 1.2 135 1 134 1.2 133 1 132 1.1 131 1.3 130 1.1 129 1.4 128 1.2 127 1.2 126 1.2 125 1.2 124 1.4 123 1.6 122 1.2 121 1.4 120 1.4 119 1.6 118 1.7 117 1.7 116 1.4 115 1.4 114 1.5 113 1.5 112 1.8 111 1.7 110 1.6 109 1.8 108 2 107 2.1 106 1.7 105 1.9 104 2.1 103 1.9 102 1.8 101 2 100 2.4 99 2.4 98 2.2 97 3.9 96 4.3 95 2.5 94 2.7 93 2.2 92 2.2 91 3.2 90 4.1 89 2.7 88 3 87 2.8 86 2.6 85 2.8 84 2.2 83 2.4 82 2.4 81 2.6 80 2.6 79 2.4 78 2.1 77 2.5 76 2 75 2.4 74 2.3 73 2.2 72 2 71 2.1 70 1.9 69 4.1 68 6.5 67 2.3 66 1.7 65 1.7 64 2.1 63 1.7 62 2 61 1.6 60 2.1 59 1.7 58 1.6 57 1.6 56 1.5 55 2 54 1.7 53 1.5 52 2 51 1.7 50 1.9 49 1.6 48 2 47 1.9 46 1.7 45 1.8 44 1.5 43 1.7 42 1.5 41 1.5 40 1.9 39 1.7 38 1.7 37 1.5 36 1.6 35 2 34 1.5 33 1.8 32 1.9 31 2 30 1.5 29 1.7 28 1.6 27 1.8 26 1.9 25 1.6 24 1.6 23 1.6 22 1.7 21 1.4 20 1.6 19 1.5 18 1.9 17 1.6 16 1.7 15 1.4 14 1.5 13 1.4 12 1.2 11 1.2 10 1.2 9 1.3 8 1.1 7 1 6 1 5 0.8 4 0.8 3 0.7 2 0.7 1 0.6 0 0.5Z" fill="#211505" transform="translate(0 78.0)"/><rect x="0" y="37.5" width="172.9" height="1" fill="#211505"/><rect x="0" y="77.5" width="172.9" height="1" fill="#211505"/><text x="4" y="14" font-size="10.6" fill="rgba(0,0,0,0.68)" font-weight="normal" letter-spacing="0.05" stroke="rgba(0,0,0,0.68)" stroke-width="0.2" font-family="Liberation Sans">Strega &gt; µC</text></svg>
<svg style="left:339.6px;top:950px" width="238.7" height="98" viewBox="0 0 238.7 98"><rect x="0" y="0" width="238.7" height="98" fill="#FFA529"/><path d="M238.7 18 L98.7 18 C175.7 18 196.7 98 238.7 98 Z" fill="rgba(0,0,0,0.13)"/><rect x="0" y="17" width="238.7" height="1" fill="rgba(0,0,0,0.10)"/><rect x="10.9" y="18" width="1" height="80" fill="rgba(0,0,0,0.2)"/><rect x="39.2" y="18" width="1" height="80" fill="rgba(0,0,0,0.2)"/><rect x="67.6" y="18" width="1" height="80" fill="rgba(0,0,0,0.2)"/><rect x="95.9" y="18" width="1" height="80" fill="rgba(0,0,0,0.2)"/><rect x="124.2" y="18" width="1" height="80" fill="rgba(0,0,0,0.2)"/><rect x="152.6" y="18" width="1" height="80" fill="rgba(0,0,0,0.2)"/><rect x="180.9" y="18" width="1" height="80" fill="rgba(0,0,0,0.2)"/><rect x="209.2" y="18" width="1" height="80" fill="rgba(0,0,0,0.2)"/><rect x="237.6" y="18" width="1" height="80" fill="rgba(0,0,0,0.2)"/><path id="w74385174" d="M0 -3.7 1 -4.4 2 -5 3 -4.1 4 -4.4 5 -4.2 6 -4.7 7 -4.6 8 -4.5 9 -5 10 -4.7 11 -4.2 12 -4.2 13 -4.6 14 -4.7 15 -4 16 -4.9 17 -4.3 18 -4.8 19 -3.8 20 -4.2 21 -3.7 22 -4.3 23 -4.1 24 -4.2 25 -4.1 26 -5 27 -4.7 28 -4.3 29 -4.5 30 -4 31 -5.2 32 -5.1 33 -4.6 34 -4 35 -5.2 36 -4.1 37 -3.9 38 -4.4 39 -4.4 40 -5.1 41 -4.1 42 -3.9 43 -4.5 44 -3.9 45 -4.9 46 -4.6 47 -5.2 48 -5.3 49 -4.2 50 -5.1 51 -4.7 52 -5.4 53 -4 54 -4.6 55 -5.4 56 -4 57 -4.4 58 -4.4 59 -4.5 60 -5.5 61 -4.2 62 -5.2 63 -4.3 64 -5.3 65 -4.1 66 -4.1 67 -5.4 68 -3.9 69 -4.9 70 -4.2 71 -4.7 72 -4.3 73 -4.8 74 -4.8 75 -4.9 76 -4 77 -5 78 -4.2 79 -4.7 80 -5 81 -4.9 82 -4.5 83 -4.5 84 -4 85 -5 86 -4.6 87 -4.8 88 -5.1 89 -4.7 90 -4.1 91 -4.4 92 -3.9 93 -4.1 94 -4.9 95 -4.6 96 -3.9 97 -4.4 98 -4.2 99 -4.8 100 -4.8 101 -4.1 102 -3.7 103 -3.8 104 -4.2 105 -3.9 106 -3.4 107 -4.3 108 -4.1 109 -3.7 110 -3.3 111 -3.7 112 -3.9 113 -3.2 114 -3.2 115 -3.1 116 -3.1 117 -3.7 118 -3.8 119 -3.7 120 -3.3 121 -3.3 122 -2.8 123 -3.7 124 -3.3 125 -2.9 126 -2.8 127 -2.9 128 -3 129 -3.3 130 -2.6 131 -3.3 132 -2.7 133 -2.6 134 -3 135 -2.5 136 -3.2 137 -2.9 138 -2.9 139 -2.7 140 -2.9 141 -2.8 142 -2.6 143 -2.2 144 -2.6 145 -2.8 146 -2.1 147 -2.4 148 -2 149 -2.4 150 -2.2 151 -2.2 152 -2.1 153 -2.1 154 -2.1 155 -2 156 -1.8 157 -2.1 158 -1.6 159 -1.9 160 -1.7 161 -1.5 162 -1.6 163 -1.7 164 -1.5 165 -1.7 166 -1.9 167 -1.7 168 -1.6 169 -1.6 170 -1.6 171 -1.7 172 -1.7 173 -1.5 174 -1.6 175 -1.6 176 -1.3 177 -1.3 178 -1.4 179 -1.4 180 -1.5 181 -1.4 182 -1.5 183 -1.5 184 -1.6 185 -1.4 186 -1.2 187 -1.5 188 -1.3 189 -1.4 190 -1.2 191 -1.2 192 -1.3 193 -1.4 194 -1.4 195 -1.4 196 -1.2 197 -1.3 198 -1.3 199 -1.2 200 -1.2 201 -1.1 202 -1.1 203 -1 204 -1 205 -1.2 206 -1.1 207 -1.1 208 -1.1 209 -0.9 210 -0.9 211 -1 212 -0.9 213 -0.9 214 -1 215 -0.9 216 -1.1 217 -0.9 218 -1 219 -1 220 -0.9 221 -0.9 222 -0.7 223 -0.9 224 -0.7 225 -0.9 226 -0.9 227 -0.8 228 -0.8 229 -0.8 230 -0.7 231 -0.7 232 -0.7 233 -0.6 234 -0.6 235 -0.6 236 -0.6 237 -0.5 238 -0.5 238.7 -0.5 L238.7 0.5 238 0.5 237 0.5 236 0.6 235 0.6 234 0.6 233 0.6 232 0.7 231 0.7 230 0.7 229 0.8 228 0.8 227 0.8 226 0.9 225 0.9 224 0.7 223 0.9 222 0.7 221 0.9 220 0.9 219 1 218 1 217 0.9 216 1.1 215 0.9 214 1 213 0.9 212 0.9 211 1 210 0.9 209 0.9 208 1.1 207 1.1 206 1.1 205 1.2 204 1 203 1 202 1.1 201 1.1 200 1.2 199 1.2 198 1.3 197 1.3 196 1.2 195 1.4 194 1.4 193 1.4 192 1.3 191 1.2 190 1.2 189 1.4 188 1.3 187 1.5 186 1.2 185 1.4 184 1.6 183 1.5 182 1.5 181 1.4 180 1.5 179 1.4 178 1.4 177 1.3 176 1.3 175 1.6 174 1.6 173 1.5 172 1.7 171 1.7 170 1.6 169 1.6 168 1.6 167 1.7 166 1.9 165 1.7 164 1.5 163 1.7 162 1.6 161 1.5 160 1.7 159 1.9 158 1.6 157 2.1 156 1.8 155 2 154 2.1 153 2.1 152 2.1 151 2.2 150 2.2 149 2.4 148 2 147 2.4 146 2.1 145 2.8 144 2.6 143 2.2 142 2.6 141 2.8 140 2.9 139 2.7 138 2.9 137 2.9 136 3.2 135 2.5 134 3 133 2.6 132 2.7 131 3.3 130 2.6 129 3.3 128 3 127 2.9 126 2.8 125 2.9 124 3.3 123 3.7 122 2.8 121 3.3 120 3.3 119 3.7 118 3.8 117 3.7 116 3.1 115 3.1 114 3.2 113 3.2 112 3.9 111 3.7 110 3.3 109 3.7 108 4.1 107 4.3 106 3.4 105 3.9 104 4.2 103 3.8 102 3.7 101 4.1 100 4.8 99 4.8 98 4.2 97 4.4 96 3.9 95 4.6 94 4.9 93 4.1 92 3.9 91 4.4 90 4.1 89 4.7 88 5.1 87 4.8 86 4.6 85 5 84 4 83 4.5 82 4.5 81 4.9 80 5 79 4.7 78 4.2 77 5 76 4 75 4.9 74 4.8 73 4.8 72 4.3 71 4.7 70 4.2 69 4.9 68 3.9 67 5.4 66 4.1 65 4.1 64 5.3 63 4.3 62 5.2 61 4.2 60 5.5 59 4.5 58 4.4 57 4.4 56 4 55 5.4 54 4.6 53 4 52 5.4 51 4.7 50 5.1 49 4.2 48 5.3 47 5.2 46 4.6 45 4.9 44 3.9 43 4.5 42 3.9 41 4.1 40 5.1 39 4.4 38 4.4 37 3.9 36 4.1 35 5.2 34 4 33 4.6 32 5.1 31 5.2 30 4 29 4.5 28 4.3 27 4.7 26 5 25 4.1 24 4.2 23 4.1 22 4.3 21 3.7 20 4.2 19 3.8 18 4.8 17 4.3 16 4.9 15 4 14 4.7 13 4.6 12 4.2 11 4.2 10 4.7 9 5 8 4.5 7 4.6 6 4.7 5 4.2 4 4.4 3 4.1 2 5 1 4.4 0 3.7Z" fill="#211505" transform="translate(0 38.0)"/><use href="#w74385174" transform="translate(0 40.0)"/><rect x="0" y="37.5" width="238.7" height="1" fill="#211505"/><rect x="0" y="77.5" width="238.7" height="1" fill="#211505"/><text x="4" y="14" font-size="10.6" fill="rgba(0,0,0,0.68)" font-weight="normal" letter-spacing="0.05" stroke="rgba(0,0,0,0.68)" stroke-width="0.2" font-family="Liberation Sans">Strega &gt; µC</text></svg>
<svg style="left:591.2px;top:950px" width="253.1" height="98" viewBox="0 0 253.1 98"><rect x="0" y="0" width="253.1" height="98" fill="#FFA529"/><path d="M253.1 18 L223.1 18 C239.6 18 244.1 98 253.1 98 Z" fill="rgba(0,0,0,0.13)"/><rect x="0" y="17" width="253.1" height="1" fill="rgba(0,0,0,0.10)"/><rect x="14.3" y="18" width="1" height="80" fill="rgba(0,0,0,0.2)"/><rect x="42.6" y="18" width="1" height="80" fill="rgba(0,0,0,0.2)"/><rect x="70.9" y="18" width="1" height="80" fill="rgba(0,0,0,0.2)"/><rect x="99.3" y="18" width="1" height="80" fill="rgba(0,0,0,0.2)"/><rect x="127.6" y="18" width="1" height="80" fill="rgba(0,0,0,0.2)"/><rect x="155.9" y="18" width="1" height="80" fill="rgba(0,0,0,0.2)"/><rect x="184.3" y="18" width="1" height="80" fill="rgba(0,0,0,0.2)"/><rect x="212.6" y="18" width="1" height="80" fill="rgba(0,0,0,0.2)"/><rect x="240.9" y="18" width="1" height="80" fill="rgba(0,0,0,0.2)"/><path id="w58304152" d="M0 -1.9 1 -2.1 2 -2.1 3 -2 4 -2.1 5 -2.1 6 -2.1 7 -1.9 8 -1.8 9 -1.9 10 -2.3 11 -1.8 12 -2 13 -2 14 -2.1 15 -2.1 16 -2.4 17 -2.4 18 -2.2 19 -1.9 20 -2.4 21 -2.4 22 -2.1 23 -2.3 24 -2.4 25 -2.5 26 -2 27 -1.9 28 -2.4 29 -2 30 -2 31 -1.8 32 -2.3 33 -2 34 -1.9 35 -2.2 36 -1.9 37 -2.4 38 -1.9 39 -2.5 40 -1.9 41 -1.9 42 -2.2 43 -2.4 44 -2.2 45 -2.3 46 -2 47 -2.5 48 -2 49 -2.1 50 -2.4 51 -2.1 52 -1.9 53 -2.4 54 -1.9 55 -2.2 56 -2.3 57 -3.3 58 -2 59 -2.5 60 -2.5 61 -2.3 62 -2.1 63 -2.2 64 -2.1 65 -2.2 66 -2.2 67 -2.4 68 -1.9 69 -2.6 70 -3.4 71 -4.2 72 -2.3 73 -1.9 74 -2 75 -1.9 76 -2 77 -2.4 78 -2 79 -2.4 80 -2.4 81 -2.2 82 -2.4 83 -2.3 84 -2.3 85 -2.3 86 -2.3 87 -2 88 -2.6 89 -2 90 -2 91 -2 92 -2.5 93 -2.6 94 -2.6 95 -2 96 -2.2 97 -2.4 98 -2 99 -2.2 100 -2.3 101 -2.1 102 -2.1 103 -2.2 104 -2 105 -2.5 106 -2.2 107 -2 108 -2.2 109 -2.1 110 -2.3 111 -1.9 112 -2.1 113 -1.9 114 -2.3 115 -2.2 116 -2.4 117 -2.3 118 -2.2 119 -2.3 120 -2.1 121 -2.3 122 -2.2 123 -2.2 124 -2.2 125 -1.9 126 -2 127 -2.3 128 -2.1 129 -3.3 130 -2.5 131 -2.2 132 -2.5 133 -2.2 134 -1.9 135 -2.3 136 -2.5 137 -2.3 138 -2.2 139 -2.6 140 -2.3 141 -2.7 142 -2.5 143 -2.1 144 -2.5 145 -2.5 146 -2.5 147 -2.6 148 -2.4 149 -2.6 150 -2.5 151 -2.7 152 -2.7 153 -2.6 154 -2.5 155 -2.3 156 -2.2 157 -2.5 158 -2.5 159 -2.4 160 -2.6 161 -2.9 162 -2.9 163 -2.9 164 -2.3 165 -2.4 166 -2.9 167 -2.9 168 -2.4 169 -2.9 170 -2.3 171 -2.6 172 -2.8 173 -2.6 174 -3 175 -2.5 176 -2.4 177 -2.7 178 -2.5 179 -3 180 -3 181 -2.5 182 -2.6 183 -2.6 184 -3.5 185 -2.9 186 -2.9 187 -3 188 -3.3 189 -3 190 -3.7 191 -3.5 192 -3.4 193 -4.2 194 -3.8 195 -4 196 -3.6 197 -3.8 198 -4.5 199 -3.6 200 -4.7 201 -3.8 202 -3.5 203 -4.1 204 -4.8 205 -4.4 206 -4.1 207 -3.5 208 -4.1 209 -4.6 210 -4.3 211 -4.3 212 -3.2 213 -3.3 214 -3.4 215 -3.9 216 -3.6 217 -3.2 218 -2.9 219 -3.1 220 -3.4 221 -3.3 222 -3.6 223 -3.2 224 -3.2 225 -2.4 226 -2.6 227 -2.3 228 -2.3 229 -2.6 230 -2.3 231 -2.3 232 -2.3 233 -1.8 234 -1.7 235 -1.4 236 -1.6 237 -1.5 238 -1.5 239 -1.1 240 -1 241 -1.1 242 -0.7 243 -0.7 244 -0.6 245 -0.6 246 -0.5 247 -0.5 248 -0.6 249 -0.5 250 -0.5 251 -0.5 252 -0.6 253 -0.5 253.1 -0.5 L253.1 0.5 253 0.5 252 0.6 251 0.5 250 0.5 249 0.5 248 0.6 247 0.5 246 0.5 245 0.6 244 0.6 243 0.7 242 0.7 241 1.1 240 1 239 1.1 238 1.5 237 1.5 236 1.6 235 1.4 234 1.7 233 1.8 232 2.3 231 2.3 230 2.3 229 2.6 228 2.3 227 2.3 226 2.6 225 2.4 224 3.2 223 3.2 222 3.6 221 3.3 220 3.4 219 3.1 218 2.9 217 3.2 216 3.6 215 3.9 214 3.4 213 3.3 212 3.2 211 4.3 210 4.3 209 4.6 208 4.1 207 3.5 206 4.1 205 4.4 204 4.8 203 4.1 202 3.5 201 3.8 200 4.7 199 3.6 198 4.5 197 3.8 196 3.6 195 4 194 3.8 193 4.2 192 3.4 191 3.5 190 3.7 189 3 188 3.3 187 3 186 2.9 185 2.9 184 3.5 183 2.6 182 2.6 181 2.5 180 3 179 3 178 2.5 177 2.7 176 2.4 175 2.5 174 3 173 2.6 172 2.8 171 2.6 170 2.3 169 2.9 168 2.4 167 2.9 166 2.9 165 2.4 164 2.3 163 2.9 162 2.9 161 2.9 160 2.6 159 2.4 158 2.5 157 2.5 156 2.2 155 2.3 154 2.5 153 2.6 152 2.7 151 2.7 150 2.5 149 2.6 148 2.4 147 2.6 146 2.5 145 2.5 144 2.5 143 2.1 142 2.5 141 2.7 140 2.3 139 2.6 138 2.2 137 2.3 136 2.5 135 2.3 134 1.9 133 2.2 132 2.5 131 2.2 130 2.5 129 3.3 128 2.1 127 2.3 126 2 125 1.9 124 2.2 123 2.2 122 2.2 121 2.3 120 2.1 119 2.3 118 2.2 117 2.3 116 2.4 115 2.2 114 2.3 113 1.9 112 2.1 111 1.9 110 2.3 109 2.1 108 2.2 107 2 106 2.2 105 2.5 104 2 103 2.2 102 2.1 101 2.1 100 2.3 99 2.2 98 2 97 2.4 96 2.2 95 2 94 2.6 93 2.6 92 2.5 91 2 90 2 89 2 88 2.6 87 2 86 2.3 85 2.3 84 2.3 83 2.3 82 2.4 81 2.2 80 2.4 79 2.4 78 2 77 2.4 76 2 75 1.9 74 2 73 1.9 72 2.3 71 4.2 70 3.4 69 2.6 68 1.9 67 2.4 66 2.2 65 2.2 64 2.1 63 2.2 62 2.1 61 2.3 60 2.5 59 2.5 58 2 57 3.3 56 2.3 55 2.2 54 1.9 53 2.4 52 1.9 51 2.1 50 2.4 49 2.1 48 2 47 2.5 46 2 45 2.3 44 2.2 43 2.4 42 2.2 41 1.9 40 1.9 39 2.5 38 1.9 37 2.4 36 1.9 35 2.2 34 1.9 33 2 32 2.3 31 1.8 30 2 29 2 28 2.4 27 1.9 26 2 25 2.5 24 2.4 23 2.3 22 2.1 21 2.4 20 2.4 19 1.9 18 2.2 17 2.4 16 2.4 15 2.1 14 2.1 13 2 12 2 11 1.8 10 2.3 9 1.9 8 1.8 7 1.9 6 2.1 5 2.1 4 2.1 3 2 2 2.1 1 2.1 0 1.9Z" fill="#211505" transform="translate(0 38.0)"/><use href="#w58304152" transform="translate(0 40.0)"/><rect x="0" y="37.5" width="253.1" height="1" fill="#211505"/><rect x="0" y="77.5" width="253.1" height="1" fill="#211505"/><text x="4" y="14" font-size="10.6" fill="rgba(0,0,0,0.68)" font-weight="normal" letter-spacing="0.05" stroke="rgba(0,0,0,0.68)" stroke-width="0.2" font-family="Liberation Sans">Strega &gt; µC</text></svg>
<svg style="left:422.3px;top:1050px" width="247.9" height="97" viewBox="0 0 247.9 97"><rect x="0" y="0" width="247.9" height="97" fill="#19E9FF"/><rect x="0" y="17" width="247.9" height="1" fill="rgba(0,0,0,0.10)"/><rect x="13.2" y="18" width="1" height="79" fill="rgba(0,0,0,0.2)"/><rect x="41.5" y="18" width="1" height="79" fill="rgba(0,0,0,0.2)"/><rect x="69.9" y="18" width="1" height="79" fill="rgba(0,0,0,0.2)"/><rect x="98.2" y="18" width="1" height="79" fill="rgba(0,0,0,0.2)"/><rect x="126.5" y="18" width="1" height="79" fill="rgba(0,0,0,0.2)"/><rect x="154.9" y="18" width="1" height="79" fill="rgba(0,0,0,0.2)"/><rect x="183.2" y="18" width="1" height="79" fill="rgba(0,0,0,0.2)"/><rect x="211.5" y="18" width="1" height="79" fill="rgba(0,0,0,0.2)"/><rect x="239.9" y="18" width="1" height="79" fill="rgba(0,0,0,0.2)"/><path id="w32331594" d="M0 -0.5 1 -0.5 2 -0.5 3 -0.5 4 -0.6 5 -0.5 6 -0.5 7 -0.5 8 -0.5 9 -0.6 10 -0.5 11 -0.5 12 -0.5 13 -0.5 14 -0.5 15 -0.5 16 -0.5 17 -0.5 18 -0.6 19 -0.6 20 -0.5 21 -0.5 22 -0.5 23 -0.6 24 -0.5 25 -0.5 26 -0.5 27 -0.5 28 -0.5 29 -0.6 30 -0.6 31 -0.7 32 -0.8 33 -1.2 34 -1.4 35 -1.7 36 -1.4 37 -1.4 38 -1.3 39 -1 40 -0.8 41 -0.8 42 -1.1 43 -1.2 44 -0.7 45 -0.7 46 -0.7 47 -0.7 48 -1 49 -0.8 50 -1.2 51 -0.6 52 -0.9 53 -0.7 54 -1.1 55 -0.8 56 -0.7 57 -0.9 58 -1.1 59 -0.6 60 -0.7 61 -1.1 62 -0.9 63 -0.9 64 -1.3 65 -1.3 66 -1.8 67 -1.8 68 -2.3 69 -1.8 70 -1.6 71 -1.3 72 -1 73 -0.8 74 -0.8 75 -0.9 76 -1.1 77 -0.9 78 -0.9 79 -0.8 80 -1.1 81 -1.3 82 -1.6 83 -1.4 84 -1.6 85 -1.3 86 -0.9 87 -1 88 -0.9 89 -1 90 -1.2 91 -1.2 92 -1 93 -1.5 94 -1.9 95 -2.1 96 -2.4 97 -2 98 -1.8 99 -1.1 100 -0.7 101 -1 102 -0.8 103 -1.1 104 -1.8 105 -1.9 106 -2.4 107 -2.9 108 -2.6 109 -2.6 110 -2.1 111 -1.6 112 -1.4 113 -1 114 -0.8 115 -1.1 116 -0.9 117 -0.9 118 -0.6 119 -0.8 120 -1.2 121 -1.5 122 -1.9 123 -1.9 124 -1.8 125 -1.2 126 -1 127 -1 128 -1.1 129 -0.7 130 -1 131 -1 132 -1.6 133 -2.1 134 -2.1 135 -2.9 136 -2.6 137 -2.2 138 -2.1 139 -2.1 140 -1.4 141 -1.2 142 -0.7 143 -1.1 144 -1.1 145 -0.9 146 -0.8 147 -1.1 148 -1 149 -0.8 150 -1.1 151 -1 152 -1.2 153 -1.3 154 -1.4 155 -1.1 156 -1.2 157 -1.1 158 -0.9 159 -0.9 160 -0.9 161 -0.9 162 -0.7 163 -1 164 -0.8 165 -0.7 166 -0.8 167 -0.8 168 -0.6 169 -0.8 170 -0.8 171 -0.7 172 -0.9 173 -0.6 174 -1 175 -1.1 176 -1.6 177 -1.3 178 -1.4 179 -1.3 180 -1.1 181 -1.1 182 -0.8 183 -0.7 184 -0.8 185 -0.9 186 -1.3 187 -1.7 188 -1.8 189 -1.8 190 -1.8 191 -1.8 192 -1.8 193 -1.1 194 -1 195 -1 196 -1.2 197 -1.6 198 -2 199 -2.1 200 -2.1 201 -1.9 202 -1.5 203 -1.4 204 -1 205 -0.8 206 -1 207 -0.8 208 -1.1 209 -0.7 210 -1 211 -1.3 212 -1.5 213 -1.4 214 -1.4 215 -1.7 216 -1.6 217 -1.2 218 -0.9 219 -0.7 220 -1.1 221 -1.2 222 -0.6 223 -0.9 224 -1.1 225 -1.2 226 -0.8 227 -0.9 228 -0.8 229 -0.6 230 -0.6 231 -0.9 232 -0.7 233 -0.7 234 -0.5 235 -0.5 236 -0.5 237 -0.6 238 -0.5 239 -0.5 240 -0.5 241 -0.5 242 -0.5 243 -0.5 244 -0.5 245 -0.5 246 -0.5 247 -0.6 247.9 -0.6 L247.9 0.6 247 0.6 246 0.5 245 0.5 244 0.5 243 0.5 242 0.5 241 0.5 240 0.5 239 0.5 238 0.5 237 0.6 236 0.5 235 0.5 234 0.5 233 0.7 232 0.7 231 0.9 230 0.6 229 0.6 228 0.8 227 0.9 226 0.8 225 1.2 224 1.1 223 0.9 222 0.6 221 1.2 220 1.1 219 0.7 218 0.9 217 1.2 216 1.6 215 1.7 214 1.4 213 1.4 212 1.5 211 1.3 210 1 209 0.7 208 1.1 207 0.8 206 1 205 0.8 204 1 203 1.4 202 1.5 201 1.9 200 2.1 199 2.1 198 2 197 1.6 196 1.2 195 1 194 1 193 1.1 192 1.8 191 1.8 190 1.8 189 1.8 188 1.8 187 1.7 186 1.3 185 0.9 184 0.8 183 0.7 182 0.8 181 1.1 180 1.1 179 1.3 178 1.4 177 1.3 176 1.6 175 1.1 174 1 173 0.6 172 0.9 171 0.7 170 0.8 169 0.8 168 0.6 167 0.8 166 0.8 165 0.7 164 0.8 163 1 162 0.7 161 0.9 160 0.9 159 0.9 158 0.9 157 1.1 156 1.2 155 1.1 154 1.4 153 1.3 152 1.2 151 1 150 1.1 149 0.8 148 1 147 1.1 146 0.8 145 0.9 144 1.1 143 1.1 142 0.7 141 1.2 140 1.4 139 2.1 138 2.1 137 2.2 136 2.6 135 2.9 134 2.1 133 2.1 132 1.6 131 1 130 1 129 0.7 128 1.1 127 1 126 1 125 1.2 124 1.8 123 1.9 122 1.9 121 1.5 120 1.2 119 0.8 118 0.6 117 0.9 116 0.9 115 1.1 114 0.8 113 1 112 1.4 111 1.6 110 2.1 109 2.6 108 2.6 107 2.9 106 2.4 105 1.9 104 1.8 103 1.1 102 0.8 101 1 100 0.7 99 1.1 98 1.8 97 2 96 2.4 95 2.1 94 1.9 93 1.5 92 1 91 1.2 90 1.2 89 1 88 0.9 87 1 86 0.9 85 1.3 84 1.6 83 1.4 82 1.6 81 1.3 80 1.1 79 0.8 78 0.9 77 0.9 76 1.1 75 0.9 74 0.8 73 0.8 72 1 71 1.3 70 1.6 69 1.8 68 2.3 67 1.8 66 1.8 65 1.3 64 1.3 63 0.9 62 0.9 61 1.1 60 0.7 59 0.6 58 1.1 57 0.9 56 0.7 55 0.8 54 1.1 53 0.7 52 0.9 51 0.6 50 1.2 49 0.8 48 1 47 0.7 46 0.7 45 0.7 44 0.7 43 1.2 42 1.1 41 0.8 40 0.8 39 1 38 1.3 37 1.4 36 1.4 35 1.7 34 1.4 33 1.2 32 0.8 31 0.7 30 0.6 29 0.6 28 0.5 27 0.5 26 0.5 25 0.5 24 0.5 23 0.6 22 0.5 21 0.5 20 0.5 19 0.6 18 0.6 17 0.5 16 0.5 15 0.5 14 0.5 13 0.5 12 0.5 11 0.5 10 0.5 9 0.6 8 0.5 7 0.5 6 0.5 5 0.5 4 0.6 3 0.5 2 0.5 1 0.5 0 0.5Z" fill="#031e21" transform="translate(0 37.8)"/><use href="#w32331594" transform="translate(0 39.5)"/><rect x="0" y="37.2" width="247.9" height="1" fill="#031e21"/><rect x="0" y="76.8" width="247.9" height="1" fill="#031e21"/><text x="4" y="14" font-size="10.6" fill="rgba(0,0,0,0.68)" font-weight="normal" letter-spacing="0.05" stroke="rgba(0,0,0,0.68)" stroke-width="0.2" font-family="Liberation Sans">Strega II &gt; µC ARP|C 2</text></svg>
<svg style="left:39.8px;top:1149px" width="548.0" height="98" viewBox="0 0 548.0 98"><rect x="0" y="0" width="548.0" height="98" fill="#5480E4"/><path d="M0 18 L40.0 18 C22.0 18 14.0 98 0 98 Z" fill="rgba(0,0,0,0.13)"/><path d="M548.0 18 L540.0 18 C544.4 18 545.6 98 548.0 98 Z" fill="rgba(0,0,0,0.13)"/><rect x="0" y="17" width="548.0" height="1" fill="rgba(0,0,0,0.10)"/><rect x="27.4" y="18" width="1" height="80" fill="rgba(0,0,0,0.2)"/><rect x="55.7" y="18" width="1" height="80" fill="rgba(0,0,0,0.2)"/><rect x="84.0" y="18" width="1" height="80" fill="rgba(0,0,0,0.2)"/><rect x="112.4" y="18" width="1" height="80" fill="rgba(0,0,0,0.2)"/><rect x="140.7" y="18" width="1" height="80" fill="rgba(0,0,0,0.2)"/><rect x="169.0" y="18" width="1" height="80" fill="rgba(0,0,0,0.2)"/><rect x="197.4" y="18" width="1" height="80" fill="rgba(0,0,0,0.2)"/><rect x="225.7" y="18" width="1" height="80" fill="rgba(0,0,0,0.2)"/><rect x="254.0" y="18" width="1" height="80" fill="rgba(0,0,0,0.2)"/><rect x="282.4" y="18" width="1" height="80" fill="rgba(0,0,0,0.2)"/><rect x="310.7" y="18" width="1" height="80" fill="rgba(0,0,0,0.2)"/><rect x="339.0" y="18" width="1" height="80" fill="rgba(0,0,0,0.2)"/><rect x="367.4" y="18" width="1" height="80" fill="rgba(0,0,0,0.2)"/><rect x="395.7" y="18" width="1" height="80" fill="rgba(0,0,0,0.2)"/><rect x="424.0" y="18" width="1" height="80" fill="rgba(0,0,0,0.2)"/><rect x="452.4" y="18" width="1" height="80" fill="rgba(0,0,0,0.2)"/><rect x="480.7" y="18" width="1" height="80" fill="rgba(0,0,0,0.2)"/><rect x="509.0" y="18" width="1" height="80" fill="rgba(0,0,0,0.2)"/><rect x="537.4" y="18" width="1" height="80" fill="rgba(0,0,0,0.2)"/><path d="M0 -0.5 1 -0.5 2 -0.6 3 -0.5 4 -0.6 5 -0.6 6 -0.6 7 -0.6 8 -0.7 9 -0.6 10 -0.6 11 -0.6 12 -0.6 13 -0.8 14 -0.6 15 -0.7 16 -0.8 17 -0.6 18 -0.8 19 -0.7 20 -0.8 21 -0.7 22 -0.8 23 -0.9 24 -0.8 25 -0.9 26 -0.9 27 -0.9 28 -0.9 29 -0.8 30 -0.8 31 -0.8 32 -0.8 33 -1 34 -1 35 -0.8 36 -0.8 37 -0.7 38 -1 39 -0.7 40 -0.8 41 -0.8 42 -0.8 43 -1 44 -0.8 45 -0.9 46 -1.9 47 -2.8 48 -3.4 49 -3.3 50 -2.4 51 -2.4 52 -2.6 53 -2.2 54 -2.5 55 -2.4 56 -2.3 57 -1 58 -1.7 59 -2.4 60 -2.8 61 -2.9 62 -3.4 63 -3.3 64 -2.4 65 -1.6 66 -2.7 67 -2.5 68 -3.3 69 -3.2 70 -2.6 71 -1.9 72 -1.4 73 -2.2 74 -3.5 75 -3.9 76 -2.5 77 -2.2 78 -1.8 79 -1.6 80 -1.8 81 -2.2 82 -3.6 83 -3.8 84 -2.8 85 -2.5 86 -1.4 87 -1 88 -0.8 89 -0.9 90 -1.7 91 -2.2 92 -2.9 93 -3.4 94 -3.5 95 -3.3 96 -2.8 97 -2 98 -2.8 99 -3.4 100 -2.7 101 -1.1 102 -1 103 -0.9 104 -0.9 105 -1.8 106 -2 107 -2.4 108 -2.1 109 -2.4 110 -2.6 111 -3.5 112 -3 113 -2.1 114 -2.1 115 -2.2 116 -1.3 117 -0.9 118 -1 119 -1 120 -0.9 121 -1 122 -0.8 123 -0.8 124 -0.8 125 -0.9 126 -0.7 127 -1.8 128 -2.6 129 -3.4 130 -3.6 131 -3 132 -3.5 133 -3.7 134 -3.7 135 -3.6 136 -2.3 137 -1.1 138 -1.1 139 -2.1 140 -3.5 141 -3.4 142 -3.8 143 -3.8 144 -3.7 145 -2.6 146 -3.6 147 -2.8 148 -1.8 149 -1.4 150 -0.9 151 -0.9 152 -0.9 153 -0.8 154 -0.8 155 -1 156 -0.9 157 -0.8 158 -0.9 159 -1.5 160 -1.8 161 -3 162 -3.5 163 -2.6 164 -2.5 165 -2.1 166 -1.5 167 -0.9 168 -1 169 -1 170 -1 171 -0.8 172 -2.7 173 -7.6 174 -4.7 175 -4.8 176 -2 177 -0.8 178 -1 179 -0.7 180 -1 181 -0.9 182 -0.9 183 -0.8 184 -1 185 -0.8 186 -0.9 187 -1 188 -1 189 -0.7 190 -0.9 191 -1 192 -0.8 193 -0.8 194 -0.9 195 -1 196 -0.8 197 -0.9 198 -1.5 199 -2 200 -2.1 201 -2.5 202 -3.7 203 -3.7 204 -2.7 205 -2.5 206 -3.2 207 -3.3 208 -3.1 209 -2 210 -1.3 211 -0.8 212 -1.1 213 -1.9 214 -2.6 215 -2.3 216 -1.8 217 -2.7 218 -2.9 219 -3.5 220 -3.1 221 -3.1 222 -2 223 -3.1 224 -1.9 225 -2.5 226 -3.5 227 -3.5 228 -3.7 229 -3 230 -1.7 231 -2.8 232 -2.1 233 -1.3 234 -1 235 -1 236 -1 237 -0.9 238 -0.8 239 -0.8 240 -0.8 241 -0.8 242 -0.8 243 -0.7 244 -0.8 245 -0.7 246 -0.8 247 -0.8 248 -0.8 249 -0.6 250 -0.7 251 -0.8 252 -0.6 253 -0.7 254 -0.6 255 -0.7 256 -0.7 257 -0.7 258 -0.6 259 -0.6 260 -0.5 261 -0.7 262 -0.6 263 -0.5 264 -0.7 265 -0.6 266 -0.6 267 -0.7 268 -0.6 269 -0.7 270 -0.6 271 -0.6 272 -0.6 273 -0.7 274 -0.6 275 -0.6 276 -0.5 277 -0.7 278 -0.6 279 -0.7 280 -0.6 281 -0.5 282 -0.6 283 -0.7 284 -0.6 285 -0.7 286 -0.6 287 -0.6 288 -0.7 289 -0.6 290 -0.7 291 -0.6 292 -0.7 293 -0.7 294 -0.6 295 -0.6 296 -0.6 297 -0.5 298 -0.6 299 -0.7 300 -0.7 301 -1.5 302 -2.6 303 -3.4 304 -3.4 305 -3.2 306 -4.9 307 -5.1 308 -4.7 309 -4.6 310 -3.3 311 -3.4 312 -4.2 313 -4.2 314 -3.3 315 -2 316 -2 317 -2.9 318 -3.8 319 -4 320 -4.3 321 -4.5 322 -4.3 323 -3.3 324 -2 325 -3.1 326 -2.3 327 -1.4 328 -0.7 329 -0.5 330 -0.7 331 -0.7 332 -0.7 333 -0.8 334 -1.3 335 -2.5 336 -2.8 337 -2.7 338 -3.5 339 -3.8 340 -3.1 341 -3.9 342 -4.2 343 -4.5 344 -3.7 345 -2 346 -0.9 347 -0.7 348 -0.7 349 -0.6 350 -0.9 351 -1.8 352 -3.1 353 -3.2 354 -4 355 -4.8 356 -3.8 357 -2.6 358 -3.5 359 -5.4 360 -4.5 361 -4.5 362 -3.1 363 -1.3 364 -0.6 365 -0.7 366 -0.6 367 -1.4 368 -2.3 369 -4 370 -5.3 371 -4.6 372 -5.1 373 -4.6 374 -2.5 375 -3.7 376 -3.6 377 -3.9 378 -4.1 379 -3.2 380 -1.8 381 -0.8 382 -0.5 383 -0.6 384 -0.6 385 -0.6 386 -1.3 387 -2.3 388 -3.6 389 -3.5 390 -4.3 391 -2.8 392 -2.3 393 -2.8 394 -2.8 395 -2.5 396 -3.6 397 -3.4 398 -2.7 399 -1.9 400 -1.2 401 -0.7 402 -0.7 403 -0.8 404 -1.8 405 -3.7 406 -5.3 407 -5 408 -4.2 409 -4.2 410 -5 411 -4.5 412 -3.4 413 -2.9 414 -3.2 415 -3.9 416 -3.4 417 -2.3 418 -1.1 419 -0.6 420 -0.9 421 -1.9 422 -3.1 423 -5.3 424 -5.3 425 -3.7 426 -5.4 427 -4.9 428 -3 429 -2.8 430 -2.4 431 -1.8 432 -1.2 433 -0.6 434 -0.7 435 -0.6 436 -0.7 437 -0.7 438 -2.1 439 -2.9 440 -3.7 441 -4.7 442 -4.7 443 -3.9 444 -2 445 -1.5 446 -1.4 447 -2.4 448 -3.9 449 -3.5 450 -2.6 451 -1.3 452 -0.8 453 -1.3 454 -3 455 -3 456 -2.8 457 -4.2 458 -4.2 459 -4 460 -4 461 -4 462 -2.4 463 -3.1 464 -3.9 465 -2.3 466 -1.3 467 -0.6 468 -0.7 469 -0.8 470 -0.6 471 -1.1 472 -2.6 473 -3.8 474 -4.3 475 -4.2 476 -3.2 477 -3.8 478 -5.3 479 -5.3 480 -3.5 481 -2.2 482 -0.8 483 -0.7 484 -0.7 485 -1.4 486 -2.1 487 -3.3 488 -3.9 489 -3.4 490 -5.7 491 -4.8 492 -4 493 -4.6 494 -4.2 495 -3.1 496 -3.2 497 -3.8 498 -2.9 499 -1.4 500 -1.2 501 -2.2 502 -3 503 -4 504 -3.8 505 -5.3 506 -4.7 507 -3.7 508 -3.3 509 -4.6 510 -3.1 511 -3 512 -2 513 -3.3 514 -2.4 515 -1.1 516 -0.7 517 -0.6 518 -0.6 519 -1.3 520 -3.1 521 -4.4 522 -4.9 523 -3.7 524 -4.6 525 -4.7 526 -4.4 527 -4.2 528 -5.8 529 -5.1 530 -2.9 531 -2.1 532 -1 533 -0.6 534 -0.7 535 -0.7 536 -1.4 537 -2.4 538 -4.7 539 -5.8 540 -4.5 541 -4.7 542 -4.3 543 -4.8 544 -3.6 545 -2.6 546 -1.1 547 -0.7 548 -0.6 L548 0.6 547 0.7 546 1.1 545 2.6 544 3.6 543 4.8 542 4.3 541 4.7 540 4.5 539 5.8 538 4.7 537 2.4 536 1.4 535 0.7 534 0.7 533 0.6 532 1 531 2.1 530 2.9 529 5.1 528 5.8 527 4.2 526 4.4 525 4.7 524 4.6 523 3.7 522 4.9 521 4.4 520 3.1 519 1.3 518 0.6 517 0.6 516 0.7 515 1.1 514 2.4 513 3.3 512 2 511 3 510 3.1 509 4.6 508 3.3 507 3.7 506 4.7 505 5.3 504 3.8 503 4 502 3 501 2.2 500 1.2 499 1.4 498 2.9 497 3.8 496 3.2 495 3.1 494 4.2 493 4.6 492 4 491 4.8 490 5.7 489 3.4 488 3.9 487 3.3 486 2.1 485 1.4 484 0.7 483 0.7 482 0.8 481 2.2 480 3.5 479 5.3 478 5.3 477 3.8 476 3.2 475 4.2 474 4.3 473 3.8 472 2.6 471 1.1 470 0.6 469 0.8 468 0.7 467 0.6 466 1.3 465 2.3 464 3.9 463 3.1 462 2.4 461 4 460 4 459 4 458 4.2 457 4.2 456 2.8 455 3 454 3 453 1.3 452 0.8 451 1.3 450 2.6 449 3.5 448 3.9 447 2.4 446 1.4 445 1.5 444 2 443 3.9 442 4.7 441 4.7 440 3.7 439 2.9 438 2.1 437 0.7 436 0.7 435 0.6 434 0.7 433 0.6 432 1.2 431 1.8 430 2.4 429 2.8 428 3 427 4.9 426 5.4 425 3.7 424 5.3 423 5.3 422 3.1 421 1.9 420 0.9 419 0.6 418 1.1 417 2.3 416 3.4 415 3.9 414 3.2 413 2.9 412 3.4 411 4.5 410 5 409 4.2 408 4.2 407 5 406 5.3 405 3.7 404 1.8 403 0.8 402 0.7 401 0.7 400 1.2 399 1.9 398 2.7 397 3.4 396 3.6 395 2.5 394 2.8 393 2.8 392 2.3 391 2.8 390 4.3 389 3.5 388 3.6 387 2.3 386 1.3 385 0.6 384 0.6 383 0.6 382 0.5 381 0.8 380 1.8 379 3.2 378 4.1 377 3.9 376 3.6 375 3.7 374 2.5 373 4.6 372 5.1 371 4.6 370 5.3 369 4 368 2.3 367 1.4 366 0.6 365 0.7 364 0.6 363 1.3 362 3.1 361 4.5 360 4.5 359 5.4 358 3.5 357 2.6 356 3.8 355 4.8 354 4 353 3.2 352 3.1 351 1.8 350 0.9 349 0.6 348 0.7 347 0.7 346 0.9 345 2 344 3.7 343 4.5 342 4.2 341 3.9 340 3.1 339 3.8 338 3.5 337 2.7 336 2.8 335 2.5 334 1.3 333 0.8 332 0.7 331 0.7 330 0.7 329 0.5 328 0.7 327 1.4 326 2.3 325 3.1 324 2 323 3.3 322 4.3 321 4.5 320 4.3 319 4 318 3.8 317 2.9 316 2 315 2 314 3.3 313 4.2 312 4.2 311 3.4 310 3.3 309 4.6 308 4.7 307 5.1 306 4.9 305 3.2 304 3.4 303 3.4 302 2.6 301 1.5 300 0.7 299 0.7 298 0.6 297 0.5 296 0.6 295 0.6 294 0.6 293 0.7 292 0.7 291 0.6 290 0.7 289 0.6 288 0.7 287 0.6 286 0.6 285 0.7 284 0.6 283 0.7 282 0.6 281 0.5 280 0.6 279 0.7 278 0.6 277 0.7 276 0.5 275 0.6 274 0.6 273 0.7 272 0.6 271 0.6 270 0.6 269 0.7 268 0.6 267 0.7 266 0.6 265 0.6 264 0.7 263 0.5 262 0.6 261 0.7 260 0.5 259 0.6 258 0.6 257 0.7 256 0.7 255 0.7 254 0.6 253 0.7 252 0.6 251 0.8 250 0.7 249 0.6 248 0.8 247 0.8 246 0.8 245 0.7 244 0.8 243 0.7 242 0.8 241 0.8 240 0.8 239 0.8 238 0.8 237 0.9 236 1 235 1 234 1 233 1.3 232 2.1 231 2.8 230 1.7 229 3 228 3.7 227 3.5 226 3.5 225 2.5 224 1.9 223 3.1 222 2 221 3.1 220 3.1 219 3.5 218 2.9 217 2.7 216 1.8 215 2.3 214 2.6 213 1.9 212 1.1 211 0.8 210 1.3 209 2 208 3.1 207 3.3 206 3.2 205 2.5 204 2.7 203 3.7 202 3.7 201 2.5 200 2.1 199 2 198 1.5 197 0.9 196 0.8 195 1 194 0.9 193 0.8 192 0.8 191 1 190 0.9 189 0.7 188 1 187 1 186 0.9 185 0.8 184 1 183 0.8 182 0.9 181 0.9 180 1 179 0.7 178 1 177 0.8 176 2 175 4.8 174 4.7 173 7.6 172 2.7 171 0.8 170 1 169 1 168 1 167 0.9 166 1.5 165 2.1 164 2.5 163 2.6 162 3.5 161 3 160 1.8 159 1.5 158 0.9 157 0.8 156 0.9 155 1 154 0.8 153 0.8 152 0.9 151 0.9 150 0.9 149 1.4 148 1.8 147 2.8 146 3.6 145 2.6 144 3.7 143 3.8 142 3.8 141 3.4 140 3.5 139 2.1 138 1.1 137 1.1 136 2.3 135 3.6 134 3.7 133 3.7 132 3.5 131 3 130 3.6 129 3.4 128 2.6 127 1.8 126 0.7 125 0.9 124 0.8 123 0.8 122 0.8 121 1 120 0.9 119 1 118 1 117 0.9 116 1.3 115 2.2 114 2.1 113 2.1 112 3 111 3.5 110 2.6 109 2.4 108 2.1 107 2.4 106 2 105 1.8 104 0.9 103 0.9 102 1 101 1.1 100 2.7 99 3.4 98 2.8 97 2 96 2.8 95 3.3 94 3.5 93 3.4 92 2.9 91 2.2 90 1.7 89 0.9 88 0.8 87 1 86 1.4 85 2.5 84 2.8 83 3.8 82 3.6 81 2.2 80 1.8 79 1.6 78 1.8 77 2.2 76 2.5 75 3.9 74 3.5 73 2.2 72 1.4 71 1.9 70 2.6 69 3.2 68 3.3 67 2.5 66 2.7 65 1.6 64 2.4 63 3.3 62 3.4 61 2.9 60 2.8 59 2.4 58 1.7 57 1 56 2.3 55 2.4 54 2.5 53 2.2 52 2.6 51 2.4 50 2.4 49 3.3 48 3.4 47 2.8 46 1.9 45 0.9 44 0.8 43 1 42 0.8 41 0.8 40 0.8 39 0.7 38 1 37 0.7 36 0.8 35 0.8 34 1 33 1 32 0.8 31 0.8 30 0.8 29 0.8 28 0.9 27 0.9 26 0.9 25 0.9 24 0.8 23 0.9 22 0.8 21 0.7 20 0.8 19 0.7 18 0.8 17 0.6 16 0.8 15 0.7 14 0.6 13 0.8 12 0.6 11 0.6 10 0.6 9 0.6 8 0.7 7 0.6 6 0.6 5 0.6 4 0.6 3 0.5 2 0.6 1 0.5 0 0.5Z" fill="#0b111e" transform="translate(0 38.0)"/><path d="M0 -0.5 1 -0.5 2 -0.5 3 -0.6 4 -0.6 5 -0.7 6 -0.6 7 -0.7 8 -0.6 9 -0.6 10 -0.7 11 -0.7 12 -0.7 13 -0.7 14 -0.6 15 -0.8 16 -0.7 17 -0.7 18 -0.6 19 -0.8 20 -0.8 21 -0.7 22 -0.7 23 -0.8 24 -0.9 25 -0.9 26 -0.9 27 -0.9 28 -0.9 29 -0.7 30 -0.8 31 -0.7 32 -1 33 -0.9 34 -0.8 35 -0.8 36 -0.8 37 -0.9 38 -0.9 39 -0.7 40 -0.9 41 -0.8 42 -0.8 43 -1 44 -1.9 45 -2.9 46 -3.8 47 -3 48 -3.1 49 -2.2 50 -2.1 51 -1.8 52 -1.7 53 -2 54 -3.8 55 -3.2 56 -2.3 57 -1.4 58 -1.9 59 -2.8 60 -2.9 61 -2.7 62 -1.9 63 -1.9 64 -2.8 65 -2.7 66 -2.7 67 -2.9 68 -3.8 69 -4.2 70 -3.1 71 -2.1 72 -1.1 73 -0.9 74 -0.9 75 -1 76 -2.4 77 -2.5 78 -4.2 79 -3.3 80 -4.4 81 -4 82 -2.5 83 -1.4 84 -0.9 85 -0.8 86 -1 87 -0.8 88 -0.8 89 -1.1 90 -1.9 91 -2.5 92 -3 93 -2.8 94 -2.8 95 -2.7 96 -2.9 97 -2.9 98 -2.6 99 -2 100 -2.9 101 -3.2 102 -2.7 103 -1.7 104 -1.2 105 -1 106 -0.7 107 -1.6 108 -2.6 109 -2.1 110 -2.3 111 -3.2 112 -4.2 113 -3 114 -2.1 115 -3.2 116 -2.4 117 -1.9 118 -1.1 119 -0.9 120 -0.8 121 -0.8 122 -0.8 123 -0.8 124 -1 125 -0.7 126 -0.8 127 -2.1 128 -3.7 129 -4 130 -3.1 131 -3.1 132 -3.6 133 -2.8 134 -2.3 135 -1.3 136 -1.3 137 -2.2 138 -3 139 -3.5 140 -2.8 141 -3.1 142 -3.1 143 -2.7 144 -2.2 145 -2.8 146 -3.7 147 -3.2 148 -4.1 149 -3 150 -2.5 151 -1.6 152 -0.8 153 -1 154 -0.8 155 -1 156 -2 157 -2.6 158 -2.9 159 -3.2 160 -2.1 161 -1.8 162 -3.2 163 -3 164 -3.4 165 -4 166 -3.3 167 -2.1 168 -2 169 -2.2 170 -2.3 171 -3.5 172 -4.1 173 -2.8 174 -1.8 175 -1.9 176 -2.4 177 -2.5 178 -1.8 179 -1 180 -1 181 -0.8 182 -0.8 183 -0.9 184 -1 185 -0.8 186 -0.9 187 -0.8 188 -0.8 189 -0.9 190 -0.7 191 -0.8 192 -0.8 193 -0.8 194 -0.8 195 -0.9 196 -0.9 197 -1 198 -1 199 -2.3 200 -2.9 201 -2.4 202 -3.6 203 -3.1 204 -3.3 205 -3.3 206 -2.7 207 -2 208 -3.3 209 -3.9 210 -3.7 211 -2.9 212 -2 213 -2.8 214 -2.7 215 -2.8 216 -2.8 217 -2.4 218 -1.1 219 -1.7 220 -2 221 -2.8 222 -3.1 223 -2.8 224 -3.1 225 -3.8 226 -2.5 227 -1.5 228 -1.9 229 -3 230 -2.5 231 -3.1 232 -2.4 233 -1.6 234 -0.8 235 -0.8 236 -0.8 237 -0.8 238 -0.8 239 -0.9 240 -0.9 241 -0.9 242 -0.8 243 -0.8 244 -0.9 245 -0.7 246 -0.7 247 -0.8 248 -0.8 249 -0.8 250 -0.6 251 -0.6 252 -0.7 253 -0.8 254 -0.8 255 -0.7 256 -0.6 257 -0.7 258 -0.7 259 -0.6 260 -0.6 261 -0.5 262 -0.6 263 -0.6 264 -0.7 265 -0.6 266 -0.7 267 -0.5 268 -0.6 269 -0.7 270 -0.7 271 -0.6 272 -0.6 273 -0.6 274 -0.6 275 -0.6 276 -0.5 277 -0.6 278 -0.6 279 -0.6 280 -0.6 281 -0.7 282 -0.7 283 -0.5 284 -0.6 285 -0.6 286 -0.6 287 -0.6 288 -0.7 289 -0.6 290 -0.6 291 -0.6 292 -0.6 293 -0.7 294 -0.7 295 -0.6 296 -0.7 297 -0.7 298 -0.6 299 -0.7 300 -0.5 301 -0.6 302 -0.7 303 -1.8 304 -3.6 305 -5.1 306 -4.1 307 -4.3 308 -4.4 309 -4.1 310 -3.6 311 -3.1 312 -2.9 313 -3.8 314 -3.2 315 -2.7 316 -2 317 -2.3 318 -3.2 319 -4.3 320 -2.7 321 -3.1 322 -3.6 323 -5.2 324 -4.9 325 -3.2 326 -5.1 327 -4.7 328 -3.7 329 -2.5 330 -0.9 331 -0.6 332 -0.6 333 -1.3 334 -2.4 335 -3.3 336 -4 337 -4.7 338 -4.2 339 -2.4 340 -2.6 341 -3.1 342 -4.5 343 -4.5 344 -3.9 345 -4.8 346 -3.8 347 -2.8 348 -1.8 349 -1.2 350 -2.7 351 -3.9 352 -4.2 353 -4.2 354 -5 355 -4.9 356 -3.4 357 -3.4 358 -2.5 359 -3.8 360 -3.9 361 -5 362 -3.8 363 -2.8 364 -1.8 365 -0.9 366 -0.6 367 -1.1 368 -1.9 369 -2.4 370 -3.6 371 -4.4 372 -4.2 373 -3.9 374 -3 375 -3.8 376 -5.1 377 -3.5 378 -4.6 379 -4.2 380 -3.8 381 -2.9 382 -1.3 383 -0.7 384 -0.7 385 -0.7 386 -1.3 387 -2.8 388 -4.1 389 -3.4 390 -3.4 391 -4 392 -3.8 393 -4.1 394 -2.9 395 -3.3 396 -5 397 -5.2 398 -3.8 399 -2.3 400 -0.9 401 -0.7 402 -0.6 403 -2 404 -3.3 405 -5.1 406 -5.1 407 -4.5 408 -4.5 409 -2.5 410 -3.8 411 -4.3 412 -3.2 413 -2.6 414 -2.9 415 -2.5 416 -0.9 417 -0.7 418 -0.6 419 -0.7 420 -0.6 421 -0.8 422 -1.8 423 -2.8 424 -3.7 425 -3.2 426 -3.6 427 -5.2 428 -3.6 429 -3.4 430 -4.4 431 -5 432 -4.1 433 -1.7 434 -0.7 435 -0.6 436 -0.6 437 -0.8 438 -1 439 -2.2 440 -3.3 441 -4.3 442 -5 443 -3.4 444 -2.9 445 -3.5 446 -5.1 447 -5 448 -4.7 449 -4.9 450 -4.5 451 -2.4 452 -0.9 453 -1.1 454 -1.8 455 -3.5 456 -2.8 457 -2.9 458 -2.4 459 -4.3 460 -5.5 461 -4.1 462 -4.2 463 -3.8 464 -4.1 465 -4 466 -3.8 467 -2.3 468 -1.3 469 -2.2 470 -3.6 471 -4.8 472 -4.2 473 -5.1 474 -3.1 475 -2.7 476 -2.9 477 -3.7 478 -3.1 479 -2.1 480 -1.6 481 -0.9 482 -0.7 483 -0.7 484 -0.9 485 -1.4 486 -2.2 487 -3.7 488 -4.5 489 -4.3 490 -4 491 -4.7 492 -4.6 493 -4.2 494 -4.1 495 -4.9 496 -3.2 497 -2.5 498 -1.3 499 -0.7 500 -0.6 501 -0.6 502 -1.1 503 -2.8 504 -4.6 505 -4.9 506 -3.5 507 -4.2 508 -3.8 509 -3 510 -3 511 -3.6 512 -3.4 513 -2.7 514 -1.8 515 -0.8 516 -0.7 517 -0.7 518 -0.6 519 -0.6 520 -0.9 521 -1.6 522 -2.3 523 -3.7 524 -3.8 525 -3.3 526 -2 527 -2.6 528 -3.9 529 -5.2 530 -5.6 531 -3.2 532 -2.1 533 -1.1 534 -0.6 535 -1 536 -2.1 537 -3.3 538 -4.3 539 -3.4 540 -2.6 541 -3 542 -4.2 543 -4 544 -5.7 545 -3.6 546 -2.8 547 -2.1 548 -1.9 L548 1.9 547 2.1 546 2.8 545 3.6 544 5.7 543 4 542 4.2 541 3 540 2.6 539 3.4 538 4.3 537 3.3 536 2.1 535 1 534 0.6 533 1.1 532 2.1 531 3.2 530 5.6 529 5.2 528 3.9 527 2.6 526 2 525 3.3 524 3.8 523 3.7 522 2.3 521 1.6 520 0.9 519 0.6 518 0.6 517 0.7 516 0.7 515 0.8 514 1.8 513 2.7 512 3.4 511 3.6 510 3 509 3 508 3.8 507 4.2 506 3.5 505 4.9 504 4.6 503 2.8 502 1.1 501 0.6 500 0.6 499 0.7 498 1.3 497 2.5 496 3.2 495 4.9 494 4.1 493 4.2 492 4.6 491 4.7 490 4 489 4.3 488 4.5 487 3.7 486 2.2 485 1.4 484 0.9 483 0.7 482 0.7 481 0.9 480 1.6 479 2.1 478 3.1 477 3.7 476 2.9 475 2.7 474 3.1 473 5.1 472 4.2 471 4.8 470 3.6 469 2.2 468 1.3 467 2.3 466 3.8 465 4 464 4.1 463 3.8 462 4.2 461 4.1 460 5.5 459 4.3 458 2.4 457 2.9 456 2.8 455 3.5 454 1.8 453 1.1 452 0.9 451 2.4 450 4.5 449 4.9 448 4.7 447 5 446 5.1 445 3.5 444 2.9 443 3.4 442 5 441 4.3 440 3.3 439 2.2 438 1 437 0.8 436 0.6 435 0.6 434 0.7 433 1.7 432 4.1 431 5 430 4.4 429 3.4 428 3.6 427 5.2 426 3.6 425 3.2 424 3.7 423 2.8 422 1.8 421 0.8 420 0.6 419 0.7 418 0.6 417 0.7 416 0.9 415 2.5 414 2.9 413 2.6 412 3.2 411 4.3 410 3.8 409 2.5 408 4.5 407 4.5 406 5.1 405 5.1 404 3.3 403 2 402 0.6 401 0.7 400 0.9 399 2.3 398 3.8 397 5.2 396 5 395 3.3 394 2.9 393 4.1 392 3.8 391 4 390 3.4 389 3.4 388 4.1 387 2.8 386 1.3 385 0.7 384 0.7 383 0.7 382 1.3 381 2.9 380 3.8 379 4.2 378 4.6 377 3.5 376 5.1 375 3.8 374 3 373 3.9 372 4.2 371 4.4 370 3.6 369 2.4 368 1.9 367 1.1 366 0.6 365 0.9 364 1.8 363 2.8 362 3.8 361 5 360 3.9 359 3.8 358 2.5 357 3.4 356 3.4 355 4.9 354 5 353 4.2 352 4.2 351 3.9 350 2.7 349 1.2 348 1.8 347 2.8 346 3.8 345 4.8 344 3.9 343 4.5 342 4.5 341 3.1 340 2.6 339 2.4 338 4.2 337 4.7 336 4 335 3.3 334 2.4 333 1.3 332 0.6 331 0.6 330 0.9 329 2.5 328 3.7 327 4.7 326 5.1 325 3.2 324 4.9 323 5.2 322 3.6 321 3.1 320 2.7 319 4.3 318 3.2 317 2.3 316 2 315 2.7 314 3.2 313 3.8 312 2.9 311 3.1 310 3.6 309 4.1 308 4.4 307 4.3 306 4.1 305 5.1 304 3.6 303 1.8 302 0.7 301 0.6 300 0.5 299 0.7 298 0.6 297 0.7 296 0.7 295 0.6 294 0.7 293 0.7 292 0.6 291 0.6 290 0.6 289 0.6 288 0.7 287 0.6 286 0.6 285 0.6 284 0.6 283 0.5 282 0.7 281 0.7 280 0.6 279 0.6 278 0.6 277 0.6 276 0.5 275 0.6 274 0.6 273 0.6 272 0.6 271 0.6 270 0.7 269 0.7 268 0.6 267 0.5 266 0.7 265 0.6 264 0.7 263 0.6 262 0.6 261 0.5 260 0.6 259 0.6 258 0.7 257 0.7 256 0.6 255 0.7 254 0.8 253 0.8 252 0.7 251 0.6 250 0.6 249 0.8 248 0.8 247 0.8 246 0.7 245 0.7 244 0.9 243 0.8 242 0.8 241 0.9 240 0.9 239 0.9 238 0.8 237 0.8 236 0.8 235 0.8 234 0.8 233 1.6 232 2.4 231 3.1 230 2.5 229 3 228 1.9 227 1.5 226 2.5 225 3.8 224 3.1 223 2.8 222 3.1 221 2.8 220 2 219 1.7 218 1.1 217 2.4 216 2.8 215 2.8 214 2.7 213 2.8 212 2 211 2.9 210 3.7 209 3.9 208 3.3 207 2 206 2.7 205 3.3 204 3.3 203 3.1 202 3.6 201 2.4 200 2.9 199 2.3 198 1 197 1 196 0.9 195 0.9 194 0.8 193 0.8 192 0.8 191 0.8 190 0.7 189 0.9 188 0.8 187 0.8 186 0.9 185 0.8 184 1 183 0.9 182 0.8 181 0.8 180 1 179 1 178 1.8 177 2.5 176 2.4 175 1.9 174 1.8 173 2.8 172 4.1 171 3.5 170 2.3 169 2.2 168 2 167 2.1 166 3.3 165 4 164 3.4 163 3 162 3.2 161 1.8 160 2.1 159 3.2 158 2.9 157 2.6 156 2 155 1 154 0.8 153 1 152 0.8 151 1.6 150 2.5 149 3 148 4.1 147 3.2 146 3.7 145 2.8 144 2.2 143 2.7 142 3.1 141 3.1 140 2.8 139 3.5 138 3 137 2.2 136 1.3 135 1.3 134 2.3 133 2.8 132 3.6 131 3.1 130 3.1 129 4 128 3.7 127 2.1 126 0.8 125 0.7 124 1 123 0.8 122 0.8 121 0.8 120 0.8 119 0.9 118 1.1 117 1.9 116 2.4 115 3.2 114 2.1 113 3 112 4.2 111 3.2 110 2.3 109 2.1 108 2.6 107 1.6 106 0.7 105 1 104 1.2 103 1.7 102 2.7 101 3.2 100 2.9 99 2 98 2.6 97 2.9 96 2.9 95 2.7 94 2.8 93 2.8 92 3 91 2.5 90 1.9 89 1.1 88 0.8 87 0.8 86 1 85 0.8 84 0.9 83 1.4 82 2.5 81 4 80 4.4 79 3.3 78 4.2 77 2.5 76 2.4 75 1 74 0.9 73 0.9 72 1.1 71 2.1 70 3.1 69 4.2 68 3.8 67 2.9 66 2.7 65 2.7 64 2.8 63 1.9 62 1.9 61 2.7 60 2.9 59 2.8 58 1.9 57 1.4 56 2.3 55 3.2 54 3.8 53 2 52 1.7 51 1.8 50 2.1 49 2.2 48 3.1 47 3 46 3.8 45 2.9 44 1.9 43 1 42 0.8 41 0.8 40 0.9 39 0.7 38 0.9 37 0.9 36 0.8 35 0.8 34 0.8 33 0.9 32 1 31 0.7 30 0.8 29 0.7 28 0.9 27 0.9 26 0.9 25 0.9 24 0.9 23 0.8 22 0.7 21 0.7 20 0.8 19 0.8 18 0.6 17 0.7 16 0.7 15 0.8 14 0.6 13 0.7 12 0.7 11 0.7 10 0.7 9 0.6 8 0.6 7 0.7 6 0.6 5 0.7 4 0.6 3 0.6 2 0.5 1 0.5 0 0.5Z" fill="#0b111e" transform="translate(0 78.0)"/><rect x="0" y="37.5" width="548.0" height="1" fill="#0b111e"/><rect x="0" y="77.5" width="548.0" height="1" fill="#0b111e"/><text x="4" y="14" font-size="10.6" fill="rgba(0,0,0,0.68)" font-weight="normal" letter-spacing="0.05" stroke="rgba(0,0,0,0.68)" stroke-width="0.2" font-family="Liberation Sans">NYE Fireworks</text></svg>
<svg style="left:591.5px;top:1149px" width="251.5" height="98" viewBox="0 0 251.5 98"><rect x="0" y="0" width="251.5" height="98" fill="#5480E4"/><path d="M251.5 18 L231.5 18 C242.5 18 245.5 98 251.5 98 Z" fill="rgba(0,0,0,0.13)"/><rect x="0" y="17" width="251.5" height="1" fill="rgba(0,0,0,0.10)"/><rect x="14.0" y="18" width="1" height="80" fill="rgba(0,0,0,0.2)"/><rect x="42.3" y="18" width="1" height="80" fill="rgba(0,0,0,0.2)"/><rect x="70.7" y="18" width="1" height="80" fill="rgba(0,0,0,0.2)"/><rect x="99.0" y="18" width="1" height="80" fill="rgba(0,0,0,0.2)"/><rect x="127.3" y="18" width="1" height="80" fill="rgba(0,0,0,0.2)"/><rect x="155.7" y="18" width="1" height="80" fill="rgba(0,0,0,0.2)"/><rect x="184.0" y="18" width="1" height="80" fill="rgba(0,0,0,0.2)"/><rect x="212.3" y="18" width="1" height="80" fill="rgba(0,0,0,0.2)"/><rect x="240.7" y="18" width="1" height="80" fill="rgba(0,0,0,0.2)"/><path id="w2857569" d="M0 -1.3 1 -2.1 2 -3.3 3 -3.5 4 -3 5 -3.6 6 -2.6 7 -3.2 8 -2.5 9 -2 10 -1.1 11 -1 12 -0.9 13 -0.9 14 -0.7 15 -1 16 -0.9 17 -1.5 18 -2.5 19 -3.8 20 -3.7 21 -3 22 -3.1 23 -2.3 24 -3.6 25 -3 26 -1.6 27 -1 28 -0.9 29 -0.7 30 -1.1 31 -2.3 32 -3.3 33 -4.1 34 -3.5 35 -3 36 -3 37 -3.3 38 -3.1 39 -3.3 40 -4 41 -3.1 42 -2.4 43 -1.2 44 -1 45 -1.1 46 -2.4 47 -2.7 48 -3 49 -3.5 50 -3.4 51 -3.7 52 -3.2 53 -1.9 54 -1.5 55 -0.9 56 -1 57 -0.9 58 -0.8 59 -0.8 60 -0.9 61 -2.2 62 -2.9 63 -2.7 64 -3.4 65 -3.2 66 -3 67 -2.7 68 -3.6 69 -3.3 70 -1.9 71 -0.9 72 -1 73 -0.9 74 -0.9 75 -1 76 -1 77 -1.6 78 -3.1 79 -3 80 -4 81 -3 82 -1.9 83 -1.8 84 -2.5 85 -3.3 86 -2.7 87 -1.4 88 -0.8 89 -0.9 90 -0.8 91 -0.9 92 -1.4 93 -2.4 94 -2.4 95 -2.9 96 -3.9 97 -3.5 98 -3.1 99 -2 100 -2.5 101 -2.4 102 -1.8 103 -1.1 104 -0.9 105 -1 106 -0.7 107 -0.7 108 -0.8 109 -0.7 110 -0.9 111 -1.3 112 -2.2 113 -2.3 114 -3.7 115 -4.4 116 -1.7 117 -0.9 118 -0.7 119 -0.8 120 -0.7 121 -0.7 122 -0.7 123 -0.7 124 -0.8 125 -0.6 126 -0.7 127 -0.7 128 -0.7 129 -0.6 130 -0.8 131 -0.7 132 -0.7 133 -0.6 134 -0.6 135 -0.6 136 -0.6 137 -0.8 138 -0.6 139 -0.6 140 -0.8 141 -0.6 142 -0.8 143 -0.7 144 -0.7 145 -0.7 146 -0.7 147 -0.7 148 -0.6 149 -0.7 150 -0.6 151 -0.7 152 -0.6 153 -0.7 154 -0.6 155 -0.7 156 -0.7 157 -0.7 158 -0.7 159 -0.7 160 -0.6 161 -0.6 162 -0.7 163 -0.6 164 -0.6 165 -0.6 166 -0.7 167 -0.5 168 -0.7 169 -0.5 170 -0.7 171 -0.6 172 -0.5 173 -0.7 174 -0.7 175 -0.6 176 -0.6 177 -0.6 178 -0.7 179 -0.7 180 -0.7 181 -0.6 182 -0.6 183 -0.6 184 -0.7 185 -0.6 186 -0.7 187 -0.6 188 -0.6 189 -0.6 190 -0.5 191 -0.6 192 -0.5 193 -0.5 194 -0.5 195 -0.6 196 -0.6 197 -0.7 198 -0.6 199 -0.7 200 -0.6 201 -0.6 202 -0.6 203 -0.6 204 -0.6 205 -0.6 206 -0.6 207 -0.6 208 -0.6 209 -0.6 210 -0.7 211 -0.6 212 -0.6 213 -0.6 214 -0.6 215 -0.6 216 -0.5 217 -0.6 218 -0.5 219 -0.5 220 -0.6 221 -0.6 222 -0.6 223 -0.6 224 -0.6 225 -0.6 226 -0.5 227 -0.5 228 -0.5 229 -0.5 230 -0.6 231 -0.5 232 -0.5 233 -0.6 234 -0.5 235 -0.5 236 -0.5 237 -0.5 238 -0.5 239 -0.6 240 -0.6 241 -0.6 242 -0.5 243 -0.5 244 -0.6 245 -0.5 246 -0.5 247 -0.6 248 -0.5 249 -0.6 250 -0.5 251 -0.5 251.5 -0.5 L251.5 0.5 251 0.5 250 0.5 249 0.6 248 0.5 247 0.6 246 0.5 245 0.5 244 0.6 243 0.5 242 0.5 241 0.6 240 0.6 239 0.6 238 0.5 237 0.5 236 0.5 235 0.5 234 0.5 233 0.6 232 0.5 231 0.5 230 0.6 229 0.5 228 0.5 227 0.5 226 0.5 225 0.6 224 0.6 223 0.6 222 0.6 221 0.6 220 0.6 219 0.5 218 0.5 217 0.6 216 0.5 215 0.6 214 0.6 213 0.6 212 0.6 211 0.6 210 0.7 209 0.6 208 0.6 207 0.6 206 0.6 205 0.6 204 0.6 203 0.6 202 0.6 201 0.6 200 0.6 199 0.7 198 0.6 197 0.7 196 0.6 195 0.6 194 0.5 193 0.5 192 0.5 191 0.6 190 0.5 189 0.6 188 0.6 187 0.6 186 0.7 185 0.6 184 0.7 183 0.6 182 0.6 181 0.6 180 0.7 179 0.7 178 0.7 177 0.6 176 0.6 175 0.6 174 0.7 173 0.7 172 0.5 171 0.6 170 0.7 169 0.5 168 0.7 167 0.5 166 0.7 165 0.6 164 0.6 163 0.6 162 0.7 161 0.6 160 0.6 159 0.7 158 0.7 157 0.7 156 0.7 155 0.7 154 0.6 153 0.7 152 0.6 151 0.7 150 0.6 149 0.7 148 0.6 147 0.7 146 0.7 145 0.7 144 0.7 143 0.7 142 0.8 141 0.6 140 0.8 139 0.6 138 0.6 137 0.8 136 0.6 135 0.6 134 0.6 133 0.6 132 0.7 131 0.7 130 0.8 129 0.6 128 0.7 127 0.7 126 0.7 125 0.6 124 0.8 123 0.7 122 0.7 121 0.7 120 0.7 119 0.8 118 0.7 117 0.9 116 1.7 115 4.4 114 3.7 113 2.3 112 2.2 111 1.3 110 0.9 109 0.7 108 0.8 107 0.7 106 0.7 105 1 104 0.9 103 1.1 102 1.8 101 2.4 100 2.5 99 2 98 3.1 97 3.5 96 3.9 95 2.9 94 2.4 93 2.4 92 1.4 91 0.9 90 0.8 89 0.9 88 0.8 87 1.4 86 2.7 85 3.3 84 2.5 83 1.8 82 1.9 81 3 80 4 79 3 78 3.1 77 1.6 76 1 75 1 74 0.9 73 0.9 72 1 71 0.9 70 1.9 69 3.3 68 3.6 67 2.7 66 3 65 3.2 64 3.4 63 2.7 62 2.9 61 2.2 60 0.9 59 0.8 58 0.8 57 0.9 56 1 55 0.9 54 1.5 53 1.9 52 3.2 51 3.7 50 3.4 49 3.5 48 3 47 2.7 46 2.4 45 1.1 44 1 43 1.2 42 2.4 41 3.1 40 4 39 3.3 38 3.1 37 3.3 36 3 35 3 34 3.5 33 4.1 32 3.3 31 2.3 30 1.1 29 0.7 28 0.9 27 1 26 1.6 25 3 24 3.6 23 2.3 22 3.1 21 3 20 3.7 19 3.8 18 2.5 17 1.5 16 0.9 15 1 14 0.7 13 0.9 12 0.9 11 1 10 1.1 9 2 8 2.5 7 3.2 6 2.6 5 3.6 4 3 3 3.5 2 3.3 1 2.1 0 1.3Z" fill="#0b111e" transform="translate(0 38.0)"/><use href="#w2857569" transform="translate(0 40.0)"/><rect x="0" y="37.5" width="251.5" height="1" fill="#0b111e"/><rect x="0" y="77.5" width="251.5" height="1" fill="#0b111e"/><text x="4" y="14" font-size="10.6" fill="rgba(0,0,0,0.68)" font-weight="normal" letter-spacing="0.05" stroke="rgba(0,0,0,0.68)" stroke-width="0.2" font-family="Liberation Sans">NYE Fireworks</text></svg>
<svg style="left:843.0px;top:1149px" width="61.4" height="98" viewBox="0 0 61.4 98"><rect x="0" y="0" width="61.4" height="98" fill="#5480E4"/><path d="M61.4 18 L5.4 18 C36.2 18 44.6 98 61.4 98 Z" fill="rgba(0,0,0,0.13)"/><rect x="0" y="17" width="61.4" height="1" fill="rgba(0,0,0,0.10)"/><rect x="17.5" y="18" width="1" height="80" fill="rgba(0,0,0,0.2)"/><rect x="45.8" y="18" width="1" height="80" fill="rgba(0,0,0,0.2)"/><path id="w85205141" d="M0 -0.6 1 -0.5 2 -0.5 3 -0.5 4 -0.5 5 -0.7 6 -1.1 7 -1.4 8 -1.2 9 -1 10 -0.5 11 -0.5 12 -0.5 13 -0.5 14 -0.6 15 -0.5 16 -0.6 17 -0.5 18 -0.6 19 -0.6 20 -0.6 21 -0.5 22 -0.5 23 -0.5 24 -0.5 25 -0.6 26 -0.6 27 -0.5 28 -0.5 29 -0.6 30 -0.5 31 -0.5 32 -0.6 33 -0.5 34 -0.5 35 -0.5 36 -0.5 37 -0.5 38 -0.5 39 -0.6 40 -0.6 41 -0.6 42 -0.5 43 -0.6 44 -0.5 45 -0.5 46 -0.5 47 -0.5 48 -0.6 49 -0.5 50 -0.6 51 -0.6 52 -0.5 53 -0.5 54 -0.5 55 -0.6 56 -0.5 57 -0.5 58 -0.6 59 -0.5 60 -0.5 61 -0.5 61.4 -0.5 L61.4 0.5 61 0.5 60 0.5 59 0.5 58 0.6 57 0.5 56 0.5 55 0.6 54 0.5 53 0.5 52 0.5 51 0.6 50 0.6 49 0.5 48 0.6 47 0.5 46 0.5 45 0.5 44 0.5 43 0.6 42 0.5 41 0.6 40 0.6 39 0.6 38 0.5 37 0.5 36 0.5 35 0.5 34 0.5 33 0.5 32 0.6 31 0.5 30 0.5 29 0.6 28 0.5 27 0.5 26 0.6 25 0.6 24 0.5 23 0.5 22 0.5 21 0.5 20 0.6 19 0.6 18 0.6 17 0.5 16 0.6 15 0.5 14 0.6 13 0.5 12 0.5 11 0.5 10 0.5 9 1 8 1.2 7 1.4 6 1.1 5 0.7 4 0.5 3 0.5 2 0.5 1 0.5 0 0.6Z" fill="#0b111e" transform="translate(0 38.0)"/><use href="#w85205141" transform="translate(0 40.0)"/><rect x="0" y="37.5" width="61.4" height="1" fill="#0b111e"/><rect x="0" y="77.5" width="61.4" height="1" fill="#0b111e"/><text x="4" y="14" font-size="10.6" fill="rgba(0,0,0,0.68)" font-weight="normal" letter-spacing="0.05" stroke="rgba(0,0,0,0.68)" stroke-width="0.2" font-family="Liberation Sans">NYE Firewo</text></svg>
<div style="left:760px;top:85px;width:8px;height:1px;background:#3fe03f;"></div>
<svg style="left:205px;top:89px" width="11" height="7"><path d="M0 0H10L5 6Z" fill="#3ab5de"/></svg>
<div style="left:210px;top:137px;width:2px;height:98px;background:#8cbccb;"></div>
<svg style="left:39px;top:61px" width="14" height="13"><path d="M0.5 0.5L11 6.5L0.5 12.5" fill="none" stroke="#1a1a1a" stroke-width="1"/></svg>
<svg style="left:905px;top:61px" width="14" height="13"><path d="M13.5 0.5L3 6.5L13.5 12.5" fill="none" stroke="#1a1a1a" stroke-width="1"/></svg>
<svg style="left:205px;top:1517px" width="11" height="6"><path d="M0 6H10L5 0Z" fill="#3ab5de"/></svg>
<span style="left:542px;top:1268px;font-size:11px;color:#e0e0e0;font-weight:bold;letter-spacing:0.2px;">Drop Files and Devices Here</span>
<div style="left:376px;top:500px;width:8px;height:1px;background:#2a1020;"></div>
<div style="left:1229px;top:96px;width:307px;height:1421px;background:#2c2c2c;"></div>
<div style="left:1229px;top:96px;width:106px;height:39px;background:#12BFB0;"></div>
<div style="left:1336px;top:96px;width:85px;height:39px;background:#4b4b4b;"></div>
<div style="left:1422px;top:96px;width:114px;height:39px;background:#535353;"></div>
<div style="left:1229px;top:137px;width:106px;height:98px;background:#FF94A6;"></div>
<div style="left:1336px;top:137px;width:85px;height:98px;background:#4b4b4b;"></div>
<div style="left:1422px;top:137px;width:114px;height:98px;background:#616161;"></div>
<div style="left:1229px;top:236px;width:106px;height:98px;background:#1279C0;"></div>
<div style="left:1336px;top:236px;width:85px;height:98px;background:#4b4b4b;"></div>
<div style="left:1422px;top:236px;width:114px;height:98px;background:#535353;"></div>
<div style="left:1229px;top:336px;width:106px;height:98px;background:#F7F47C;"></div>
<div style="left:1336px;top:336px;width:85px;height:98px;background:#4b4b4b;"></div>
<div style="left:1422px;top:336px;width:114px;height:98px;background:#535353;"></div>
<div style="left:1229px;top:435px;width:106px;height:98px;background:#1DFF3A;"></div>
<div style="left:1336px;top:435px;width:85px;height:98px;background:#4b4b4b;"></div>
<div style="left:1422px;top:435px;width:114px;height:98px;background:#535353;"></div>
<div style="left:1229px;top:535px;width:106px;height:98px;background:#1DFF3A;"></div>
<div style="left:1336px;top:535px;width:85px;height:98px;background:#4b4b4b;"></div>
<div style="left:1422px;top:535px;width:114px;height:98px;background:#535353;"></div>
<div style="left:1229px;top:634px;width:106px;height:97px;background:#FF3636;"></div>
<div style="left:1336px;top:634px;width:85px;height:97px;background:#4b4b4b;"></div>
<div style="left:1422px;top:634px;width:114px;height:97px;background:#535353;"></div>
<div style="left:1229px;top:731px;width:106px;height:59px;background:#966767;"></div>
<div style="left:1229px;top:731px;width:106px;height:1px;background:rgba(0,0,0,0.18);"></div>
<div style="left:1336px;top:730px;width:85px;height:60px;background:#4b4b4b;"></div>
<div style="left:1422px;top:730px;width:114px;height:60px;background:#535353;"></div>
<div style="left:1229px;top:790px;width:106px;height:59px;background:#966767;"></div>
<div style="left:1229px;top:790px;width:106px;height:1px;background:rgba(0,0,0,0.18);"></div>
<div style="left:1336px;top:789px;width:85px;height:60px;background:#4b4b4b;"></div>
<div style="left:1422px;top:789px;width:114px;height:60px;background:#535353;"></div>
<div style="left:1229px;top:850px;width:106px;height:98px;background:#12BFB0;"></div>
<div style="left:1336px;top:850px;width:85px;height:98px;background:#4b4b4b;"></div>
<div style="left:1422px;top:850px;width:114px;height:98px;background:#535353;"></div>
<div style="left:1229px;top:950px;width:106px;height:98px;background:#FFA529;"></div>
<div style="left:1336px;top:950px;width:85px;height:98px;background:#4b4b4b;"></div>
<div style="left:1422px;top:950px;width:114px;height:98px;background:#535353;"></div>
<div style="left:1229px;top:1049px;width:106px;height:98px;background:#19E9FF;"></div>
<div style="left:1336px;top:1049px;width:85px;height:98px;background:#4b4b4b;"></div>
<div style="left:1422px;top:1049px;width:114px;height:98px;background:#535353;"></div>
<div style="left:1229px;top:1149px;width:106px;height:98px;background:#5480E4;"></div>
<div style="left:1336px;top:1149px;width:85px;height:98px;background:#4b4b4b;"></div>
<div style="left:1422px;top:1149px;width:114px;height:98px;background:#535353;"></div>
<div style="left:1229px;top:1248px;width:307px;height:50px;background:#4d4d4d;"></div>
<div style="left:1229px;top:1300px;width:106px;height:20px;background:#92A7FF;"></div>
<div style="left:1336px;top:1300px;width:85px;height:20px;background:#4b4b4b;"></div>
<div style="left:1422px;top:1300px;width:114px;height:20px;background:#535353;"></div>
<div style="left:1229px;top:1322px;width:106px;height:19px;background:#5480E4;"></div>
<div style="left:1336px;top:1322px;width:85px;height:19px;background:#4b4b4b;"></div>
<div style="left:1422px;top:1322px;width:114px;height:19px;background:#535353;"></div>
<div style="left:1229px;top:1343px;width:106px;height:174px;background:#FF3636;"></div>
<div style="left:1336px;top:1343px;width:85px;height:174px;background:#4b4b4b;"></div>
<div style="left:1422px;top:1343px;width:114px;height:174px;background:#535353;"></div>
<div style="left:1233px;top:60px;width:31px;height:13px;background:#333;border-radius:7px;"></div>
<span style="left:1233px;top:61px;font-size:11px;color:#f0f0f0;font-weight:bold;width:31px;text-align:center;">Set</span>
<div style="left:1233px;top:77px;width:13px;height:13px;background:#333;border-radius:50%;"></div>
<div style="left:1252px;top:77px;width:13px;height:13px;background:#333;border-radius:50%;"></div>
<svg style="left:1233px;top:78px" width="13" height="11"><path d="M2 5.5L6 2V4H10V7H6V9Z" fill="#e8e8e8"/></svg>
<svg style="left:1252px;top:78px" width="13" height="11"><path d="M11 5.5L7 2V4H3V7H7V9Z" fill="#e8e8e8"/></svg>
<div style="left:1279px;top:77px;width:23px;height:13px;background:#333;"></div>
<svg style="left:1284px;top:78px" width="13" height="11"><path d="M3 9L10 2" stroke="#e8e8e8" stroke-width="1.5"/><circle cx="3" cy="9" r="1.6" fill="#e8e8e8"/><circle cx="10" cy="2" r="1.6" fill="#e8e8e8"/></svg>
<div style="left:1309px;top:77px;width:24px;height:13px;background:#333;"></div>
<svg style="left:1315px;top:78px" width="12" height="11"><path d="M3.5 5V3.5A2.5 2.5 0 0 1 8.5 3.5V5" fill="none" stroke="#e8e8e8" stroke-width="1.3"/><rect x="2" y="5" width="8" height="5" fill="#e8e8e8"/></svg>
<svg style="left:1233px;top:140px" width="15" height="15"><circle cx="7.5" cy="7.5" r="6.3" fill="none" stroke="rgba(0,0,0,0.65)" stroke-width="1"/><path d="M4.5 6L10.5 6L7.5 10Z" fill="rgba(0,0,0,0.75)"/></svg>
<span style="left:1256px;top:142px;font-size:11px;color:rgba(0,0,0,0.85);font-weight:normal;width:78px;overflow:hidden;letter-spacing:0.1px;-webkit-text-stroke:0.3px rgba(0,0,0,0.6);">2 µF MIDI</span>
<svg style="left:1233px;top:239px" width="15" height="15"><circle cx="7.5" cy="7.5" r="6.3" fill="none" stroke="rgba(0,0,0,0.65)" stroke-width="1"/><path d="M4.5 6L10.5 6L7.5 10Z" fill="rgba(0,0,0,0.75)"/></svg>
<span style="left:1256px;top:241px;font-size:11px;color:rgba(0,0,0,0.85);font-weight:normal;width:78px;overflow:hidden;letter-spacing:0.1px;-webkit-text-stroke:0.3px rgba(0,0,0,0.6);">OP1</span>
<svg style="left:1233px;top:339px" width="15" height="15"><circle cx="7.5" cy="7.5" r="6.3" fill="none" stroke="rgba(0,0,0,0.65)" stroke-width="1"/><path d="M4.5 6L10.5 6L7.5 10Z" fill="rgba(0,0,0,0.75)"/></svg>
<span style="left:1256px;top:341px;font-size:11px;color:rgba(0,0,0,0.85);font-weight:normal;width:78px;overflow:hidden;letter-spacing:0.1px;-webkit-text-stroke:0.3px rgba(0,0,0,0.6);">4 OPZ BD MID</span>
<svg style="left:1233px;top:438px" width="15" height="15"><circle cx="7.5" cy="7.5" r="6.3" fill="none" stroke="rgba(0,0,0,0.65)" stroke-width="1"/><path d="M4.5 6L10.5 6L7.5 10Z" fill="rgba(0,0,0,0.75)"/></svg>
<span style="left:1256px;top:440px;font-size:11px;color:rgba(0,0,0,0.85);font-weight:normal;width:78px;overflow:hidden;letter-spacing:0.1px;-webkit-text-stroke:0.3px rgba(0,0,0,0.6);">3 OPZ BD</span>
<svg style="left:1233px;top:538px" width="15" height="15"><circle cx="7.5" cy="7.5" r="6.3" fill="none" stroke="rgba(0,0,0,0.65)" stroke-width="1"/><path d="M4.5 6L10.5 6L7.5 10Z" fill="rgba(0,0,0,0.75)"/></svg>
<span style="left:1256px;top:540px;font-size:11px;color:rgba(0,0,0,0.85);font-weight:normal;width:78px;overflow:hidden;letter-spacing:0.1px;-webkit-text-stroke:0.3px rgba(0,0,0,0.6);">3 OPZ SD</span>
<svg style="left:1233px;top:637px" width="15" height="15"><circle cx="7.5" cy="7.5" r="6.3" fill="none" stroke="rgba(0,0,0,0.65)" stroke-width="1"/><path d="M4.5 6L10.5 6L7.5 10Z" fill="rgba(0,0,0,0.75)"/></svg>
<span style="left:1256px;top:639px;font-size:11px;color:rgba(0,0,0,0.85);font-weight:normal;width:78px;overflow:hidden;letter-spacing:0.1px;-webkit-text-stroke:0.3px rgba(0,0,0,0.6);">OPZ CY</span>
<span style="left:1233px;top:738px;font-size:11px;color:#F3D0D0;font-weight:bold;">Lane</span>
<div style="left:1317px;top:735px;width:15px;height:15px;background:#262626;border-radius:1px;"></div>
<svg style="left:1319px;top:737px" width="11" height="11"><path d="M2 4H4L7 1.5V9.5L4 7H2Z" fill="#ddd"/><path d="M8.5 3.5V7.5" stroke="#ddd" stroke-width="1"/></svg>
<span style="left:1233px;top:797px;font-size:11px;color:#F3D0D0;font-weight:bold;">Lane</span>
<div style="left:1317px;top:794px;width:15px;height:15px;background:#262626;border-radius:1px;"></div>
<svg style="left:1319px;top:796px" width="11" height="11"><path d="M2 4H4L7 1.5V9.5L4 7H2Z" fill="#ddd"/><path d="M8.5 3.5V7.5" stroke="#ddd" stroke-width="1"/></svg>
<svg style="left:1233px;top:853px" width="15" height="15"><circle cx="7.5" cy="7.5" r="6.3" fill="none" stroke="rgba(0,0,0,0.65)" stroke-width="1"/><path d="M4.5 6L10.5 6L7.5 10Z" fill="rgba(0,0,0,0.75)"/></svg>
<span style="left:1256px;top:855px;font-size:11px;color:rgba(0,0,0,0.85);font-weight:normal;width:78px;overflow:hidden;letter-spacing:0.1px;-webkit-text-stroke:0.3px rgba(0,0,0,0.6);">8 OPZ CY 2</span>
<svg style="left:1233px;top:953px" width="15" height="15"><circle cx="7.5" cy="7.5" r="6.3" fill="none" stroke="rgba(0,0,0,0.65)" stroke-width="1"/><path d="M4.5 6L10.5 6L7.5 10Z" fill="rgba(0,0,0,0.75)"/></svg>
<span style="left:1256px;top:955px;font-size:11px;color:rgba(0,0,0,0.85);font-weight:normal;width:78px;overflow:hidden;letter-spacing:0.1px;-webkit-text-stroke:0.3px rgba(0,0,0,0.6);">Strega &gt; µC |</span>
<svg style="left:1233px;top:1052px" width="15" height="15"><circle cx="7.5" cy="7.5" r="6.3" fill="none" stroke="rgba(0,0,0,0.65)" stroke-width="1"/><path d="M4.5 6L10.5 6L7.5 10Z" fill="rgba(0,0,0,0.75)"/></svg>
<span style="left:1256px;top:1054px;font-size:11px;color:rgba(0,0,0,0.85);font-weight:normal;width:78px;overflow:hidden;letter-spacing:0.1px;-webkit-text-stroke:0.3px rgba(0,0,0,0.6);">Strega II &gt; µC</span>
<svg style="left:1233px;top:1152px" width="15" height="15"><circle cx="7.5" cy="7.5" r="6.3" fill="none" stroke="rgba(0,0,0,0.65)" stroke-width="1"/><path d="M4.5 6L10.5 6L7.5 10Z" fill="rgba(0,0,0,0.75)"/></svg>
<span style="left:1256px;top:1154px;font-size:11px;color:rgba(0,0,0,0.85);font-weight:normal;width:78px;overflow:hidden;letter-spacing:0.1px;-webkit-text-stroke:0.3px rgba(0,0,0,0.6);">NYE Firework</span>
<svg style="left:1233px;top:1303px" width="15" height="15"><circle cx="7.5" cy="7.5" r="6.3" fill="none" stroke="rgba(0,0,0,0.65)" stroke-width="1"/><path d="M5.5 4.5L10 7.5L5.5 10.5Z" fill="rgba(0,0,0,0.75)"/></svg>
<span style="left:1256px;top:1305px;font-size:11px;color:rgba(0,0,0,0.85);font-weight:normal;width:78px;overflow:hidden;letter-spacing:0.1px;-webkit-text-stroke:0.3px rgba(0,0,0,0.6);">A Reverb</span>
<svg style="left:1233px;top:1325px" width="15" height="15"><circle cx="7.5" cy="7.5" r="6.3" fill="none" stroke="rgba(0,0,0,0.65)" stroke-width="1"/><path d="M5.5 4.5L10 7.5L5.5 10.5Z" fill="rgba(0,0,0,0.75)"/></svg>
<span style="left:1256px;top:1327px;font-size:11px;color:rgba(0,0,0,0.85);font-weight:normal;width:78px;overflow:hidden;letter-spacing:0.1px;-webkit-text-stroke:0.3px rgba(0,0,0,0.6);">B Delay</span>
<svg style="left:1233px;top:1346px" width="15" height="15"><circle cx="7.5" cy="7.5" r="6.3" fill="none" stroke="rgba(0,0,0,0.65)" stroke-width="1"/><path d="M4.5 6L10.5 6L7.5 10Z" fill="rgba(0,0,0,0.75)"/></svg>
<span style="left:1259px;top:1348px;font-size:11px;color:rgba(0,0,0,0.85);font-weight:normal;width:78px;overflow:hidden;letter-spacing:0.1px;-webkit-text-stroke:0.3px rgba(0,0,0,0.6);">Master</span>
<div style="left:1339px;top:99px;width:79px;height:14px;background:#2c2c2c;border:1px solid #232323;"></div>
<span style="left:1341px;top:101px;font-size:11px;color:#f2f2f2;font-weight:bold;width:68px;overflow:hidden;letter-spacing:0.25px;">No Output</span>
<svg style="left:1406px;top:103px" width="9" height="7"><path d="M0 0H9L4.5 7Z" fill="#f0f0f0"/></svg>
<div style="left:1339px;top:118px;width:79px;height:14px;background:#4d4d4d;border:1px solid #303030;border-radius:1px;"></div>
<div style="left:1339px;top:140px;width:79px;height:14px;background:#2c2c2c;border:1px solid #232323;"></div>
<span style="left:1341px;top:142px;font-size:11px;color:#f2f2f2;font-weight:bold;width:68px;overflow:hidden;letter-spacing:0.25px;">Arturia Micr</span>
<svg style="left:1406px;top:144px" width="9" height="7"><path d="M0 0H9L4.5 7Z" fill="#f0f0f0"/></svg>
<div style="left:1339px;top:159px;width:79px;height:14px;background:#2c2c2c;border:1px solid #232323;"></div>
<div style="left:1341px;top:162px;width:1px;height:8px;background:#1a1a1a;"></div>
<div style="left:1343px;top:162px;width:1px;height:8px;background:#1a1a1a;"></div>
<span style="left:1353px;top:161px;font-size:11px;color:#f2f2f2;font-weight:bold;width:56px;overflow:hidden;letter-spacing:0.25px;">All Channe</span>
<svg style="left:1406px;top:163px" width="9" height="7"><path d="M0 0H9L4.5 7Z" fill="#f0f0f0"/></svg>
<div style="left:1339px;top:178px;width:19px;height:14px;background:#2c2c2c;border:1px solid #232323;"></div>
<span style="left:1339px;top:180px;font-size:11px;color:#f2f2f2;font-weight:bold;width:19px;text-align:center;overflow:hidden;letter-spacing:0.3px;">In</span>
<div style="left:1362px;top:178px;width:30px;height:14px;background:#F0982A;border:1px solid #1f4f5f;"></div>
<span style="left:1362px;top:180px;font-size:11px;color:#3a2a10;font-weight:normal;width:30px;text-align:center;overflow:hidden;letter-spacing:0.3px;">Auto</span>
<div style="left:1395px;top:178px;width:23px;height:14px;background:#2c2c2c;border:1px solid #232323;"></div>
<span style="left:1395px;top:180px;font-size:11px;color:#f2f2f2;font-weight:bold;width:23px;text-align:center;overflow:hidden;letter-spacing:0.3px;">Off</span>
<div style="left:1339px;top:198px;width:79px;height:14px;background:#2c2c2c;border:1px solid #232323;"></div>
<span style="left:1341px;top:200px;font-size:11px;color:#f2f2f2;font-weight:bold;width:68px;overflow:hidden;letter-spacing:0.25px;">No Output</span>
<svg style="left:1406px;top:202px" width="9" height="7"><path d="M0 0H9L4.5 7Z" fill="#f0f0f0"/></svg>
<div style="left:1339px;top:217px;width:79px;height:14px;background:#4d4d4d;border:1px solid #303030;border-radius:1px;"></div>
<div style="left:1426px;top:140px;width:51px;height:14px;background:#F0982A;border:1px solid #7a5a20;"></div>
<span style="left:1426px;top:142px;font-size:11px;color:#222;font-weight:normal;width:51px;text-align:center;overflow:hidden;letter-spacing:0.3px;">2</span>
<div style="left:1482px;top:140px;width:24px;height:14px;background:#383838;border:1px solid #2a2a2a;"></div>
<span style="left:1482px;top:142px;font-size:11px;color:#d8d8d8;font-weight:bold;width:24px;text-align:center;overflow:hidden;letter-spacing:0.3px;">S</span>
<div style="left:1511px;top:140px;width:23px;height:14px;background:#383838;border:1px solid #2a2a2a;"></div>
<svg style="left:1517px;top:142px" width="10" height="10"><circle cx="5" cy="5" r="4.2" fill="#e0e0e0"/><path d="M5 2.2V5H7" stroke="#333" stroke-width="1" fill="none"/></svg>
<div style="left:1339px;top:239px;width:79px;height:14px;background:#2c2c2c;border:1px solid #232323;"></div>
<span style="left:1341px;top:241px;font-size:11px;color:#f2f2f2;font-weight:bold;width:68px;overflow:hidden;letter-spacing:0.25px;">Ext. In</span>
<svg style="left:1406px;top:243px" width="9" height="7"><path d="M0 0H9L4.5 7Z" fill="#f0f0f0"/></svg>
<div style="left:1339px;top:258px;width:79px;height:14px;background:#2c2c2c;border:1px solid #232323;"></div>
<div style="left:1341px;top:261px;width:1px;height:8px;background:#1a1a1a;"></div>
<div style="left:1343px;top:261px;width:1px;height:8px;background:#1a1a1a;"></div>
<div style="left:1341px;top:267px;width:1px;height:2px;background:#3fd13f;"></div>
<div style="left:1343px;top:267px;width:1px;height:2px;background:#3fd13f;"></div>
<span style="left:1351px;top:260px;font-size:11px;color:#f2f2f2;font-weight:bold;width:58px;overflow:hidden;letter-spacing:0.25px;">1/2 OP-1 S</span>
<svg style="left:1406px;top:262px" width="9" height="7"><path d="M0 0H9L4.5 7Z" fill="#f0f0f0"/></svg>
<div style="left:1339px;top:277px;width:19px;height:14px;background:#2c2c2c;border:1px solid #232323;"></div>
<span style="left:1339px;top:279px;font-size:11px;color:#f2f2f2;font-weight:bold;width:19px;text-align:center;overflow:hidden;letter-spacing:0.3px;">In</span>
<div style="left:1362px;top:277px;width:30px;height:14px;background:#F0982A;border:1px solid #1f4f5f;"></div>
<span style="left:1362px;top:279px;font-size:11px;color:#3a2a10;font-weight:normal;width:30px;text-align:center;overflow:hidden;letter-spacing:0.3px;">Auto</span>
<div style="left:1395px;top:277px;width:23px;height:14px;background:#2c2c2c;border:1px solid #232323;"></div>
<span style="left:1395px;top:279px;font-size:11px;color:#f2f2f2;font-weight:bold;width:23px;text-align:center;overflow:hidden;letter-spacing:0.3px;">Off</span>
<div style="left:1339px;top:297px;width:79px;height:14px;background:#2c2c2c;border:1px solid #232323;"></div>
<span style="left:1341px;top:299px;font-size:11px;color:#f2f2f2;font-weight:bold;width:68px;overflow:hidden;letter-spacing:0.25px;">Master</span>
<svg style="left:1406px;top:301px" width="9" height="7"><path d="M0 0H9L4.5 7Z" fill="#f0f0f0"/></svg>
<div style="left:1339px;top:316px;width:79px;height:14px;background:#4d4d4d;border:1px solid #303030;border-radius:1px;"></div>
<div style="left:1426px;top:239px;width:51px;height:14px;background:#F0982A;border:1px solid #7a5a20;"></div>
<span style="left:1426px;top:241px;font-size:11px;color:#222;font-weight:normal;width:51px;text-align:center;overflow:hidden;letter-spacing:0.3px;">3</span>
<div style="left:1482px;top:239px;width:24px;height:14px;background:#383838;border:1px solid #2a2a2a;"></div>
<span style="left:1482px;top:241px;font-size:11px;color:#d8d8d8;font-weight:bold;width:24px;text-align:center;overflow:hidden;letter-spacing:0.3px;">S</span>
<div style="left:1511px;top:239px;width:23px;height:14px;background:#E8322F;border:1px solid #2a2a2a;"></div>
<svg style="left:1517px;top:241px" width="10" height="10"><circle cx="5" cy="5" r="4" fill="#111"/></svg>
<div style="left:1426px;top:258px;width:51px;height:14px;background:#2c2c2c;border:1px solid #262626;"></div>
<div style="left:1427px;top:259px;width:43px;height:12px;background:#1C7284;"></div>
<span style="left:1426px;top:260px;font-size:11px;color:#f2f2f2;font-weight:bold;width:51px;text-align:center;">0</span>
<div style="left:1482px;top:258px;width:52px;height:14px;background:#2c2c2c;border:1px solid #262626;"></div>
<span style="left:1482px;top:260px;font-size:11px;color:#f2f2f2;font-weight:bold;width:52px;text-align:center;">C</span>
<div style="left:1426px;top:277px;width:34px;height:14px;background:#2c2c2c;border:1px solid #232323;"></div>
<span style="left:1426px;top:279px;font-size:11px;color:#e8e8e8;font-weight:bold;width:34px;text-align:center;overflow:hidden;letter-spacing:0.3px;">-inf</span>
<div style="left:1463px;top:277px;width:34px;height:14px;background:#2c2c2c;border:1px solid #232323;"></div>
<span style="left:1463px;top:279px;font-size:11px;color:#e8e8e8;font-weight:bold;width:34px;text-align:center;overflow:hidden;letter-spacing:0.3px;">-inf</span>
<div style="left:1339px;top:339px;width:79px;height:14px;background:#2c2c2c;border:1px solid #232323;"></div>
<span style="left:1341px;top:341px;font-size:11px;color:#777;font-weight:bold;width:68px;overflow:hidden;letter-spacing:0.25px;">OP-Z</span>
<svg style="left:1406px;top:343px" width="9" height="7"><path d="M0 0H9L4.5 7Z" fill="#777"/></svg>
<div style="left:1339px;top:358px;width:79px;height:14px;background:#2c2c2c;border:1px solid #232323;"></div>
<span style="left:1341px;top:360px;font-size:11px;color:#777;font-weight:bold;width:68px;overflow:hidden;letter-spacing:0.25px;">All Channels</span>
<div style="left:1339px;top:377px;width:19px;height:14px;background:#2c2c2c;border:1px solid #232323;"></div>
<span style="left:1339px;top:379px;font-size:11px;color:#777;font-weight:normal;width:19px;text-align:center;overflow:hidden;letter-spacing:0.3px;">In</span>
<div style="left:1362px;top:377px;width:30px;height:14px;background:#8a8a8a;border:1px solid #232323;"></div>
<span style="left:1362px;top:379px;font-size:11px;color:#5a5a5a;font-weight:normal;width:30px;text-align:center;overflow:hidden;letter-spacing:0.3px;">Auto</span>
<div style="left:1395px;top:377px;width:23px;height:14px;background:#2c2c2c;border:1px solid #232323;"></div>
<span style="left:1395px;top:379px;font-size:11px;color:#777;font-weight:normal;width:23px;text-align:center;overflow:hidden;letter-spacing:0.3px;">Off</span>
<div style="left:1339px;top:397px;width:79px;height:14px;background:#2c2c2c;border:1px solid #232323;"></div>
<span style="left:1341px;top:399px;font-size:11px;color:#f2f2f2;font-weight:bold;width:68px;overflow:hidden;letter-spacing:0.25px;">No Output</span>
<svg style="left:1406px;top:401px" width="9" height="7"><path d="M0 0H9L4.5 7Z" fill="#f0f0f0"/></svg>
<div style="left:1339px;top:416px;width:79px;height:14px;background:#4d4d4d;border:1px solid #303030;border-radius:1px;"></div>
<div style="left:1426px;top:339px;width:51px;height:14px;background:#F0982A;border:1px solid #7a5a20;"></div>
<span style="left:1426px;top:341px;font-size:11px;color:#222;font-weight:normal;width:51px;text-align:center;overflow:hidden;letter-spacing:0.3px;">4</span>
<div style="left:1482px;top:339px;width:24px;height:14px;background:#383838;border:1px solid #2a2a2a;"></div>
<span style="left:1482px;top:341px;font-size:11px;color:#d8d8d8;font-weight:bold;width:24px;text-align:center;overflow:hidden;letter-spacing:0.3px;">S</span>
<div style="left:1511px;top:339px;width:23px;height:14px;background:#383838;border:1px solid #2a2a2a;"></div>
<svg style="left:1517px;top:341px" width="10" height="10"><circle cx="5" cy="5" r="4.2" fill="#777"/><path d="M5 2.2V5H7" stroke="#333" stroke-width="1" fill="none"/></svg>
<div style="left:1339px;top:438px;width:79px;height:14px;background:#2c2c2c;border:1px solid #232323;"></div>
<span style="left:1341px;top:440px;font-size:11px;color:#f2f2f2;font-weight:bold;width:68px;overflow:hidden;letter-spacing:0.25px;">Ext. In</span>
<svg style="left:1406px;top:442px" width="9" height="7"><path d="M0 0H9L4.5 7Z" fill="#f0f0f0"/></svg>
<div style="left:1339px;top:457px;width:79px;height:14px;background:#2c2c2c;border:1px solid #232323;"></div>
<div style="left:1341px;top:460px;width:1px;height:8px;background:#1a1a1a;"></div>
<div style="left:1343px;top:460px;width:1px;height:8px;background:#1a1a1a;"></div>
<span style="left:1351px;top:459px;font-size:11px;color:#f2f2f2;font-weight:bold;width:58px;overflow:hidden;letter-spacing:0.25px;">3/4 OP-Z S</span>
<svg style="left:1406px;top:461px" width="9" height="7"><path d="M0 0H9L4.5 7Z" fill="#f0f0f0"/></svg>
<div style="left:1339px;top:476px;width:19px;height:14px;background:#2c2c2c;border:1px solid #232323;"></div>
<span style="left:1339px;top:478px;font-size:11px;color:#f2f2f2;font-weight:bold;width:19px;text-align:center;overflow:hidden;letter-spacing:0.3px;">In</span>
<div style="left:1362px;top:476px;width:30px;height:14px;background:#2c2c2c;border:1px solid #232323;"></div>
<span style="left:1362px;top:478px;font-size:11px;color:#f2f2f2;font-weight:bold;width:30px;text-align:center;overflow:hidden;letter-spacing:0.3px;">Auto</span>
<div style="left:1395px;top:476px;width:23px;height:14px;background:#F0982A;border:1px solid #232323;"></div>
<span style="left:1395px;top:478px;font-size:11px;color:#3a2a10;font-weight:normal;width:23px;text-align:center;overflow:hidden;letter-spacing:0.3px;">Off</span>
<div style="left:1339px;top:496px;width:79px;height:14px;background:#2c2c2c;border:1px solid #232323;"></div>
<span style="left:1341px;top:498px;font-size:11px;color:#f2f2f2;font-weight:bold;width:68px;overflow:hidden;letter-spacing:0.25px;">Master</span>
<svg style="left:1406px;top:500px" width="9" height="7"><path d="M0 0H9L4.5 7Z" fill="#f0f0f0"/></svg>
<div style="left:1339px;top:515px;width:79px;height:14px;background:#4d4d4d;border:1px solid #303030;border-radius:1px;"></div>
<div style="left:1426px;top:438px;width:51px;height:14px;background:#F0982A;border:1px solid #7a5a20;"></div>
<span style="left:1426px;top:440px;font-size:11px;color:#222;font-weight:normal;width:51px;text-align:center;overflow:hidden;letter-spacing:0.3px;">5</span>
<div style="left:1482px;top:438px;width:24px;height:14px;background:#383838;border:1px solid #2a2a2a;"></div>
<span style="left:1482px;top:440px;font-size:11px;color:#d8d8d8;font-weight:bold;width:24px;text-align:center;overflow:hidden;letter-spacing:0.3px;">S</span>
<div style="left:1511px;top:438px;width:23px;height:14px;background:#383838;border:1px solid #2a2a2a;"></div>
<svg style="left:1517px;top:440px" width="10" height="10"><circle cx="5" cy="5" r="4" fill="#f0f0f0"/></svg>
<div style="left:1426px;top:457px;width:51px;height:14px;background:#2c2c2c;border:1px solid #262626;"></div>
<div style="left:1427px;top:458px;width:40px;height:12px;background:#1C7284;"></div>
<span style="left:1426px;top:459px;font-size:11px;color:#f2f2f2;font-weight:bold;width:51px;text-align:center;">-3.0</span>
<div style="left:1482px;top:457px;width:52px;height:14px;background:#2c2c2c;border:1px solid #262626;"></div>
<span style="left:1482px;top:459px;font-size:11px;color:#f2f2f2;font-weight:bold;width:52px;text-align:center;">C</span>
<div style="left:1426px;top:476px;width:34px;height:14px;background:#2c2c2c;border:1px solid #232323;"></div>
<span style="left:1426px;top:478px;font-size:11px;color:#e8e8e8;font-weight:bold;width:34px;text-align:center;overflow:hidden;letter-spacing:0.3px;">-inf</span>
<div style="left:1463px;top:476px;width:34px;height:14px;background:#2c2c2c;border:1px solid #232323;"></div>
<span style="left:1463px;top:478px;font-size:11px;color:#e8e8e8;font-weight:bold;width:34px;text-align:center;overflow:hidden;letter-spacing:0.3px;">-inf</span>
<div style="left:1339px;top:538px;width:79px;height:14px;background:#2c2c2c;border:1px solid #232323;"></div>
<span style="left:1341px;top:540px;font-size:11px;color:#f2f2f2;font-weight:bold;width:68px;overflow:hidden;letter-spacing:0.25px;">Ext. In</span>
<svg style="left:1406px;top:542px" width="9" height="7"><path d="M0 0H9L4.5 7Z" fill="#f0f0f0"/></svg>
<div style="left:1339px;top:557px;width:79px;height:14px;background:#2c2c2c;border:1px solid #232323;"></div>
<div style="left:1341px;top:560px;width:1px;height:8px;background:#1a1a1a;"></div>
<div style="left:1343px;top:560px;width:1px;height:8px;background:#1a1a1a;"></div>
<span style="left:1351px;top:559px;font-size:11px;color:#f2f2f2;font-weight:bold;width:58px;overflow:hidden;letter-spacing:0.25px;">3/4 OP-Z S</span>
<svg style="left:1406px;top:561px" width="9" height="7"><path d="M0 0H9L4.5 7Z" fill="#f0f0f0"/></svg>
<div style="left:1339px;top:576px;width:19px;height:14px;background:#2c2c2c;border:1px solid #232323;"></div>
<span style="left:1339px;top:578px;font-size:11px;color:#f2f2f2;font-weight:bold;width:19px;text-align:center;overflow:hidden;letter-spacing:0.3px;">In</span>
<div style="left:1362px;top:576px;width:30px;height:14px;background:#2c2c2c;border:1px solid #232323;"></div>
<span style="left:1362px;top:578px;font-size:11px;color:#f2f2f2;font-weight:bold;width:30px;text-align:center;overflow:hidden;letter-spacing:0.3px;">Auto</span>
<div style="left:1395px;top:576px;width:23px;height:14px;background:#F0982A;border:1px solid #232323;"></div>
<span style="left:1395px;top:578px;font-size:11px;color:#3a2a10;font-weight:normal;width:23px;text-align:center;overflow:hidden;letter-spacing:0.3px;">Off</span>
<div style="left:1339px;top:596px;width:79px;height:14px;background:#2c2c2c;border:1px solid #232323;"></div>
<span style="left:1341px;top:598px;font-size:11px;color:#f2f2f2;font-weight:bold;width:68px;overflow:hidden;letter-spacing:0.25px;">Master</span>
<svg style="left:1406px;top:600px" width="9" height="7"><path d="M0 0H9L4.5 7Z" fill="#f0f0f0"/></svg>
<div style="left:1339px;top:615px;width:79px;height:14px;background:#4d4d4d;border:1px solid #303030;border-radius:1px;"></div>
<div style="left:1426px;top:538px;width:51px;height:14px;background:#F0982A;border:1px solid #7a5a20;"></div>
<span style="left:1426px;top:540px;font-size:11px;color:#222;font-weight:normal;width:51px;text-align:center;overflow:hidden;letter-spacing:0.3px;">6</span>
<div style="left:1482px;top:538px;width:24px;height:14px;background:#383838;border:1px solid #2a2a2a;"></div>
<span style="left:1482px;top:540px;font-size:11px;color:#d8d8d8;font-weight:bold;width:24px;text-align:center;overflow:hidden;letter-spacing:0.3px;">S</span>
<div style="left:1511px;top:538px;width:23px;height:14px;background:#383838;border:1px solid #2a2a2a;"></div>
<svg style="left:1517px;top:540px" width="10" height="10"><circle cx="5" cy="5" r="4" fill="#f0f0f0"/></svg>
<div style="left:1426px;top:557px;width:51px;height:14px;background:#2c2c2c;border:1px solid #262626;"></div>
<div style="left:1427px;top:558px;width:36px;height:12px;background:#1C7284;"></div>
<span style="left:1426px;top:559px;font-size:11px;color:#f2f2f2;font-weight:bold;width:51px;text-align:center;">-6.0</span>
<div style="left:1482px;top:557px;width:52px;height:14px;background:#2c2c2c;border:1px solid #262626;"></div>
<div style="left:1503px;top:558px;width:7px;height:12px;background:#1C7284;"></div>
<span style="left:1482px;top:559px;font-size:11px;color:#f2f2f2;font-weight:bold;width:52px;text-align:center;">10R</span>
<div style="left:1426px;top:576px;width:34px;height:14px;background:#2c2c2c;border:1px solid #232323;"></div>
<span style="left:1426px;top:578px;font-size:11px;color:#e8e8e8;font-weight:bold;width:34px;text-align:center;overflow:hidden;letter-spacing:0.3px;">-inf</span>
<div style="left:1463px;top:576px;width:34px;height:14px;background:#2c2c2c;border:1px solid #232323;"></div>
<span style="left:1463px;top:578px;font-size:11px;color:#e8e8e8;font-weight:bold;width:34px;text-align:center;overflow:hidden;letter-spacing:0.3px;">-inf</span>
<div style="left:1339px;top:637px;width:79px;height:14px;background:#2c2c2c;border:1px solid #232323;"></div>
<span style="left:1341px;top:639px;font-size:11px;color:#f2f2f2;font-weight:bold;width:68px;overflow:hidden;letter-spacing:0.25px;">Ext. In</span>
<svg style="left:1406px;top:641px" width="9" height="7"><path d="M0 0H9L4.5 7Z" fill="#f0f0f0"/></svg>
<div style="left:1339px;top:656px;width:79px;height:14px;background:#2c2c2c;border:1px solid #232323;"></div>
<div style="left:1341px;top:659px;width:1px;height:8px;background:#1a1a1a;"></div>
<div style="left:1343px;top:659px;width:1px;height:8px;background:#1a1a1a;"></div>
<span style="left:1351px;top:658px;font-size:11px;color:#f2f2f2;font-weight:bold;width:58px;overflow:hidden;letter-spacing:0.25px;">3/4 OP-Z S</span>
<svg style="left:1406px;top:660px" width="9" height="7"><path d="M0 0H9L4.5 7Z" fill="#f0f0f0"/></svg>
<div style="left:1339px;top:675px;width:19px;height:14px;background:#2c2c2c;border:1px solid #232323;"></div>
<span style="left:1339px;top:677px;font-size:11px;color:#f2f2f2;font-weight:bold;width:19px;text-align:center;overflow:hidden;letter-spacing:0.3px;">In</span>
<div style="left:1362px;top:675px;width:30px;height:14px;background:#2c2c2c;border:1px solid #232323;"></div>
<span style="left:1362px;top:677px;font-size:11px;color:#f2f2f2;font-weight:bold;width:30px;text-align:center;overflow:hidden;letter-spacing:0.3px;">Auto</span>
<div style="left:1395px;top:675px;width:23px;height:14px;background:#F0982A;border:1px solid #232323;"></div>
<span style="left:1395px;top:677px;font-size:11px;color:#3a2a10;font-weight:normal;width:23px;text-align:center;overflow:hidden;letter-spacing:0.3px;">Off</span>
<div style="left:1339px;top:695px;width:79px;height:14px;background:#2c2c2c;border:1px solid #232323;"></div>
<span style="left:1341px;top:697px;font-size:11px;color:#f2f2f2;font-weight:bold;width:68px;overflow:hidden;letter-spacing:0.25px;">Master</span>
<svg style="left:1406px;top:699px" width="9" height="7"><path d="M0 0H9L4.5 7Z" fill="#f0f0f0"/></svg>
<div style="left:1339px;top:714px;width:79px;height:14px;background:#4d4d4d;border:1px solid #303030;border-radius:1px;"></div>
<div style="left:1426px;top:637px;width:51px;height:14px;background:#F0982A;border:1px solid #7a5a20;"></div>
<span style="left:1426px;top:639px;font-size:11px;color:#222;font-weight:normal;width:51px;text-align:center;overflow:hidden;letter-spacing:0.3px;">7</span>
<div style="left:1482px;top:637px;width:24px;height:14px;background:#383838;border:1px solid #2a2a2a;"></div>
<span style="left:1482px;top:639px;font-size:11px;color:#d8d8d8;font-weight:bold;width:24px;text-align:center;overflow:hidden;letter-spacing:0.3px;">S</span>
<div style="left:1511px;top:637px;width:23px;height:14px;background:#383838;border:1px solid #2a2a2a;"></div>
<svg style="left:1517px;top:639px" width="10" height="10"><circle cx="5" cy="5" r="4" fill="#f0f0f0"/></svg>
<div style="left:1426px;top:656px;width:51px;height:14px;background:#2c2c2c;border:1px solid #262626;"></div>
<div style="left:1427px;top:657px;width:43px;height:12px;background:#1C7284;"></div>
<div style="left:1428px;top:657px;width:3px;height:3px;background:#e03a2a;border-radius:50%;"></div>
<span style="left:1426px;top:658px;font-size:11px;color:#f2f2f2;font-weight:bold;width:51px;text-align:center;">0</span>
<div style="left:1482px;top:656px;width:52px;height:14px;background:#2c2c2c;border:1px solid #262626;"></div>
<span style="left:1482px;top:658px;font-size:11px;color:#bbb;font-weight:bold;width:52px;text-align:center;">48L</span>
<div style="left:1426px;top:675px;width:34px;height:14px;background:#2c2c2c;border:1px solid #232323;"></div>
<span style="left:1426px;top:677px;font-size:11px;color:#e8e8e8;font-weight:bold;width:34px;text-align:center;overflow:hidden;letter-spacing:0.3px;">-inf</span>
<div style="left:1463px;top:675px;width:34px;height:14px;background:#2c2c2c;border:1px solid #232323;"></div>
<span style="left:1463px;top:677px;font-size:11px;color:#e8e8e8;font-weight:bold;width:34px;text-align:center;overflow:hidden;letter-spacing:0.3px;">-inf</span>
<div style="left:1339px;top:853px;width:79px;height:14px;background:#2c2c2c;border:1px solid #232323;"></div>
<span style="left:1341px;top:855px;font-size:11px;color:#f2f2f2;font-weight:bold;width:68px;overflow:hidden;letter-spacing:0.25px;">Ext. In</span>
<svg style="left:1406px;top:857px" width="9" height="7"><path d="M0 0H9L4.5 7Z" fill="#f0f0f0"/></svg>
<div style="left:1339px;top:872px;width:79px;height:14px;background:#2c2c2c;border:1px solid #232323;"></div>
<div style="left:1341px;top:875px;width:1px;height:8px;background:#1a1a1a;"></div>
<div style="left:1343px;top:875px;width:1px;height:8px;background:#1a1a1a;"></div>
<span style="left:1351px;top:874px;font-size:11px;color:#f2f2f2;font-weight:bold;width:58px;overflow:hidden;letter-spacing:0.25px;">3/4 OP-Z S</span>
<svg style="left:1406px;top:876px" width="9" height="7"><path d="M0 0H9L4.5 7Z" fill="#f0f0f0"/></svg>
<div style="left:1339px;top:891px;width:19px;height:14px;background:#2c2c2c;border:1px solid #232323;"></div>
<span style="left:1339px;top:893px;font-size:11px;color:#f2f2f2;font-weight:bold;width:19px;text-align:center;overflow:hidden;letter-spacing:0.3px;">In</span>
<div style="left:1362px;top:891px;width:30px;height:14px;background:#2c2c2c;border:1px solid #232323;"></div>
<span style="left:1362px;top:893px;font-size:11px;color:#f2f2f2;font-weight:bold;width:30px;text-align:center;overflow:hidden;letter-spacing:0.3px;">Auto</span>
<div style="left:1395px;top:891px;width:23px;height:14px;background:#F0982A;border:1px solid #232323;"></div>
<span style="left:1395px;top:893px;font-size:11px;color:#3a2a10;font-weight:normal;width:23px;text-align:center;overflow:hidden;letter-spacing:0.3px;">Off</span>
<div style="left:1339px;top:911px;width:79px;height:14px;background:#2c2c2c;border:1px solid #232323;"></div>
<span style="left:1341px;top:913px;font-size:11px;color:#f2f2f2;font-weight:bold;width:68px;overflow:hidden;letter-spacing:0.25px;">Master</span>
<svg style="left:1406px;top:915px" width="9" height="7"><path d="M0 0H9L4.5 7Z" fill="#f0f0f0"/></svg>
<div style="left:1339px;top:930px;width:79px;height:14px;background:#4d4d4d;border:1px solid #303030;border-radius:1px;"></div>
<div style="left:1426px;top:853px;width:51px;height:14px;background:#F0982A;border:1px solid #7a5a20;"></div>
<span style="left:1426px;top:855px;font-size:11px;color:#222;font-weight:normal;width:51px;text-align:center;overflow:hidden;letter-spacing:0.3px;">8</span>
<div style="left:1482px;top:853px;width:24px;height:14px;background:#383838;border:1px solid #2a2a2a;"></div>
<span style="left:1482px;top:855px;font-size:11px;color:#d8d8d8;font-weight:bold;width:24px;text-align:center;overflow:hidden;letter-spacing:0.3px;">S</span>
<div style="left:1511px;top:853px;width:23px;height:14px;background:#383838;border:1px solid #2a2a2a;"></div>
<svg style="left:1517px;top:855px" width="10" height="10"><circle cx="5" cy="5" r="4" fill="#f0f0f0"/></svg>
<div style="left:1426px;top:872px;width:51px;height:14px;background:#2c2c2c;border:1px solid #262626;"></div>
<div style="left:1427px;top:873px;width:43px;height:12px;background:#1C7284;"></div>
<span style="left:1426px;top:874px;font-size:11px;color:#f2f2f2;font-weight:bold;width:51px;text-align:center;">0</span>
<div style="left:1482px;top:872px;width:52px;height:14px;background:#2c2c2c;border:1px solid #262626;"></div>
<div style="left:1490px;top:873px;width:18px;height:12px;background:#1C7284;"></div>
<span style="left:1482px;top:874px;font-size:11px;color:#f2f2f2;font-weight:bold;width:52px;text-align:center;">37L</span>
<div style="left:1426px;top:891px;width:34px;height:14px;background:#2c2c2c;border:1px solid #232323;"></div>
<span style="left:1426px;top:893px;font-size:11px;color:#e8e8e8;font-weight:bold;width:34px;text-align:center;overflow:hidden;letter-spacing:0.3px;">-inf</span>
<div style="left:1463px;top:891px;width:34px;height:14px;background:#2c2c2c;border:1px solid #232323;"></div>
<span style="left:1463px;top:893px;font-size:11px;color:#e8e8e8;font-weight:bold;width:34px;text-align:center;overflow:hidden;letter-spacing:0.3px;">-inf</span>
<div style="left:1339px;top:953px;width:79px;height:14px;background:#2c2c2c;border:1px solid #232323;"></div>
<span style="left:1341px;top:955px;font-size:11px;color:#f2f2f2;font-weight:bold;width:68px;overflow:hidden;letter-spacing:0.25px;">Ext. In</span>
<svg style="left:1406px;top:957px" width="9" height="7"><path d="M0 0H9L4.5 7Z" fill="#f0f0f0"/></svg>
<div style="left:1339px;top:972px;width:79px;height:14px;background:#2c2c2c;border:1px solid #232323;"></div>
<div style="left:1341px;top:975px;width:1px;height:8px;background:#1a1a1a;"></div>
<div style="left:1343px;top:975px;width:1px;height:8px;background:#1a1a1a;"></div>
<span style="left:1351px;top:974px;font-size:11px;color:#f2f2f2;font-weight:bold;width:58px;overflow:hidden;letter-spacing:0.25px;">3/4 OP-Z S</span>
<svg style="left:1406px;top:976px" width="9" height="7"><path d="M0 0H9L4.5 7Z" fill="#f0f0f0"/></svg>
<div style="left:1339px;top:991px;width:19px;height:14px;background:#2c2c2c;border:1px solid #232323;"></div>
<span style="left:1339px;top:993px;font-size:11px;color:#f2f2f2;font-weight:bold;width:19px;text-align:center;overflow:hidden;letter-spacing:0.3px;">In</span>
<div style="left:1362px;top:991px;width:30px;height:14px;background:#2c2c2c;border:1px solid #232323;"></div>
<span style="left:1362px;top:993px;font-size:11px;color:#f2f2f2;font-weight:bold;width:30px;text-align:center;overflow:hidden;letter-spacing:0.3px;">Auto</span>
<div style="left:1395px;top:991px;width:23px;height:14px;background:#F0982A;border:1px solid #232323;"></div>
<span style="left:1395px;top:993px;font-size:11px;color:#3a2a10;font-weight:normal;width:23px;text-align:center;overflow:hidden;letter-spacing:0.3px;">Off</span>
<div style="left:1339px;top:1011px;width:79px;height:14px;background:#2c2c2c;border:1px solid #232323;"></div>
<span style="left:1341px;top:1013px;font-size:11px;color:#f2f2f2;font-weight:bold;width:68px;overflow:hidden;letter-spacing:0.25px;">Master</span>
<svg style="left:1406px;top:1015px" width="9" height="7"><path d="M0 0H9L4.5 7Z" fill="#f0f0f0"/></svg>
<div style="left:1339px;top:1030px;width:79px;height:14px;background:#4d4d4d;border:1px solid #303030;border-radius:1px;"></div>
<div style="left:1426px;top:953px;width:51px;height:14px;background:#F0982A;border:1px solid #7a5a20;"></div>
<span style="left:1426px;top:955px;font-size:11px;color:#222;font-weight:normal;width:51px;text-align:center;overflow:hidden;letter-spacing:0.3px;">9</span>
<div style="left:1482px;top:953px;width:24px;height:14px;background:#383838;border:1px solid #2a2a2a;"></div>
<span style="left:1482px;top:955px;font-size:11px;color:#d8d8d8;font-weight:bold;width:24px;text-align:center;overflow:hidden;letter-spacing:0.3px;">S</span>
<div style="left:1511px;top:953px;width:23px;height:14px;background:#383838;border:1px solid #2a2a2a;"></div>
<svg style="left:1517px;top:955px" width="10" height="10"><circle cx="5" cy="5" r="4" fill="#f0f0f0"/></svg>
<div style="left:1426px;top:972px;width:51px;height:14px;background:#2c2c2c;border:1px solid #262626;"></div>
<div style="left:1427px;top:973px;width:43px;height:12px;background:#1C7284;"></div>
<span style="left:1426px;top:974px;font-size:11px;color:#f2f2f2;font-weight:bold;width:51px;text-align:center;">0</span>
<div style="left:1482px;top:972px;width:52px;height:14px;background:#2c2c2c;border:1px solid #262626;"></div>
<div style="left:1508px;top:973px;width:14px;height:12px;background:#1C7284;"></div>
<span style="left:1482px;top:974px;font-size:11px;color:#f2f2f2;font-weight:bold;width:52px;text-align:center;">28R</span>
<div style="left:1426px;top:991px;width:34px;height:14px;background:#2c2c2c;border:1px solid #232323;"></div>
<span style="left:1426px;top:993px;font-size:11px;color:#e8e8e8;font-weight:bold;width:34px;text-align:center;overflow:hidden;letter-spacing:0.3px;">-inf</span>
<div style="left:1463px;top:991px;width:34px;height:14px;background:#2c2c2c;border:1px solid #232323;"></div>
<span style="left:1463px;top:993px;font-size:11px;color:#e8e8e8;font-weight:bold;width:34px;text-align:center;overflow:hidden;letter-spacing:0.3px;">-inf</span>
<div style="left:1339px;top:1052px;width:79px;height:14px;background:#2c2c2c;border:1px solid #232323;"></div>
<span style="left:1341px;top:1054px;font-size:11px;color:#f2f2f2;font-weight:bold;width:68px;overflow:hidden;letter-spacing:0.25px;">Ext. In</span>
<svg style="left:1406px;top:1056px" width="9" height="7"><path d="M0 0H9L4.5 7Z" fill="#f0f0f0"/></svg>
<div style="left:1339px;top:1071px;width:79px;height:14px;background:#2c2c2c;border:1px solid #232323;"></div>
<div style="left:1341px;top:1074px;width:1px;height:8px;background:#1a1a1a;"></div>
<div style="left:1343px;top:1074px;width:1px;height:8px;background:#1a1a1a;"></div>
<span style="left:1351px;top:1073px;font-size:11px;color:#f2f2f2;font-weight:bold;width:58px;overflow:hidden;letter-spacing:0.25px;">3/4 OP-Z S</span>
<svg style="left:1406px;top:1075px" width="9" height="7"><path d="M0 0H9L4.5 7Z" fill="#f0f0f0"/></svg>
<div style="left:1339px;top:1090px;width:19px;height:14px;background:#2c2c2c;border:1px solid #232323;"></div>
<span style="left:1339px;top:1092px;font-size:11px;color:#f2f2f2;font-weight:bold;width:19px;text-align:center;overflow:hidden;letter-spacing:0.3px;">In</span>
<div style="left:1362px;top:1090px;width:30px;height:14px;background:#2c2c2c;border:1px solid #232323;"></div>
<span style="left:1362px;top:1092px;font-size:11px;color:#f2f2f2;font-weight:bold;width:30px;text-align:center;overflow:hidden;letter-spacing:0.3px;">Auto</span>
<div style="left:1395px;top:1090px;width:23px;height:14px;background:#F0982A;border:1px solid #232323;"></div>
<span style="left:1395px;top:1092px;font-size:11px;color:#3a2a10;font-weight:normal;width:23px;text-align:center;overflow:hidden;letter-spacing:0.3px;">Off</span>
<div style="left:1339px;top:1110px;width:79px;height:14px;background:#2c2c2c;border:1px solid #232323;"></div>
<span style="left:1341px;top:1112px;font-size:11px;color:#f2f2f2;font-weight:bold;width:68px;overflow:hidden;letter-spacing:0.25px;">Master</span>
<svg style="left:1406px;top:1114px" width="9" height="7"><path d="M0 0H9L4.5 7Z" fill="#f0f0f0"/></svg>
<div style="left:1339px;top:1129px;width:79px;height:14px;background:#4d4d4d;border:1px solid #303030;border-radius:1px;"></div>
<div style="left:1426px;top:1052px;width:51px;height:14px;background:#F0982A;border:1px solid #7a5a20;"></div>
<span style="left:1426px;top:1054px;font-size:11px;color:#222;font-weight:normal;width:51px;text-align:center;overflow:hidden;letter-spacing:0.3px;">10</span>
<div style="left:1482px;top:1052px;width:24px;height:14px;background:#383838;border:1px solid #2a2a2a;"></div>
<span style="left:1482px;top:1054px;font-size:11px;color:#d8d8d8;font-weight:bold;width:24px;text-align:center;overflow:hidden;letter-spacing:0.3px;">S</span>
<div style="left:1511px;top:1052px;width:23px;height:14px;background:#383838;border:1px solid #2a2a2a;"></div>
<svg style="left:1517px;top:1054px" width="10" height="10"><circle cx="5" cy="5" r="4" fill="#f0f0f0"/></svg>
<div style="left:1426px;top:1071px;width:51px;height:14px;background:#2c2c2c;border:1px solid #262626;"></div>
<div style="left:1427px;top:1072px;width:43px;height:12px;background:#1C7284;"></div>
<span style="left:1426px;top:1073px;font-size:11px;color:#f2f2f2;font-weight:bold;width:51px;text-align:center;">0</span>
<div style="left:1482px;top:1071px;width:52px;height:14px;background:#2c2c2c;border:1px solid #262626;"></div>
<span style="left:1482px;top:1073px;font-size:11px;color:#f2f2f2;font-weight:bold;width:52px;text-align:center;">C</span>
<div style="left:1426px;top:1090px;width:34px;height:14px;background:#2c2c2c;border:1px solid #232323;"></div>
<span style="left:1426px;top:1092px;font-size:11px;color:#e8e8e8;font-weight:bold;width:34px;text-align:center;overflow:hidden;letter-spacing:0.3px;">-inf</span>
<div style="left:1463px;top:1090px;width:34px;height:14px;background:#2c2c2c;border:1px solid #232323;"></div>
<span style="left:1463px;top:1092px;font-size:11px;color:#e8e8e8;font-weight:bold;width:34px;text-align:center;overflow:hidden;letter-spacing:0.3px;">-inf</span>
<div style="left:1339px;top:1152px;width:79px;height:14px;background:#2c2c2c;border:1px solid #232323;"></div>
<span style="left:1341px;top:1154px;font-size:11px;color:#f2f2f2;font-weight:bold;width:68px;overflow:hidden;letter-spacing:0.25px;">Ext. In</span>
<svg style="left:1406px;top:1156px" width="9" height="7"><path d="M0 0H9L4.5 7Z" fill="#f0f0f0"/></svg>
<div style="left:1339px;top:1171px;width:79px;height:14px;background:#2c2c2c;border:1px solid #232323;"></div>
<div style="left:1341px;top:1174px;width:1px;height:8px;background:#1a1a1a;"></div>
<div style="left:1343px;top:1174px;width:1px;height:8px;background:#1a1a1a;"></div>
<span style="left:1351px;top:1173px;font-size:11px;color:#f2f2f2;font-weight:bold;width:58px;overflow:hidden;letter-spacing:0.25px;">5/6 PreS S</span>
<svg style="left:1406px;top:1175px" width="9" height="7"><path d="M0 0H9L4.5 7Z" fill="#f0f0f0"/></svg>
<div style="left:1339px;top:1190px;width:19px;height:14px;background:#2c2c2c;border:1px solid #232323;"></div>
<span style="left:1339px;top:1192px;font-size:11px;color:#f2f2f2;font-weight:bold;width:19px;text-align:center;overflow:hidden;letter-spacing:0.3px;">In</span>
<div style="left:1362px;top:1190px;width:30px;height:14px;background:#2c2c2c;border:1px solid #232323;"></div>
<span style="left:1362px;top:1192px;font-size:11px;color:#f2f2f2;font-weight:bold;width:30px;text-align:center;overflow:hidden;letter-spacing:0.3px;">Auto</span>
<div style="left:1395px;top:1190px;width:23px;height:14px;background:#F0982A;border:1px solid #232323;"></div>
<span style="left:1395px;top:1192px;font-size:11px;color:#3a2a10;font-weight:normal;width:23px;text-align:center;overflow:hidden;letter-spacing:0.3px;">Off</span>
<div style="left:1339px;top:1210px;width:79px;height:14px;background:#2c2c2c;border:1px solid #232323;"></div>
<span style="left:1341px;top:1212px;font-size:11px;color:#f2f2f2;font-weight:bold;width:68px;overflow:hidden;letter-spacing:0.25px;">Master</span>
<svg style="left:1406px;top:1214px" width="9" height="7"><path d="M0 0H9L4.5 7Z" fill="#f0f0f0"/></svg>
<div style="left:1339px;top:1229px;width:79px;height:14px;background:#4d4d4d;border:1px solid #303030;border-radius:1px;"></div>
<div style="left:1426px;top:1152px;width:51px;height:14px;background:#F0982A;border:1px solid #7a5a20;"></div>
<span style="left:1426px;top:1154px;font-size:11px;color:#222;font-weight:normal;width:51px;text-align:center;overflow:hidden;letter-spacing:0.3px;">11</span>
<div style="left:1482px;top:1152px;width:24px;height:14px;background:#383838;border:1px solid #2a2a2a;"></div>
<span style="left:1482px;top:1154px;font-size:11px;color:#d8d8d8;font-weight:bold;width:24px;text-align:center;overflow:hidden;letter-spacing:0.3px;">S</span>
<div style="left:1511px;top:1152px;width:23px;height:14px;background:#383838;border:1px solid #2a2a2a;"></div>
<svg style="left:1517px;top:1154px" width="10" height="10"><circle cx="5" cy="5" r="4" fill="#f0f0f0"/></svg>
<div style="left:1426px;top:1171px;width:51px;height:14px;background:#2c2c2c;border:1px solid #262626;"></div>
<div style="left:1427px;top:1172px;width:43px;height:12px;background:#1C7284;"></div>
<span style="left:1426px;top:1173px;font-size:11px;color:#f2f2f2;font-weight:bold;width:51px;text-align:center;">0</span>
<div style="left:1482px;top:1171px;width:52px;height:14px;background:#2c2c2c;border:1px solid #262626;"></div>
<span style="left:1482px;top:1173px;font-size:11px;color:#f2f2f2;font-weight:bold;width:52px;text-align:center;">C</span>
<div style="left:1426px;top:1190px;width:34px;height:14px;background:#2c2c2c;border:1px solid #232323;"></div>
<span style="left:1426px;top:1192px;font-size:11px;color:#e8e8e8;font-weight:bold;width:34px;text-align:center;overflow:hidden;letter-spacing:0.3px;">-inf</span>
<div style="left:1463px;top:1190px;width:34px;height:14px;background:#2c2c2c;border:1px solid #232323;"></div>
<span style="left:1463px;top:1192px;font-size:11px;color:#e8e8e8;font-weight:bold;width:34px;text-align:center;overflow:hidden;letter-spacing:0.3px;">-inf</span>
<div style="left:1339px;top:1303px;width:79px;height:14px;background:#4d4d4d;border:1px solid #303030;border-radius:1px;"></div>
<div style="left:1426px;top:1303px;width:51px;height:14px;background:#F0982A;border:1px solid #7a5a20;"></div>
<span style="left:1426px;top:1305px;font-size:11px;color:#222;font-weight:normal;width:51px;text-align:center;overflow:hidden;letter-spacing:0.3px;">A</span>
<div style="left:1482px;top:1303px;width:19px;height:14px;background:#383838;border:1px solid #2a2a2a;"></div>
<span style="left:1482px;top:1305px;font-size:11px;color:#d8d8d8;font-weight:bold;width:19px;text-align:center;overflow:hidden;letter-spacing:0.3px;">S</span>
<div style="left:1506px;top:1303px;width:30px;height:14px;background:#F0982A;border:1px solid #7a5a20;"></div>
<span style="left:1506px;top:1305px;font-size:11px;color:#3a2a10;font-weight:normal;width:30px;text-align:center;overflow:hidden;letter-spacing:0.3px;">Post</span>
<div style="left:1339px;top:1325px;width:79px;height:14px;background:#4d4d4d;border:1px solid #303030;border-radius:1px;"></div>
<div style="left:1426px;top:1325px;width:51px;height:14px;background:#F0982A;border:1px solid #7a5a20;"></div>
<span style="left:1426px;top:1327px;font-size:11px;color:#222;font-weight:normal;width:51px;text-align:center;overflow:hidden;letter-spacing:0.3px;">B</span>
<div style="left:1482px;top:1325px;width:19px;height:14px;background:#383838;border:1px solid #2a2a2a;"></div>
<span style="left:1482px;top:1327px;font-size:11px;color:#d8d8d8;font-weight:bold;width:19px;text-align:center;overflow:hidden;letter-spacing:0.3px;">S</span>
<div style="left:1506px;top:1325px;width:30px;height:14px;background:#F0982A;border:1px solid #7a5a20;"></div>
<span style="left:1506px;top:1327px;font-size:11px;color:#3a2a10;font-weight:normal;width:30px;text-align:center;overflow:hidden;letter-spacing:0.3px;">Post</span>
<div style="left:1339px;top:1346px;width:79px;height:14px;background:#2c2c2c;border:1px solid #232323;"></div>
<div style="left:1341px;top:1349px;width:1px;height:8px;background:#1a1a1a;"></div>
<div style="left:1343px;top:1349px;width:1px;height:8px;background:#1a1a1a;"></div>
<div style="left:1341px;top:1355px;width:1px;height:2px;background:#3fd13f;"></div>
<div style="left:1343px;top:1355px;width:1px;height:2px;background:#3fd13f;"></div>
<span style="left:1353px;top:1348px;font-size:11px;color:#f2f2f2;font-weight:bold;width:56px;overflow:hidden;letter-spacing:0.25px;">1/2</span>
<svg style="left:1406px;top:1350px" width="9" height="7"><path d="M0 0H9L4.5 7Z" fill="#f0f0f0"/></svg>
<div style="left:1339px;top:1365px;width:79px;height:14px;background:#2c2c2c;border:1px solid #232323;"></div>
<div style="left:1341px;top:1368px;width:1px;height:8px;background:#1a1a1a;"></div>
<div style="left:1343px;top:1368px;width:1px;height:8px;background:#1a1a1a;"></div>
<div style="left:1341px;top:1374px;width:1px;height:2px;background:#3fd13f;"></div>
<div style="left:1343px;top:1374px;width:1px;height:2px;background:#3fd13f;"></div>
<span style="left:1353px;top:1367px;font-size:11px;color:#f2f2f2;font-weight:bold;width:56px;overflow:hidden;letter-spacing:0.25px;">1/2</span>
<svg style="left:1406px;top:1369px" width="9" height="7"><path d="M0 0H9L4.5 7Z" fill="#f0f0f0"/></svg>
<div style="left:1426px;top:1346px;width:51px;height:14px;background:#2c2c2c;border:1px solid #262626;"></div>
<div style="left:1427px;top:1347px;width:43px;height:12px;background:#1C7284;"></div>
<span style="left:1426px;top:1348px;font-size:11px;color:#f2f2f2;font-weight:bold;width:51px;text-align:center;">0</span>
<div style="left:1482px;top:1346px;width:52px;height:14px;background:#2c2c2c;border:1px solid #262626;"></div>
<div style="left:1483px;top:1347px;width:44px;height:12px;background:#3B7FD6;"></div>
<span style="left:1482px;top:1348px;font-size:11px;color:#f2f2f2;font-weight:bold;width:46px;text-align:center;">0</span>
<div style="left:1482px;top:1365px;width:52px;height:14px;background:#2c2c2c;border:1px solid #232323;"></div>
<span style="left:1482px;top:1367px;font-size:11px;color:#f2f2f2;font-weight:bold;width:52px;text-align:center;overflow:hidden;letter-spacing:0.3px;">C</span>
</body></html>
